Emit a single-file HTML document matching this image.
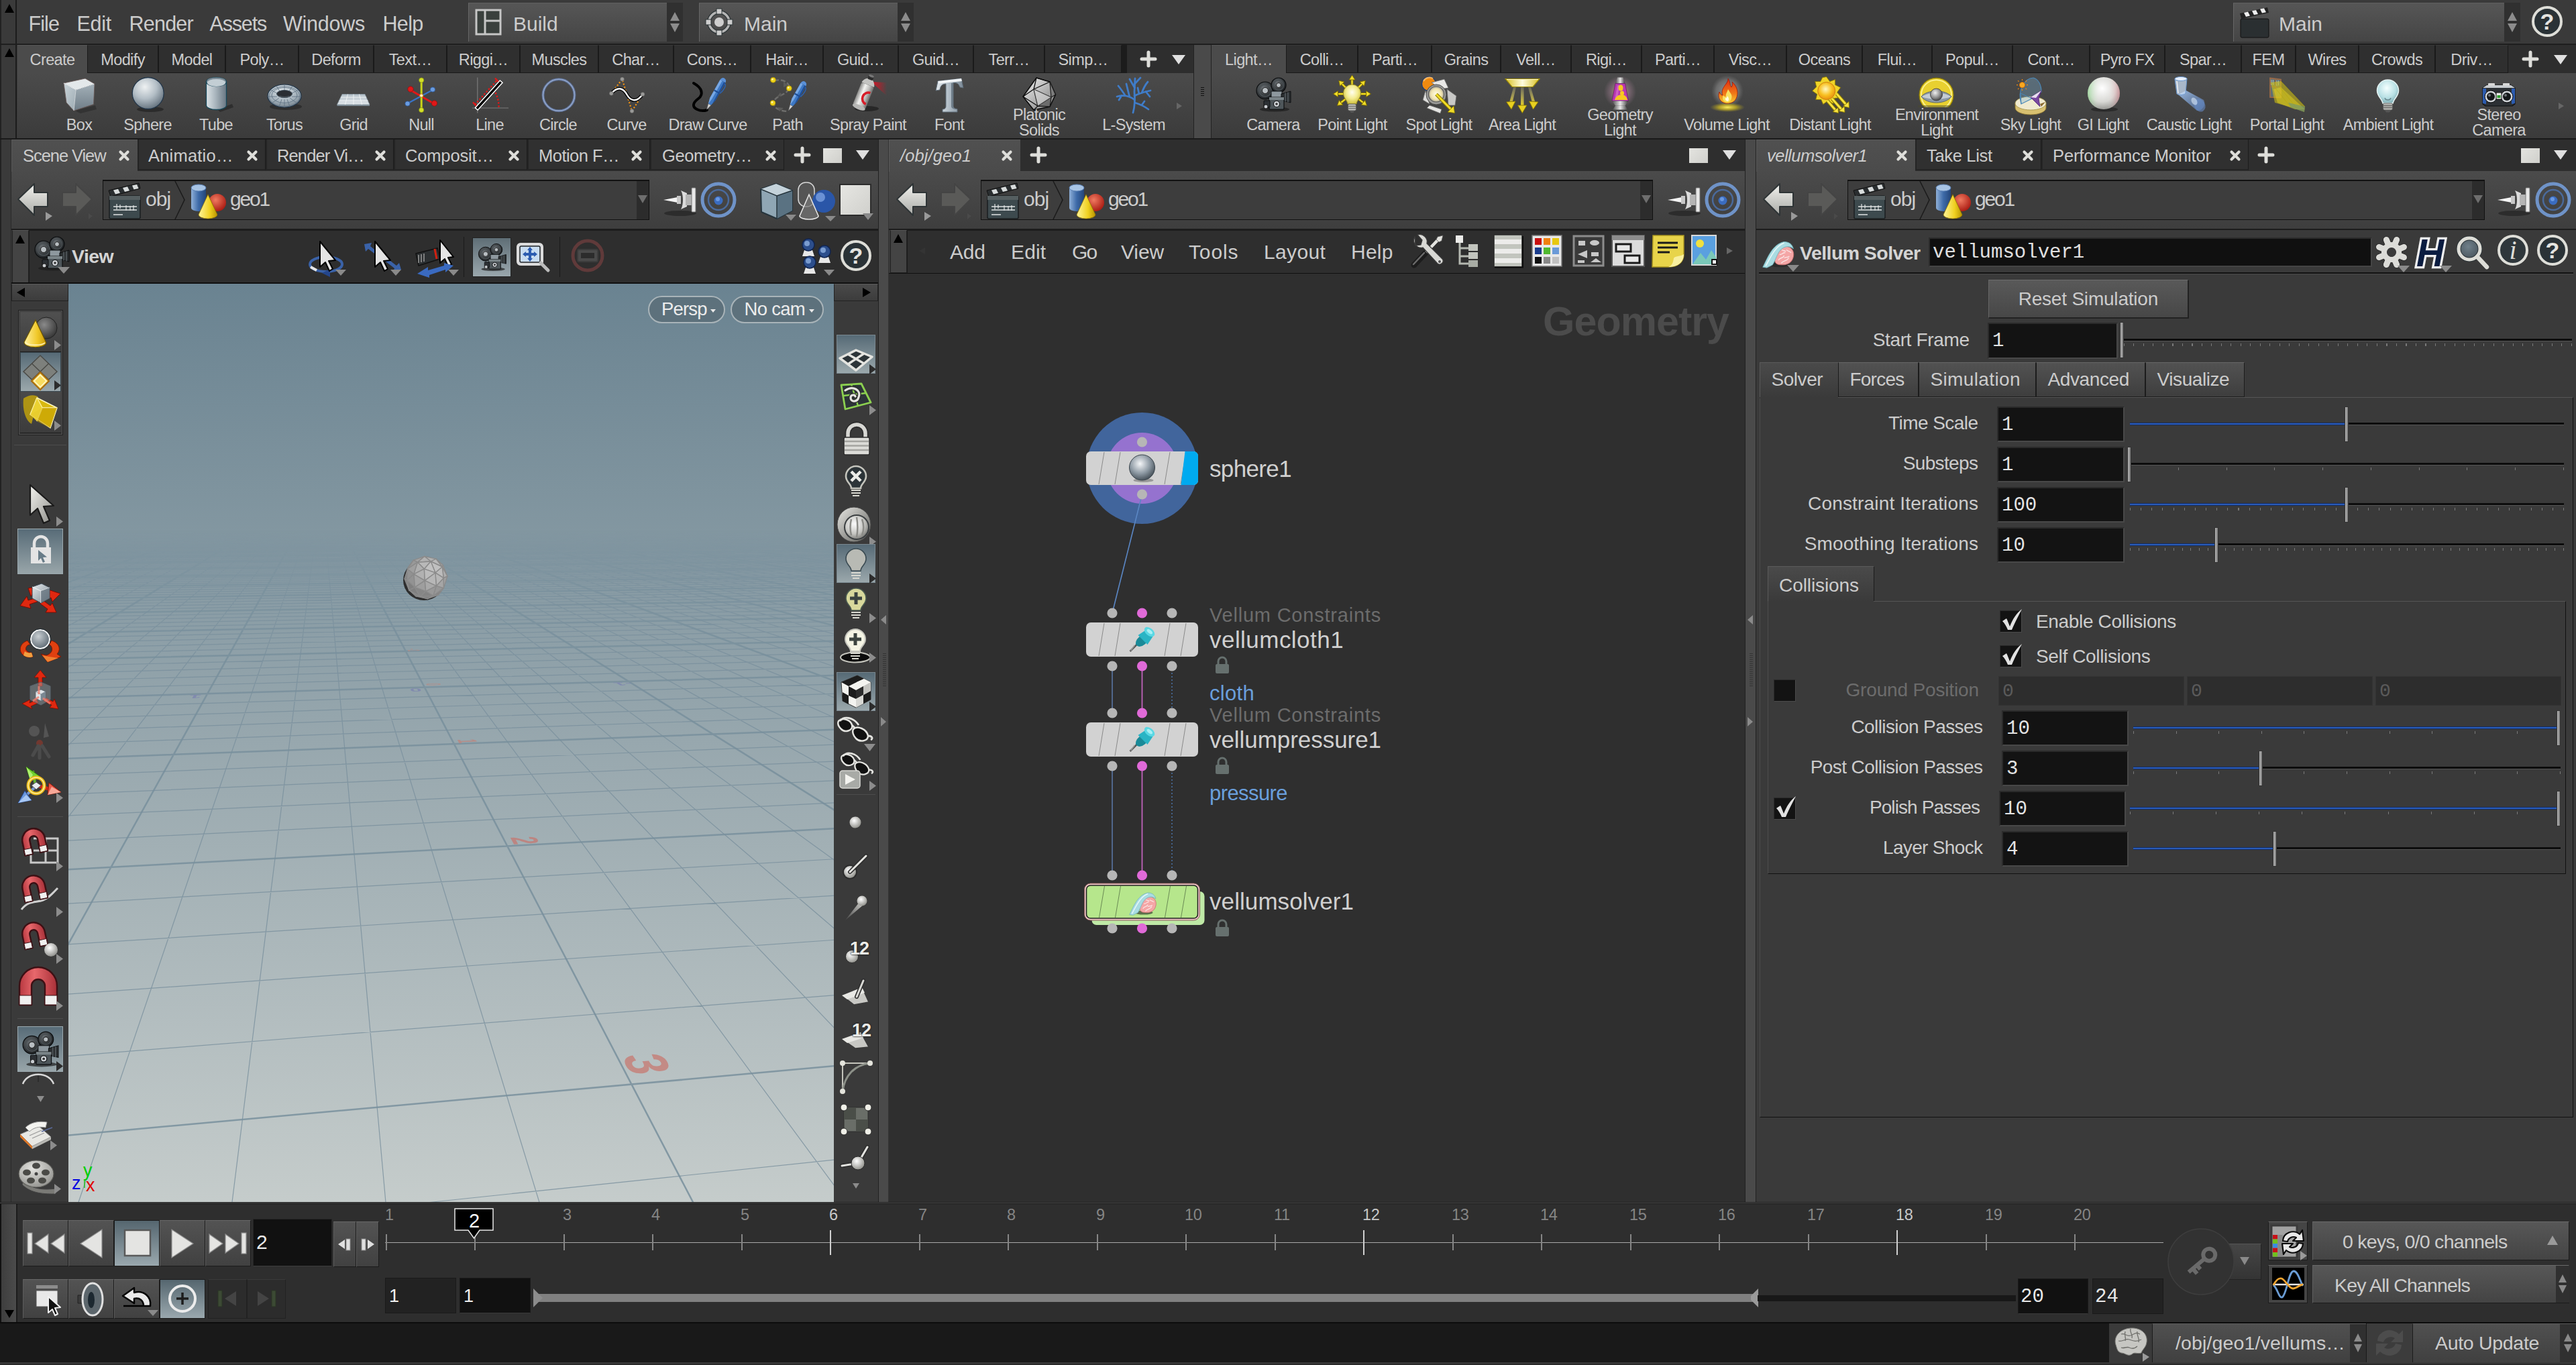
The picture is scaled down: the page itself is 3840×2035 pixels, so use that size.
<!DOCTYPE html>
<html><head><meta charset="utf-8"><title>Houdini</title>
<style>
svg{overflow:visible}
html,body{margin:0;padding:0;background:#3a3a3a}
body{width:3840px;height:2035px;position:relative;overflow:hidden;font-family:"Liberation Sans",sans-serif;color:#cccccc}
.a{position:absolute;box-sizing:border-box}
.t{position:absolute;white-space:nowrap;color:#cccccc}
.m{font-family:"Liberation Mono",monospace}
.btn{background:linear-gradient(#565656,#454545);border:1px solid #1e1e1e;box-shadow:inset 1px 1px 0 #6a6a6a}
.fld{background:#131313;border:2px solid #2a2a2a}
</style></head>
<body>
<div class="a" style="left:0px;top:0px;width:3840px;height:66px;background:#3a3a3a;"></div>
<div class="a" style="left:0px;top:0px;width:25px;height:206px;background:#3a3a3a;border-right:2px solid #1c1c1c;border-left:2px solid #222"></div>
<div class="a" style="left:0px;top:65px;width:3840px;height:2px;background:#1e1e1e;"></div>
<svg class="a" style="left:6px;top:6px;" width="16" height="14" viewBox="0 0 16 14"><path d="M8 0L15 13H1z" fill="#000"/></svg>
<svg class="a" style="left:6px;top:72px;" width="16" height="14" viewBox="0 0 16 14"><path d="M8 0L15 13H1z" fill="#000"/></svg>
<div class="t" style="top:19.8px;font-size:30.5px;line-height:30.5px;color:#cccccc;left:42.5px;letter-spacing:-0.91px;">File</div>
<div class="t" style="top:19.8px;font-size:30.5px;line-height:30.5px;color:#cccccc;left:114.5px;letter-spacing:-0.26px;">Edit</div>
<div class="t" style="top:19.8px;font-size:30.5px;line-height:30.5px;color:#cccccc;left:192.5px;letter-spacing:-0.76px;">Render</div>
<div class="t" style="top:19.8px;font-size:30.5px;line-height:30.5px;color:#cccccc;left:312.5px;letter-spacing:-1.17px;">Assets</div>
<div class="t" style="top:19.8px;font-size:30.5px;line-height:30.5px;color:#cccccc;left:422px;letter-spacing:-0.25px;">Windows</div>
<div class="t" style="top:19.8px;font-size:30.5px;line-height:30.5px;color:#cccccc;left:570.5px;letter-spacing:-0.68px;">Help</div>
<div class="a" style="left:698px;top:4px;width:320px;height:58px;background:linear-gradient(#565656,#454545);border-left:1px solid #666;border-top:1px solid #5e5e5e;"></div>
<div class="a" style="left:994px;top:4px;width:24px;height:58px;background:#303030;"></div>
<svg class="a" style="left:998px;top:18px;" width="16" height="30" viewBox="0 0 16 30"><path d="M8 0L15 13H1z M8 30L15 17H1z" fill="#8c8c8c"/></svg>
<svg class="a" style="left:707px;top:12px;" width="42" height="42" viewBox="0 0 42 42"><rect x="3" y="3" width="36" height="36" fill="#3a403d" stroke="#c6c6c6" stroke-width="3"/><path d="M16 3V39M16 19H39" stroke="#c6c6c6" stroke-width="3"/></svg>
<div class="t" style="top:20.7px;font-size:30px;line-height:30px;color:#cccccc;left:765px;">Build</div>
<div class="a" style="left:1042px;top:4px;width:320px;height:58px;background:linear-gradient(#565656,#454545);border-left:1px solid #666;border-top:1px solid #5e5e5e;"></div>
<div class="a" style="left:1338px;top:4px;width:24px;height:58px;background:#303030;"></div>
<svg class="a" style="left:1342px;top:18px;" width="16" height="30" viewBox="0 0 16 30"><path d="M8 0L15 13H1z M8 30L15 17H1z" fill="#8c8c8c"/></svg>
<svg class="a" style="left:1050px;top:11px;" width="44" height="44" viewBox="0 0 44 44"><circle cx="22" cy="22" r="15" fill="none" stroke="#2c3436" stroke-width="6"/><circle cx="22" cy="22" r="15" fill="none" stroke="#b4b4b4" stroke-width="3.500"/><circle cx="22" cy="22" r="7" fill="#cecece"/><g fill="#cecece" stroke="#2c3436" stroke-width="1"><rect x="18" y="2" width="8" height="8"/><rect x="18" y="34" width="8" height="8"/><rect x="2" y="18" width="8" height="8"/><rect x="34" y="18" width="8" height="8"/></g></svg>
<div class="t" style="top:20.7px;font-size:30px;line-height:30px;color:#cccccc;left:1109px;">Main</div>
<div class="a" style="left:3329px;top:4px;width:428px;height:58px;background:linear-gradient(#565656,#454545);border-left:1px solid #666;border-top:1px solid #5e5e5e;"></div>
<div class="a" style="left:3733px;top:4px;width:24px;height:58px;background:#303030;"></div>
<svg class="a" style="left:3737px;top:18px;" width="16" height="30" viewBox="0 0 16 30"><path d="M8 0L15 13H1z M8 30L15 17H1z" fill="#8c8c8c"/></svg>
<svg class="a" style="left:3336px;top:8px;" width="50" height="50" viewBox="0 0 50 50"><rect x="4" y="20" width="42" height="28" rx="2" fill="#2a2f31" stroke="#111" stroke-width="1"/><path d="M3 12L44 3L46 11L5 20z" fill="#222"/><path d="M9 11l6-1.4 3 6-6 1.4zM21 8.3l6-1.4 3 6-6 1.4zM33 5.6l6-1.4 3 6-6 1.4z" fill="#eee"/></svg>
<div class="t" style="top:20.7px;font-size:30px;line-height:30px;color:#cccccc;left:3397px;">Main</div>
<svg class="a" style="left:3773px;top:8px;" width="48" height="48" viewBox="0 0 48 48"><circle cx="24" cy="24" r="21" fill="#2a3236" stroke="#deded8" stroke-width="4"/><text x="24" y="36" font-family="Liberation Sans, sans-serif" font-weight="bold" font-size="34" fill="#e4e4e0" text-anchor="middle">?</text></svg>
<div class="a" style="left:26px;top:67px;width:3814px;height:42px;background:#2e2e2e;"></div>
<div class="a" style="left:26px;top:67px;width:104px;height:43px;background:#4b4b4b;border-top:1px solid #565656"></div>
<div class="t" style="top:78.2px;font-size:23.5px;line-height:23.5px;color:#cccccc;left:26.0px;width:104px;text-align:center;letter-spacing:-0.6px">Create</div>
<div class="a" style="left:130px;top:67px;width:106px;height:42px;background:#2f2f2f;border-left:1px solid #1a1a1a;border-right:1px solid #1a1a1a;border-bottom:1px solid #1a1a1a;border-top:1px solid #383838"></div>
<div class="t" style="top:78.2px;font-size:23.5px;line-height:23.5px;color:#cccccc;left:130.0px;width:106px;text-align:center;letter-spacing:-0.6px">Modify</div>
<div class="a" style="left:236px;top:67px;width:100px;height:42px;background:#2f2f2f;border-left:1px solid #1a1a1a;border-right:1px solid #1a1a1a;border-bottom:1px solid #1a1a1a;border-top:1px solid #383838"></div>
<div class="t" style="top:78.2px;font-size:23.5px;line-height:23.5px;color:#cccccc;left:236.0px;width:100px;text-align:center;letter-spacing:-0.6px">Model</div>
<div class="a" style="left:336px;top:67px;width:109px;height:42px;background:#2f2f2f;border-left:1px solid #1a1a1a;border-right:1px solid #1a1a1a;border-bottom:1px solid #1a1a1a;border-top:1px solid #383838"></div>
<div class="t" style="top:78.2px;font-size:23.5px;line-height:23.5px;color:#cccccc;left:336.0px;width:109px;text-align:center;letter-spacing:-0.6px">Poly…</div>
<div class="a" style="left:445px;top:67px;width:112px;height:42px;background:#2f2f2f;border-left:1px solid #1a1a1a;border-right:1px solid #1a1a1a;border-bottom:1px solid #1a1a1a;border-top:1px solid #383838"></div>
<div class="t" style="top:78.2px;font-size:23.5px;line-height:23.5px;color:#cccccc;left:445.0px;width:112px;text-align:center;letter-spacing:-0.6px">Deform</div>
<div class="a" style="left:557px;top:67px;width:109px;height:42px;background:#2f2f2f;border-left:1px solid #1a1a1a;border-right:1px solid #1a1a1a;border-bottom:1px solid #1a1a1a;border-top:1px solid #383838"></div>
<div class="t" style="top:78.2px;font-size:23.5px;line-height:23.5px;color:#cccccc;left:557.0px;width:109px;text-align:center;letter-spacing:-0.6px">Text…</div>
<div class="a" style="left:666px;top:67px;width:109px;height:42px;background:#2f2f2f;border-left:1px solid #1a1a1a;border-right:1px solid #1a1a1a;border-bottom:1px solid #1a1a1a;border-top:1px solid #383838"></div>
<div class="t" style="top:78.2px;font-size:23.5px;line-height:23.5px;color:#cccccc;left:666.0px;width:109px;text-align:center;letter-spacing:-0.6px">Riggi…</div>
<div class="a" style="left:775px;top:67px;width:117px;height:42px;background:#2f2f2f;border-left:1px solid #1a1a1a;border-right:1px solid #1a1a1a;border-bottom:1px solid #1a1a1a;border-top:1px solid #383838"></div>
<div class="t" style="top:78.2px;font-size:23.5px;line-height:23.5px;color:#cccccc;left:775.0px;width:117px;text-align:center;letter-spacing:-0.6px">Muscles</div>
<div class="a" style="left:892px;top:67px;width:112px;height:42px;background:#2f2f2f;border-left:1px solid #1a1a1a;border-right:1px solid #1a1a1a;border-bottom:1px solid #1a1a1a;border-top:1px solid #383838"></div>
<div class="t" style="top:78.2px;font-size:23.5px;line-height:23.5px;color:#cccccc;left:892.0px;width:112px;text-align:center;letter-spacing:-0.6px">Char…</div>
<div class="a" style="left:1004px;top:67px;width:115px;height:42px;background:#2f2f2f;border-left:1px solid #1a1a1a;border-right:1px solid #1a1a1a;border-bottom:1px solid #1a1a1a;border-top:1px solid #383838"></div>
<div class="t" style="top:78.2px;font-size:23.5px;line-height:23.5px;color:#cccccc;left:1004.0px;width:115px;text-align:center;letter-spacing:-0.6px">Cons…</div>
<div class="a" style="left:1119px;top:67px;width:108px;height:42px;background:#2f2f2f;border-left:1px solid #1a1a1a;border-right:1px solid #1a1a1a;border-bottom:1px solid #1a1a1a;border-top:1px solid #383838"></div>
<div class="t" style="top:78.2px;font-size:23.5px;line-height:23.5px;color:#cccccc;left:1119.0px;width:108px;text-align:center;letter-spacing:-0.6px">Hair…</div>
<div class="a" style="left:1227px;top:67px;width:112px;height:42px;background:#2f2f2f;border-left:1px solid #1a1a1a;border-right:1px solid #1a1a1a;border-bottom:1px solid #1a1a1a;border-top:1px solid #383838"></div>
<div class="t" style="top:78.2px;font-size:23.5px;line-height:23.5px;color:#cccccc;left:1227.0px;width:112px;text-align:center;letter-spacing:-0.6px">Guid…</div>
<div class="a" style="left:1339px;top:67px;width:112px;height:42px;background:#2f2f2f;border-left:1px solid #1a1a1a;border-right:1px solid #1a1a1a;border-bottom:1px solid #1a1a1a;border-top:1px solid #383838"></div>
<div class="t" style="top:78.2px;font-size:23.5px;line-height:23.5px;color:#cccccc;left:1339.0px;width:112px;text-align:center;letter-spacing:-0.6px">Guid…</div>
<div class="a" style="left:1451px;top:67px;width:106px;height:42px;background:#2f2f2f;border-left:1px solid #1a1a1a;border-right:1px solid #1a1a1a;border-bottom:1px solid #1a1a1a;border-top:1px solid #383838"></div>
<div class="t" style="top:78.2px;font-size:23.5px;line-height:23.5px;color:#cccccc;left:1451.0px;width:106px;text-align:center;letter-spacing:-0.6px">Terr…</div>
<div class="a" style="left:1557px;top:67px;width:115px;height:42px;background:#2f2f2f;border-left:1px solid #1a1a1a;border-right:1px solid #1a1a1a;border-bottom:1px solid #1a1a1a;border-top:1px solid #383838"></div>
<div class="t" style="top:78.2px;font-size:23.5px;line-height:23.5px;color:#cccccc;left:1557.0px;width:115px;text-align:center;letter-spacing:-0.6px">Simp…</div>
<div class="a" style="left:1672px;top:67px;width:8px;height:42px;background:#1c1c1c;"></div>
<svg class="a" style="left:1699px;top:75px;" width="26" height="26" viewBox="0 0 26 26"><path d="M13 3v20M3 13h20" stroke="#dededa" stroke-width="5" stroke-linecap="round"/></svg>
<svg class="a" style="left:1746px;top:81px;" width="22" height="16" viewBox="0 0 22 16"><path d="M1 1H21L11 15z" fill="#e0e0e0"/></svg>
<div class="a" style="left:1779px;top:67px;width:27px;height:139px;background:#4a4a4a;border-left:1px solid #222;border-right:1px solid #222"></div>
<div class="a" style="left:1790px;top:130px;width:5px;height:14px;background:repeating-linear-gradient(#111 0 1px,transparent 1px 3px)"></div>
<div class="a" style="left:1806px;top:67px;width:111px;height:43px;background:#4b4b4b;border-top:1px solid #565656"></div>
<div class="t" style="top:78.2px;font-size:23.5px;line-height:23.5px;color:#cccccc;left:1806.0px;width:111px;text-align:center;letter-spacing:-0.6px">Light…</div>
<div class="a" style="left:1917px;top:67px;width:107px;height:42px;background:#2f2f2f;border-left:1px solid #1a1a1a;border-right:1px solid #1a1a1a;border-bottom:1px solid #1a1a1a;border-top:1px solid #383838"></div>
<div class="t" style="top:78.2px;font-size:23.5px;line-height:23.5px;color:#cccccc;left:1917.0px;width:107px;text-align:center;letter-spacing:-0.6px">Colli…</div>
<div class="a" style="left:2024px;top:67px;width:110px;height:42px;background:#2f2f2f;border-left:1px solid #1a1a1a;border-right:1px solid #1a1a1a;border-bottom:1px solid #1a1a1a;border-top:1px solid #383838"></div>
<div class="t" style="top:78.2px;font-size:23.5px;line-height:23.5px;color:#cccccc;left:2024.0px;width:110px;text-align:center;letter-spacing:-0.6px">Parti…</div>
<div class="a" style="left:2134px;top:67px;width:103px;height:42px;background:#2f2f2f;border-left:1px solid #1a1a1a;border-right:1px solid #1a1a1a;border-bottom:1px solid #1a1a1a;border-top:1px solid #383838"></div>
<div class="t" style="top:78.2px;font-size:23.5px;line-height:23.5px;color:#cccccc;left:2134.0px;width:103px;text-align:center;letter-spacing:-0.6px">Grains</div>
<div class="a" style="left:2237px;top:67px;width:105px;height:42px;background:#2f2f2f;border-left:1px solid #1a1a1a;border-right:1px solid #1a1a1a;border-bottom:1px solid #1a1a1a;border-top:1px solid #383838"></div>
<div class="t" style="top:78.2px;font-size:23.5px;line-height:23.5px;color:#cccccc;left:2237.0px;width:105px;text-align:center;letter-spacing:-0.6px">Vell…</div>
<div class="a" style="left:2342px;top:67px;width:105px;height:42px;background:#2f2f2f;border-left:1px solid #1a1a1a;border-right:1px solid #1a1a1a;border-bottom:1px solid #1a1a1a;border-top:1px solid #383838"></div>
<div class="t" style="top:78.2px;font-size:23.5px;line-height:23.5px;color:#cccccc;left:2342.0px;width:105px;text-align:center;letter-spacing:-0.6px">Rigi…</div>
<div class="a" style="left:2447px;top:67px;width:108px;height:42px;background:#2f2f2f;border-left:1px solid #1a1a1a;border-right:1px solid #1a1a1a;border-bottom:1px solid #1a1a1a;border-top:1px solid #383838"></div>
<div class="t" style="top:78.2px;font-size:23.5px;line-height:23.5px;color:#cccccc;left:2447.0px;width:108px;text-align:center;letter-spacing:-0.6px">Parti…</div>
<div class="a" style="left:2555px;top:67px;width:108px;height:42px;background:#2f2f2f;border-left:1px solid #1a1a1a;border-right:1px solid #1a1a1a;border-bottom:1px solid #1a1a1a;border-top:1px solid #383838"></div>
<div class="t" style="top:78.2px;font-size:23.5px;line-height:23.5px;color:#cccccc;left:2555.0px;width:108px;text-align:center;letter-spacing:-0.6px">Visc…</div>
<div class="a" style="left:2663px;top:67px;width:113px;height:42px;background:#2f2f2f;border-left:1px solid #1a1a1a;border-right:1px solid #1a1a1a;border-bottom:1px solid #1a1a1a;border-top:1px solid #383838"></div>
<div class="t" style="top:78.2px;font-size:23.5px;line-height:23.5px;color:#cccccc;left:2663.0px;width:113px;text-align:center;letter-spacing:-0.6px">Oceans</div>
<div class="a" style="left:2776px;top:67px;width:104px;height:42px;background:#2f2f2f;border-left:1px solid #1a1a1a;border-right:1px solid #1a1a1a;border-bottom:1px solid #1a1a1a;border-top:1px solid #383838"></div>
<div class="t" style="top:78.2px;font-size:23.5px;line-height:23.5px;color:#cccccc;left:2776.0px;width:104px;text-align:center;letter-spacing:-0.6px">Flui…</div>
<div class="a" style="left:2880px;top:67px;width:120px;height:42px;background:#2f2f2f;border-left:1px solid #1a1a1a;border-right:1px solid #1a1a1a;border-bottom:1px solid #1a1a1a;border-top:1px solid #383838"></div>
<div class="t" style="top:78.2px;font-size:23.5px;line-height:23.5px;color:#cccccc;left:2880.0px;width:120px;text-align:center;letter-spacing:-0.6px">Popul…</div>
<div class="a" style="left:3000px;top:67px;width:115px;height:42px;background:#2f2f2f;border-left:1px solid #1a1a1a;border-right:1px solid #1a1a1a;border-bottom:1px solid #1a1a1a;border-top:1px solid #383838"></div>
<div class="t" style="top:78.2px;font-size:23.5px;line-height:23.5px;color:#cccccc;left:3000.0px;width:115px;text-align:center;letter-spacing:-0.6px">Cont…</div>
<div class="a" style="left:3115px;top:67px;width:112px;height:42px;background:#2f2f2f;border-left:1px solid #1a1a1a;border-right:1px solid #1a1a1a;border-bottom:1px solid #1a1a1a;border-top:1px solid #383838"></div>
<div class="t" style="top:78.2px;font-size:23.5px;line-height:23.5px;color:#cccccc;left:3115.0px;width:112px;text-align:center;letter-spacing:-0.6px">Pyro FX</div>
<div class="a" style="left:3227px;top:67px;width:114px;height:42px;background:#2f2f2f;border-left:1px solid #1a1a1a;border-right:1px solid #1a1a1a;border-bottom:1px solid #1a1a1a;border-top:1px solid #383838"></div>
<div class="t" style="top:78.2px;font-size:23.5px;line-height:23.5px;color:#cccccc;left:3227.0px;width:114px;text-align:center;letter-spacing:-0.6px">Spar…</div>
<div class="a" style="left:3341px;top:67px;width:81px;height:42px;background:#2f2f2f;border-left:1px solid #1a1a1a;border-right:1px solid #1a1a1a;border-bottom:1px solid #1a1a1a;border-top:1px solid #383838"></div>
<div class="t" style="top:78.2px;font-size:23.5px;line-height:23.5px;color:#cccccc;left:3341.0px;width:81px;text-align:center;letter-spacing:-0.6px">FEM</div>
<div class="a" style="left:3422px;top:67px;width:94px;height:42px;background:#2f2f2f;border-left:1px solid #1a1a1a;border-right:1px solid #1a1a1a;border-bottom:1px solid #1a1a1a;border-top:1px solid #383838"></div>
<div class="t" style="top:78.2px;font-size:23.5px;line-height:23.5px;color:#cccccc;left:3422.0px;width:94px;text-align:center;letter-spacing:-0.6px">Wires</div>
<div class="a" style="left:3516px;top:67px;width:114px;height:42px;background:#2f2f2f;border-left:1px solid #1a1a1a;border-right:1px solid #1a1a1a;border-bottom:1px solid #1a1a1a;border-top:1px solid #383838"></div>
<div class="t" style="top:78.2px;font-size:23.5px;line-height:23.5px;color:#cccccc;left:3516.0px;width:114px;text-align:center;letter-spacing:-0.6px">Crowds</div>
<div class="a" style="left:3630px;top:67px;width:109px;height:42px;background:#2f2f2f;border-left:1px solid #1a1a1a;border-right:1px solid #1a1a1a;border-bottom:1px solid #1a1a1a;border-top:1px solid #383838"></div>
<div class="t" style="top:78.2px;font-size:23.5px;line-height:23.5px;color:#cccccc;left:3630.0px;width:109px;text-align:center;letter-spacing:-0.6px">Driv…</div>
<svg class="a" style="left:3759px;top:75px;" width="26" height="26" viewBox="0 0 26 26"><path d="M13 3v20M3 13h20" stroke="#dededa" stroke-width="5" stroke-linecap="round"/></svg>
<svg class="a" style="left:3806px;top:81px;" width="22" height="16" viewBox="0 0 22 16"><path d="M1 1H21L11 15z" fill="#e0e0e0"/></svg>
<div class="a" style="left:26px;top:109px;width:1753px;height:97px;background:linear-gradient(#4b4b4b,#3b3b3b);"></div>
<div class="a" style="left:1806px;top:109px;width:2034px;height:97px;background:linear-gradient(#4b4b4b,#3b3b3b);"></div>
<div class="a" style="left:0px;top:206px;width:3840px;height:2px;background:#1a1a1a;"></div>
<svg class="a" style="left:90px;top:113px;" width="56" height="56" viewBox="0 0 56 56"><defs><linearGradient id="bxl" x1="0" y1="0" x2="1" y2="1"><stop offset="0" stop-color="#c9d3d8"/><stop offset="1" stop-color="#9dabb3"/></linearGradient><linearGradient id="bxr" x1="0" y1="0" x2="0" y2="1"><stop offset="0" stop-color="#a3b0b8"/><stop offset="1" stop-color="#6f7d87"/></linearGradient></defs>
<path d="M22 52L52 44L54 50L30 56z" fill="#2a2a2a" opacity=".6"/>
<path d="M5 11L37 4L51 12L23 21z" fill="#e3e8ea"/><path d="M5 11L23 21L20 52L9 40z" fill="url(#bxl)"/><path d="M23 21L51 12L49.5 42.5L20 52z" fill="url(#bxr)"/>
<path d="M5 11L37 4L51 12L49.5 42.5L20 52L9 40z" fill="none" stroke="#6c5a58" stroke-width="0.8"/><path d="M5 11L23 21L51 12" fill="none" stroke="#f4f6f7" stroke-width="1" stroke-dasharray="1.5 1"/><path d="M23 21L20 52" stroke="#dfe5e8" stroke-width="0.8"/></svg>
<div class="t" style="top:174.7px;font-size:23.5px;line-height:23.5px;color:#cccccc;left:-32.0px;width:300px;text-align:center;letter-spacing:-0.7px">Box</div>
<svg class="a" style="left:192px;top:113px;" width="56" height="56" viewBox="0 0 56 56"><defs><radialGradient id="shs" cx="0.4" cy="0.3" r="0.75"><stop offset="0" stop-color="#eef1f2"/><stop offset="0.5" stop-color="#b3bec6"/><stop offset="1" stop-color="#5e6c78"/></radialGradient></defs>
<ellipse cx="32" cy="50" rx="20" ry="4" fill="#222" opacity=".7"/><circle cx="28.7" cy="26" r="23.5" fill="url(#shs)" stroke="#22364a" stroke-width="1.3"/></svg>
<div class="t" style="top:174.7px;font-size:23.5px;line-height:23.5px;color:#cccccc;left:70.0px;width:300px;text-align:center;letter-spacing:-0.7px">Sphere</div>
<svg class="a" style="left:294px;top:113px;" width="56" height="56" viewBox="0 0 56 56"><defs><linearGradient id="tbg" x1="0" y1="0" x2="1" y2="0"><stop offset="0" stop-color="#dbe3e7"/><stop offset="0.45" stop-color="#aab6be"/><stop offset="1" stop-color="#687682"/></linearGradient></defs>
<path d="M30 50L52 42L54 47L34 54z" fill="#222" opacity=".6"/>
<path d="M13.5 9V44A15 6.5 0 0 0 43.5 44V9z" fill="url(#tbg)" stroke="#17485a" stroke-width="1.3"/><ellipse cx="28.5" cy="9" rx="15" ry="6.5" fill="#8b99a3" stroke="#17485a" stroke-width="1.3"/><path d="M15 10A13.5 5 0 0 1 42 10A13.5 6 0 0 1 15 10z" fill="#c3ced4"/><path d="M15.5 8A13 4.5 0 0 1 41.500 8" fill="none" stroke="#7c8a94" stroke-width="2"/></svg>
<div class="t" style="top:174.7px;font-size:23.5px;line-height:23.5px;color:#cccccc;left:172.0px;width:300px;text-align:center;letter-spacing:-0.7px">Tube</div>
<svg class="a" style="left:396px;top:113px;" width="56" height="56" viewBox="0 0 56 56"><defs><radialGradient id="trg" cx="0.45" cy="0.3" r="0.8"><stop offset="0" stop-color="#dfe6ea"/><stop offset="0.6" stop-color="#9fadb7"/><stop offset="1" stop-color="#5f6d79"/></radialGradient></defs>
<ellipse cx="30" cy="46" rx="24" ry="5" fill="#222" opacity=".6"/>
<ellipse cx="28" cy="30" rx="25" ry="17" fill="url(#trg)" stroke="#22364a" stroke-width="1.2"/>
<g fill="none" stroke="#5d7080" stroke-width="0.8"><ellipse cx="28" cy="29" rx="19" ry="11.5"/><ellipse cx="28" cy="31" rx="23" ry="15"/><path d="M28 13V22M16 15L21 23M40 15L35 23M7 21L17 26M49 21L39 26M3 31H17M53 31H39M9 41L20 33M47 41L36 33M20 46L24 35M36 46L32 35M28 47V35"/></g>
<ellipse cx="28" cy="27" rx="11.500" ry="5.5" fill="#2a2e33" stroke="#44525e" stroke-width="1"/><path d="M17 28A11.5 5 0 0 0 39 28A11 3 0 0 1 17 28z" fill="#76848e"/></svg>
<div class="t" style="top:174.7px;font-size:23.5px;line-height:23.5px;color:#cccccc;left:274.0px;width:300px;text-align:center;letter-spacing:-0.7px">Torus</div>
<svg class="a" style="left:499px;top:113px;" width="56" height="56" viewBox="0 0 56 56"><defs><linearGradient id="grg" x1="0" y1="0" x2="0" y2="1"><stop offset="0" stop-color="#b5c1c9"/><stop offset="1" stop-color="#dfe5e9"/></linearGradient></defs>
<path d="M11 27.500H45L52 43H3.5z" fill="url(#grg)" stroke="#8998a3" stroke-width="0.8"/><path d="M3.5 43H52V45H3.500z" fill="#7d8b95"/>
<g stroke="#f2f5f6" stroke-width="0.9" fill="none"><path d="M19.5 27.5L15.5 43M28 27.5V43M36.500 27.5L40.500 43M9 32H47M6.5 37H49.500"/></g></svg>
<div class="t" style="top:174.7px;font-size:23.5px;line-height:23.5px;color:#cccccc;left:377.0px;width:300px;text-align:center;letter-spacing:-0.7px">Grid</div>
<svg class="a" style="left:600px;top:113px;" width="56" height="56" viewBox="0 0 56 56"><path d="M10.5 20.5L46 41" stroke="#e01818" stroke-width="3"/><circle cx="12" cy="20" r="4.2" fill="#e01818" stroke="#901010" stroke-width="0.8"/><circle cx="47.500" cy="41" r="4.2" fill="#e01818" stroke="#901010" stroke-width="0.8"/>
<path d="M45 21L8 41" stroke="#3a74c8" stroke-width="2"/><circle cx="45" cy="20.500" r="3.6" fill="#6a9ce0" stroke="#2c5aa0" stroke-width="0.8"/><circle cx="7.5" cy="41.500" r="3.6" fill="#6a9ce0" stroke="#2c5aa0" stroke-width="0.8"/>
<path d="M28.2 7V50" stroke="#c8d418" stroke-width="3"/><circle cx="28.2" cy="6.500" r="3.6" fill="#d4e028" stroke="#8a9410" stroke-width="0.8"/><circle cx="28.2" cy="51" r="3.6" fill="#d4e028" stroke="#8a9410" stroke-width="0.8"/><circle cx="28.2" cy="29.5" r="2.6" fill="#f8f0c0" stroke="#d08010" stroke-width="1"/></svg>
<div class="t" style="top:174.7px;font-size:23.5px;line-height:23.5px;color:#cccccc;left:478.0px;width:300px;text-align:center;letter-spacing:-0.7px">Null</div>
<svg class="a" style="left:702px;top:113px;" width="56" height="56" viewBox="0 0 56 56"><path d="M9.800 2.500V55.500M1.800 48H56" stroke="#7a7a7a" stroke-width="1.2"/>
<path d="M6 43L39 6.500" stroke="#e01818" stroke-width="2.4" stroke-dasharray="2.5 2.5"/><path d="M3 39.500L9 46M36 3.500L42 10" stroke="#e01818" stroke-width="2.4"/>
<path d="M36.500 25Q42 36 41.500 48" fill="none" stroke="#e01818" stroke-width="2.400" stroke-dasharray="2.5 2.5"/>
<path d="M10 47.500L43.500 10.500" stroke="#ffffff" stroke-width="6.5" stroke-linecap="square"/><path d="M10 47.500L43.500 10.500" stroke="#000" stroke-width="3.600" stroke-linecap="square"/></svg>
<div class="t" style="top:174.7px;font-size:23.5px;line-height:23.5px;color:#cccccc;left:580.0px;width:300px;text-align:center;letter-spacing:-0.7px">Line</div>
<svg class="a" style="left:804px;top:113px;" width="56" height="56" viewBox="0 0 56 56"><circle cx="29" cy="28.700" r="23.500" fill="none" stroke="#5a6c90" stroke-width="4"/><circle cx="29" cy="28.700" r="23.500" fill="none" stroke="#8fa3c8" stroke-width="1.8"/></svg>
<div class="t" style="top:174.7px;font-size:23.5px;line-height:23.5px;color:#cccccc;left:682.0px;width:300px;text-align:center;letter-spacing:-0.7px">Circle</div>
<svg class="a" style="left:906px;top:113px;" width="56" height="56" viewBox="0 0 56 56"><path d="M5.300 26.300L21.500 5L36 52.500L52 27.500" fill="none" stroke="#f09010" stroke-width="2.2" stroke-dasharray="2.2 2.6"/>
<path d="M5.300 26.300C16 14 24 20 28.500 28S42 42 52 27.500" fill="none" stroke="#000" stroke-width="5"/><path d="M5.300 26.300C16 14 24 20 28.500 28S42 42 52 27.500" fill="none" stroke="#fff" stroke-width="2.4"/>
<g fill="#9a9a98" stroke="#555" stroke-width="0.6"><circle cx="5.300" cy="26.300" r="3"/><circle cx="21.500" cy="5" r="3"/><circle cx="36" cy="52.500" r="3"/><circle cx="52" cy="27.500" r="3"/></g></svg>
<div class="t" style="top:174.7px;font-size:23.5px;line-height:23.5px;color:#cccccc;left:784.0px;width:300px;text-align:center;letter-spacing:-0.7px">Curve</div>
<svg class="a" style="left:1027px;top:113px;" width="56" height="56" viewBox="0 0 56 56"><path d="M7 11C20 18 22 28 14 34C6 40 4 46 12 50C18 53 24 52 27 51" fill="none" stroke="#000" stroke-width="4" stroke-linecap="round"/><path d="M7 11C14 15 18 20 18 25" fill="none" stroke="#000" stroke-width="2"/><g transform="translate(50.5,8) rotate(29.5)"><path d="M-4.500 0h9v31l-2.300 9h-4.400l-2.300-9z" fill="#3d78c4"/><path d="M-4.500 0h3.500v31l-1.200 9h0l-2.300-9z" fill="#78a8e4"/><path d="M2 0h2.500v31l-1.500 6z" fill="#1f4e96"/><path d="M-4.500 0a4.500 5 0 0 1 9 0z" fill="#5a90d8"/><path d="M-4.600 17h9.200v2.200h-9.200z" fill="#1f4e96"/><path d="M4.500 2c3.500 1 3.500 10 0.800 16" fill="none" stroke="#2c62b0" stroke-width="1.500"/><path d="M-2.200 40h4.400l-2.200 8.500z" fill="#d8d8d8" stroke="#777" stroke-width="0.500"/></g></svg>
<div class="t" style="top:174.7px;font-size:23.5px;line-height:23.5px;color:#cccccc;left:905.0px;width:300px;text-align:center;letter-spacing:-0.7px">Draw Curve</div>
<svg class="a" style="left:1146px;top:113px;" width="56" height="56" viewBox="0 0 56 56"><path d="M8 7C24 4 32 12 30 19C26 30 10 28 7 40C8 50 18 52 27 53" fill="none" stroke="#6e6e6c" stroke-width="2.4" stroke-dasharray="7 3"/>
<path d="M22 9l7 5-7 3zM20 29l-8 3 5-7zM13 47l9 1-6 5z" fill="#5c5c5a"/>
<g fill="#f0d418" stroke="#9a8408" stroke-width="0.8"><circle cx="6.500" cy="6.300" r="4"/><circle cx="30.300" cy="18.700" r="4"/><circle cx="6" cy="40.500" r="4"/></g><g fill="#fff8b0"><circle cx="5.500" cy="5.300" r="1.400"/><circle cx="29.300" cy="17.700" r="1.400"/><circle cx="5" cy="39.500" r="1.400"/></g><g transform="translate(51.5,13) rotate(29.5)"><path d="M-4.500 0h9v27l-2.300 9h-4.360l-2.300-9z" fill="#3d78c4"/><path d="M-4.500 0h3.500v27l-1.200 9h0l-2.300-9z" fill="#78a8e4"/><path d="M2 0h2.500v27l-1.500 6z" fill="#1f4e96"/><path d="M-4.500 0a4.500 5 0 0 1 9 0z" fill="#5a90d8"/><path d="M-4.600 17h9.200v2.200h-9.200z" fill="#1f4e96"/><path d="M4.500 2c3.500 1 3.500 10 0.800 16" fill="none" stroke="#2c62b0" stroke-width="1.500"/><path d="M-2.200 36h4.360l-2.200 8.500z" fill="#d8d8d8" stroke="#777" stroke-width="0.500"/></g></svg>
<div class="t" style="top:174.7px;font-size:23.5px;line-height:23.5px;color:#cccccc;left:1024.0px;width:300px;text-align:center;letter-spacing:-0.7px">Path</div>
<svg class="a" style="left:1266px;top:113px;" width="56" height="56" viewBox="0 0 56 56"><defs><linearGradient id="spg" x1="0" y1="0" x2="1" y2="0"><stop offset="0" stop-color="#8a8a88"/><stop offset="0.35" stop-color="#f4f4f2"/><stop offset="0.7" stop-color="#bcbcba"/><stop offset="1" stop-color="#6c6c6a"/></linearGradient><linearGradient id="spr" x1="0" y1="0" x2="1" y2="0"><stop offset="0" stop-color="#e01020"/><stop offset="1" stop-color="#e01020" stop-opacity="0"/></linearGradient></defs>
<ellipse cx="26" cy="49" rx="18" ry="4" fill="#1c1c1c" opacity=".7"/>
<path d="M33 9L56 10V30z" fill="url(#spr)"/>
<g transform="translate(21,30) rotate(22)"><rect x="-10" y="-18" width="20" height="36" rx="3" fill="url(#spg)"/><ellipse cx="0" cy="18" rx="10" ry="3.500" fill="#b8b8b6"/><path d="M-10 -18C-9 -24 -5 -26 -4 -27h8c1 1 5 3 6 9z" fill="#c4c4c2"/><rect x="-4" y="-32" width="8" height="6" rx="1.500" fill="#2c2c2c"/><ellipse cx="0" cy="-32" rx="4" ry="1.800" fill="#777"/><path d="M8 -8A8.500 9 0 1 0 8 10" fill="none" stroke="#d81c28" stroke-width="3.600"/></g></svg>
<div class="t" style="top:174.7px;font-size:23.5px;line-height:23.5px;color:#cccccc;left:1144.0px;width:300px;text-align:center;letter-spacing:-0.7px">Spray Paint</div>
<svg class="a" style="left:1387px;top:113px;" width="56" height="56" viewBox="0 0 56 56"><defs><linearGradient id="fng" x1="0" y1="0" x2="1" y2="0"><stop offset="0" stop-color="#e4eaee"/><stop offset="0.5" stop-color="#aebac4"/><stop offset="1" stop-color="#7c8a96"/></linearGradient></defs>
<path d="M11 8L46 4L49 18L44 17C42 12 40 10 34 10.500V45C34 48 36 49 40 49.500V54H18V50C22 49.500 23 48 23 45V12C17 12.500 15 15 14 21L8 22z" fill="url(#fng)" stroke="#5e6c78" stroke-width="1"/><path d="M11 8L46 4L47 8L13 11.500z" fill="#f2f5f7"/><path d="M34 10.500V45C34 48 36 49 40 49.500L37 50C33 49 31 48 31 45V11z" fill="#6e7c88"/></svg>
<div class="t" style="top:174.7px;font-size:23.5px;line-height:23.5px;color:#cccccc;left:1265.0px;width:300px;text-align:center;letter-spacing:-0.7px">Font</div>
<svg class="a" style="left:1521px;top:113px;" width="56" height="56" viewBox="0 0 56 56"><defs><linearGradient id="plg" x1="0" y1="0" x2="1" y2="1"><stop offset="0" stop-color="#f4f4f4"/><stop offset="1" stop-color="#787878"/></linearGradient></defs>
<path d="M24 3L44 9L52.500 28L44 46L20 51L4 31z" fill="url(#plg)" stroke="#0c0c0c" stroke-width="1.600" stroke-linejoin="round"/>
<path d="M24 3L20 20L4 31M24 3L44 9L20 20L46 32L44 9M46 32L52.500 28M46 32L44 46M46 32L26 45L20 20M26 45L4 31M26 45L20 51M26 45L44 46" fill="none" stroke="#0c0c0c" stroke-width="1.300" stroke-linejoin="round"/>
<path d="M20 20L46 32L26 45z" fill="#d8d8d8" opacity=".55"/><path d="M46 32L44 46L26 45z" fill="#4a4a4a" opacity=".55"/><path d="M44 9L52.500 28L46 32z" fill="#5a5a5a" opacity=".5"/></svg>
<div class="t" style="top:159.7px;font-size:23.5px;line-height:23.5px;color:#cccccc;left:1399.0px;width:300px;text-align:center;letter-spacing:-0.7px">Platonic</div>
<div class="t" style="top:182.7px;font-size:23.5px;line-height:23.5px;color:#cccccc;left:1399.0px;width:300px;text-align:center;letter-spacing:-0.7px">Solids</div>
<svg class="a" style="left:1662px;top:113px;" width="56" height="56" viewBox="0 0 56 56"><g fill="none" stroke="#3f7cc8" stroke-width="2.800" stroke-linecap="round" stroke-linejoin="round"><path d="M27 55C30 44 30 34 29 24L30 4"/><path d="M29.500 36C22 30 14 28 3 31M15 29C12 24 9 20 5 15M22 31.500C20 25 19 20 17 12M10 29.500L6 36"/><path d="M29 30C36 26 44 24 53 22M40 25.500C42 20 44 15 49 9M46 23.500L52 31M36 27L34 18"/><path d="M29.500 18L22 5M29.500 12L38 3M29.500 40C36 42 42 44 50 50M40 43.500L44 38"/></g></svg>
<div class="t" style="top:174.7px;font-size:23.5px;line-height:23.5px;color:#cccccc;left:1540.0px;width:300px;text-align:center;letter-spacing:-0.7px">L-System</div>
<svg class="a" style="left:1870px;top:113px;" width="56" height="56" viewBox="0 0 56 56"><defs><radialGradient id="cmr" cx="0.4" cy="0.35" r="0.7"><stop offset="0" stop-color="#6a7074"/><stop offset="1" stop-color="#15181a"/></radialGradient></defs>
<ellipse cx="30" cy="50" rx="22" ry="3.5" fill="#1c1c1c" opacity=".7"/>
<circle cx="16" cy="22" r="13" fill="url(#cmr)" stroke="#0c0e10" stroke-width="1.2"/><circle cx="16" cy="22" r="4.500" fill="#b8bec2" stroke="#222" stroke-width="1"/><circle cx="16" cy="22" r="9" fill="none" stroke="#4a5054" stroke-width="1.500"/>
<circle cx="36" cy="14" r="11" fill="url(#cmr)" stroke="#0c0e10" stroke-width="1.2"/><circle cx="36" cy="14" r="3.500" fill="#b8bec2" stroke="#222" stroke-width="1"/><circle cx="36" cy="14" r="7.500" fill="none" stroke="#4a5054" stroke-width="1.300"/>
<rect x="25" y="23" width="16" height="11" fill="#8e989e" stroke="#15181a" stroke-width="1"/>
<path d="M40 27L54 23V40L40 37z" fill="#2a2e30" stroke="#0c0e10" stroke-width="1"/><path d="M46 25.500V38.500M50 24.500V39.500" stroke="#555c60" stroke-width="1.500"/>
<rect x="22" y="32" width="22" height="18" rx="1.500" fill="#4e565a" stroke="#0c0e10" stroke-width="1.200"/><rect x="22" y="32" width="22" height="4" fill="#7a8488"/><circle cx="33" cy="42" r="4.500" fill="#d0d4d8" stroke="#15181a" stroke-width="1.200"/><circle cx="33" cy="42" r="1.800" fill="#333"/>
<rect x="14" y="37" width="9" height="10" rx="1" fill="#2c3034" stroke="#0c0e10"/><circle cx="17" cy="46" r="3" fill="#c8ccd0" stroke="#222"/></svg>
<div class="t" style="top:174.7px;font-size:23.5px;line-height:23.5px;color:#cccccc;left:1748.0px;width:300px;text-align:center;letter-spacing:-0.7px">Camera</div>
<svg class="a" style="left:1988px;top:113px;" width="56" height="56" viewBox="0 0 56 56"><defs><radialGradient id="plb" cx="0.5" cy="0.4" r="0.65"><stop offset="0" stop-color="#fffef0"/><stop offset="0.5" stop-color="#f4ec90"/><stop offset="1" stop-color="#c8b830"/></radialGradient></defs>
<g transform="translate(27.500,27)"><g transform="rotate(0)"><path d="M0 -13V-22" stroke="#7a6a00" stroke-width="4"/><path d="M0 -13V-22" stroke="#f0dc28" stroke-width="2.200"/><path d="M-4.500 -21L0 -28L4.500 -21z" fill="#f0dc28" stroke="#7a6a00" stroke-width="0.900"/></g><g transform="rotate(-45)"><path d="M0 -13V-22" stroke="#7a6a00" stroke-width="4"/><path d="M0 -13V-22" stroke="#f0dc28" stroke-width="2.200"/><path d="M-4.500 -21L0 -28L4.500 -21z" fill="#f0dc28" stroke="#7a6a00" stroke-width="0.900"/></g><g transform="rotate(45)"><path d="M0 -13V-22" stroke="#7a6a00" stroke-width="4"/><path d="M0 -13V-22" stroke="#f0dc28" stroke-width="2.200"/><path d="M-4.500 -21L0 -28L4.500 -21z" fill="#f0dc28" stroke="#7a6a00" stroke-width="0.900"/></g><g transform="rotate(-90)"><path d="M0 -13V-22" stroke="#7a6a00" stroke-width="4"/><path d="M0 -13V-22" stroke="#f0dc28" stroke-width="2.200"/><path d="M-4.500 -21L0 -28L4.500 -21z" fill="#f0dc28" stroke="#7a6a00" stroke-width="0.900"/></g><g transform="rotate(90)"><path d="M0 -13V-22" stroke="#7a6a00" stroke-width="4"/><path d="M0 -13V-22" stroke="#f0dc28" stroke-width="2.200"/><path d="M-4.500 -21L0 -28L4.500 -21z" fill="#f0dc28" stroke="#7a6a00" stroke-width="0.900"/></g><g transform="rotate(-128)"><path d="M0 -13V-22" stroke="#7a6a00" stroke-width="4"/><path d="M0 -13V-22" stroke="#f0dc28" stroke-width="2.200"/><path d="M-4.500 -21L0 -28L4.500 -21z" fill="#f0dc28" stroke="#7a6a00" stroke-width="0.900"/></g><g transform="rotate(128)"><path d="M0 -13V-22" stroke="#7a6a00" stroke-width="4"/><path d="M0 -13V-22" stroke="#f0dc28" stroke-width="2.200"/><path d="M-4.500 -21L0 -28L4.500 -21z" fill="#f0dc28" stroke="#7a6a00" stroke-width="0.900"/></g></g>
<path d="M14.500 26A13 13 0 1 1 40.500 26C40.500 33 35 36 34 42H21C20 36 14.500 33 14.500 26z" fill="url(#plb)" stroke="#9a8c20" stroke-width="0.900"/>
<rect x="21.500" y="42" width="12" height="10" rx="2" fill="#b4b4b0" stroke="#555" stroke-width="0.800"/><path d="M21.500 45.500h12M21.500 48.500h12" stroke="#6a6a68" stroke-width="1.200"/><path d="M24 52h7l-1.500 3h-4z" fill="#555"/></svg>
<div class="t" style="top:174.7px;font-size:23.5px;line-height:23.5px;color:#cccccc;left:1866.0px;width:300px;text-align:center;letter-spacing:-0.7px">Point Light</div>
<svg class="a" style="left:2117px;top:113px;" width="56" height="56" viewBox="0 0 56 56"><defs><radialGradient id="slg" cx="0.5" cy="0.5" r="0.5"><stop offset="0" stop-color="#fffde8"/><stop offset="0.7" stop-color="#f0e4b0"/><stop offset="1" stop-color="#a8a498"/></radialGradient></defs>
<circle cx="13" cy="12" r="10.500" fill="#f08a10" stroke="#1c3c78" stroke-width="1.200"/><path d="M5 8A10 10 0 0 1 19 4" fill="none" stroke="#f8b860" stroke-width="2"/>
<path d="M17 10L36 5L42 18L30 20z" fill="#e8e8e6" stroke="#6a6a68" stroke-width="0.800"/><path d="M40 20L54 30L52 44L42 44z" fill="#c8c8c6" stroke="#6a6a68" stroke-width="0.800"/><path d="M8 22L14 42L4 36z" fill="#dcdcda" stroke="#6a6a68" stroke-width="0.800"/><path d="M14 44L32 50L30 56L10 48z" fill="#e4e4e2" stroke="#6a6a68" stroke-width="0.800"/>
<circle cx="24" cy="28" r="15" fill="#9a9a98" stroke="#4a4a48" stroke-width="1"/><circle cx="24" cy="27.500" r="11.500" fill="url(#slg)" stroke="#5a5a58" stroke-width="1.200"/>
<path d="M24 27.500L46 50" stroke="#8a7800" stroke-width="5"/><path d="M24 27.500L46 50" stroke="#f0dc28" stroke-width="3"/><path d="M50 45L51.500 55.500L41 54z" fill="#f0dc28" stroke="#8a7800" stroke-width="0.900"/></svg>
<div class="t" style="top:174.7px;font-size:23.5px;line-height:23.5px;color:#cccccc;left:1995.0px;width:300px;text-align:center;letter-spacing:-0.7px">Spot Light</div>
<svg class="a" style="left:2241px;top:113px;" width="56" height="56" viewBox="0 0 56 56"><defs><linearGradient id="alg" x1="0" y1="0" x2="1" y2="0"><stop offset="0" stop-color="#d8c020"/><stop offset="0.5" stop-color="#fffce0"/><stop offset="1" stop-color="#d8c020"/></linearGradient><linearGradient id="alb" x1="0" y1="0" x2="0" y2="1"><stop offset="0" stop-color="#f0e490" stop-opacity=".2"/><stop offset="1" stop-color="#e8d020"/></linearGradient></defs>
<path d="M3 4.500H54L44 16.500H13z" fill="url(#alg)" stroke="#9a8808" stroke-width="1.200"/><path d="M5 5.500H52" stroke="#fffbd0" stroke-width="1.200"/>
<path d="M15 17L9 40h4.500L19 17z M26 17V46h4.500V17z M37 17L43 40h4.500L41 17z" fill="url(#alb)"/>
<path d="M4.500 39L18 38L12 50z M21.500 44H35L28.300 55.500z M38.500 38L52 39L44.500 50z" fill="#e8d020" stroke="#8a7800" stroke-width="0.900"/></svg>
<div class="t" style="top:174.7px;font-size:23.5px;line-height:23.5px;color:#cccccc;left:2119.0px;width:300px;text-align:center;letter-spacing:-0.7px">Area Light</div>
<svg class="a" style="left:2387px;top:113px;" width="56" height="56" viewBox="0 0 56 56"><defs><radialGradient id="glg" cx="0.5" cy="0.5" r="0.5"><stop offset="0" stop-color="#f8e040" stop-opacity=".75"/><stop offset="0.6" stop-color="#d8a0c0" stop-opacity=".3"/><stop offset="1" stop-color="#d8a0c0" stop-opacity="0"/></radialGradient><linearGradient id="glm" x1="0" y1="0" x2="1" y2="0"><stop offset="0" stop-color="#4a4a4a"/><stop offset="0.5" stop-color="#e8e8e8"/><stop offset="1" stop-color="#3a3a3a"/></linearGradient></defs>
<circle cx="28" cy="24" r="24" fill="url(#glg)"/>
<path d="M24 2.500h8.500l3 9h-14.500z" fill="url(#glm)"/><path d="M21 11.500h14.500l5 26h-24.500z" fill="#b838b0" stroke="#6a1868" stroke-width="0.800"/><path d="M24 14l-4 22h4l3-22z" fill="#d870d0" opacity=".7"/>
<g fill="#f8c820"><ellipse cx="29" cy="18" rx="3.500" ry="4.500"/><ellipse cx="31" cy="26" rx="3" ry="3.500"/><path d="M20 36C22 30 27 27 30 29C34 27 38 31 39 36z"/></g>
<path d="M16 37.500h24.500l-5 7h-14.500z" fill="url(#glm)"/><path d="M21 44.500h14.500l4 6h-22.500z" fill="url(#glm)"/></svg>
<div class="t" style="top:159.7px;font-size:23.5px;line-height:23.5px;color:#cccccc;left:2265.0px;width:300px;text-align:center;letter-spacing:-0.7px">Geometry</div>
<div class="t" style="top:182.7px;font-size:23.5px;line-height:23.5px;color:#cccccc;left:2265.0px;width:300px;text-align:center;letter-spacing:-0.7px">Light</div>
<svg class="a" style="left:2546px;top:113px;" width="56" height="56" viewBox="0 0 56 56"><defs><radialGradient id="vlg" cx="0.5" cy="0.5" r="0.5"><stop offset="0" stop-color="#d8d8d8" stop-opacity=".6"/><stop offset="0.7" stop-color="#a0a0a0" stop-opacity=".4"/><stop offset="1" stop-color="#888" stop-opacity="0"/></radialGradient><radialGradient id="vly" cx="0.5" cy="0.5" r="0.5"><stop offset="0" stop-color="#fff060"/><stop offset="0.5" stop-color="#d8c020" stop-opacity=".7"/><stop offset="1" stop-color="#b0a020" stop-opacity="0"/></radialGradient><linearGradient id="vlf" x1="0" y1="0" x2="0" y2="1"><stop offset="0" stop-color="#e02810"/><stop offset="0.6" stop-color="#f07818"/><stop offset="1" stop-color="#f8d030"/></linearGradient></defs>
<circle cx="29" cy="23" r="24" fill="url(#vlg)"/><ellipse cx="29" cy="47" rx="26" ry="7" fill="url(#vly)"/>
<path d="M30 4C34 10 32 14 35 17C37 14 37 11 36 9C44 16 46 26 42 34C39 40 32 42 26 41C18 39 14 32 17 24C18 27 20 29 22 29C19 22 24 16 27 12C29 9 30 7 30 4z" fill="url(#vlf)" stroke="#a01808" stroke-width="0.800"/>
<path d="M30 20C33 26 37 28 35 34C34 38 30 40 27 39C22 38 21 33 23 29C24 31 26 32 27 31C26 27 29 24 30 20z" fill="#f8e060"/><path d="M29 30c2 3 3 5 1 8c-3 0-5-3-4-5c1 1 2 0 3-3z" fill="#fffbe0"/></svg>
<div class="t" style="top:174.7px;font-size:23.5px;line-height:23.5px;color:#cccccc;left:2424.0px;width:300px;text-align:center;letter-spacing:-0.7px">Volume Light</div>
<svg class="a" style="left:2700px;top:113px;" width="56" height="56" viewBox="0 0 56 56"><defs><radialGradient id="dlg" cx="0.45" cy="0.4" r="0.6"><stop offset="0" stop-color="#fff8c0"/><stop offset="0.6" stop-color="#f8c020"/><stop offset="1" stop-color="#e89010"/></radialGradient></defs>
<g transform="translate(22.700,22.500)"><path d="M0 -21L5 -14L13 -17L13 -9L21 -5L16 2L20 10L12 11L10 19L2 15L-5 20L-8 13L-16 13L-14 5L-21 0L-15 -6L-17 -14L-9 -14L-6 -20z" fill="#f0d428" stroke="#8a7800" stroke-width="0.900"/><circle r="13" fill="url(#dlg)" stroke="#d08010" stroke-width="1"/></g>
<g stroke-linecap="butt"><path d="M31 34L45 50M38 27L52 43M24 37L36 51" stroke="#8a7800" stroke-width="5"/><path d="M31 34L45 50M38 27L52 43M24 37L36 51" stroke="#f8e440" stroke-width="3"/></g>
<path d="M49.500 45.500L50 54.500L41 52.500z M56 38.500L56.500 47.500L47.500 45.500z M40 47.500L40.500 55.500L32 53.500z" fill="#f8e440" stroke="#8a7800" stroke-width="0.900"/></svg>
<div class="t" style="top:174.7px;font-size:23.5px;line-height:23.5px;color:#cccccc;left:2578.0px;width:300px;text-align:center;letter-spacing:-0.7px">Distant Light</div>
<svg class="a" style="left:2859px;top:113px;" width="56" height="56" viewBox="0 0 56 56"><defs><radialGradient id="evs" cx="0.4" cy="0.35" r="0.7"><stop offset="0" stop-color="#f0f0f0"/><stop offset="0.6" stop-color="#8c8c8c"/><stop offset="1" stop-color="#3c3c3c"/></radialGradient><clipPath id="evc"><rect x="0" y="0" width="56" height="47"/></clipPath></defs>
<g clip-path="url(#evc)"><circle cx="27.500" cy="28.700" r="25.500" fill="#e8d030" stroke="#8a7a08" stroke-width="1.200"/><circle cx="27.500" cy="28.700" r="22.500" fill="none" stroke="#fff8a0" stroke-width="1.500"/>
<path d="M5 31C14 20 41 20 50 31C41 43 14 43 5 31z" fill="#8e9aa6" stroke="#5a6670" stroke-width="1"/><path d="M6 31C16 24 39 24 49 31C39 36 16 36 6 31z" fill="#c4ccd4"/><circle cx="27.500" cy="28" r="9" fill="url(#evs)" stroke="#333" stroke-width="0.800"/>
<rect x="0" y="44" width="56" height="4" fill="#4a4a30" opacity=".5"/></g></svg>
<div class="t" style="top:159.7px;font-size:23.5px;line-height:23.5px;color:#cccccc;left:2737.0px;width:300px;text-align:center;letter-spacing:-0.7px">Environment</div>
<div class="t" style="top:182.7px;font-size:23.5px;line-height:23.5px;color:#cccccc;left:2737.0px;width:300px;text-align:center;letter-spacing:-0.7px">Light</div>
<svg class="a" style="left:2999px;top:113px;" width="56" height="56" viewBox="0 0 56 56"><path d="M5 41V48A23 10 0 0 0 51 48V41z" fill="#d8c070" stroke="#8a7430" stroke-width="0.900"/><ellipse cx="28" cy="41" rx="23" ry="10" fill="#f0ead0" stroke="#a89850" stroke-width="0.900"/>
<path d="M14 42C8 22 18 4 32 3C40 5 44 14 44 24L30 34z" fill="#7ab0d0" fill-opacity=".35" stroke="#4a88b8" stroke-width="1.200"/><path d="M14 42L13 26L30 34" fill="none" stroke="#4a88b8" stroke-width="1"/>
<path d="M44 22L28 32L42 46L40 34z" fill="#7a48a0" stroke="#4a2070" stroke-width="0.800"/><path d="M44 22L28 32L36 33z" fill="#e8e0f0"/><path d="M42 42l8-3-6 7z" fill="#8a6a30"/>
<circle cx="15.500" cy="13.700" r="4.200" fill="#f8a820" stroke="#c86808" stroke-width="1"/><g stroke="#f08a10" stroke-width="1.200"><path d="M15.500 7v-2M15.500 20v2M9 13.700h-2M22 13.700h2M10.500 8.700l-1.500-1.500M20.500 8.700l1.500-1.500M10.500 18.700l-1.500 1.500M20.500 18.700l1.500 1.500"/></g></svg>
<div class="t" style="top:174.7px;font-size:23.5px;line-height:23.5px;color:#cccccc;left:2877.0px;width:300px;text-align:center;letter-spacing:-0.7px">Sky Light</div>
<svg class="a" style="left:3107px;top:113px;" width="56" height="56" viewBox="0 0 56 56"><defs><radialGradient id="gig" cx="0.45" cy="0.35" r="0.7"><stop offset="0" stop-color="#ffffff"/><stop offset="0.6" stop-color="#d8d8d4"/><stop offset="1" stop-color="#8c8c88"/></radialGradient><linearGradient id="gic" x1="0" y1="0" x2="1" y2="0"><stop offset="0" stop-color="#70e070" stop-opacity=".45"/><stop offset="0.4" stop-color="#fff" stop-opacity="0"/><stop offset="0.6" stop-color="#fff" stop-opacity="0"/><stop offset="1" stop-color="#e07080" stop-opacity=".45"/></linearGradient></defs>
<ellipse cx="30" cy="50" rx="20" ry="3.500" fill="#1c1c1c" opacity=".6"/><circle cx="29" cy="26" r="24" fill="url(#gig)"/><circle cx="29" cy="26" r="24" fill="url(#gic)"/></svg>
<div class="t" style="top:174.7px;font-size:23.5px;line-height:23.5px;color:#cccccc;left:2985.0px;width:300px;text-align:center;letter-spacing:-0.7px">GI Light</div>
<svg class="a" style="left:3235px;top:113px;" width="56" height="56" viewBox="0 0 56 56"><defs><linearGradient id="cag" x1="0" y1="0" x2="1" y2="1"><stop offset="0" stop-color="#a8c8f0" stop-opacity=".9"/><stop offset="1" stop-color="#5880c0" stop-opacity=".5"/></linearGradient></defs>
<path d="M12 28L24 22L50 36C54 44 48 52 40 52z" fill="url(#cag)"/><ellipse cx="44" cy="44" rx="8" ry="10" transform="rotate(-30 44 44)" fill="#6890d0" fill-opacity=".55"/><ellipse cx="36" cy="38" rx="4" ry="6" transform="rotate(-30 36 38)" fill="#d8e8f8" fill-opacity=".6"/>
<path d="M7 5L10 27A7 3 0 0 0 23 26L25 4z" fill="#c8dcf4" fill-opacity=".75" stroke="#6a98d0" stroke-width="1"/><ellipse cx="16" cy="4.500" rx="9" ry="3" fill="#e8f0fc" stroke="#6a98d0" stroke-width="1"/><path d="M10 8L12 26" stroke="#fff" stroke-width="1.500" opacity=".8"/></svg>
<div class="t" style="top:174.7px;font-size:23.5px;line-height:23.5px;color:#cccccc;left:3113.0px;width:300px;text-align:center;letter-spacing:-0.7px">Caustic Light</div>
<svg class="a" style="left:3381px;top:113px;" width="56" height="56" viewBox="0 0 56 56"><path d="M3 3.500L19 5.500V32.500L3 32z" fill="#7a98a0" fill-opacity=".5" stroke="#9a6a48" stroke-width="1.800"/><path d="M11 4.500V32M3 16L19 17.500" stroke="#9a6a48" stroke-width="1.200"/><path d="M5 6v8M7.500 6v8M13 7v8M15.500 7v8" stroke="#b8d0d8" stroke-width="0.800"/>
<path d="M4 10L19 8L55 46L54 54L34 47L10 40z" fill="#d8c810" fill-opacity=".55"/><path d="M8 20L19 17L55 50L40 50L14 40z" fill="#e8d820" fill-opacity=".45"/><path d="M4 10L34 47M11 9L44 50M19 8L55 46" stroke="#b8a808" stroke-width="0.800" opacity=".7"/><path d="M30 40L55 46L54 54L34 47z" fill="#5a9088" fill-opacity=".5"/></svg>
<div class="t" style="top:174.7px;font-size:23.5px;line-height:23.5px;color:#cccccc;left:3259.0px;width:300px;text-align:center;letter-spacing:-0.7px">Portal Light</div>
<svg class="a" style="left:3532px;top:113px;" width="56" height="56" viewBox="0 0 56 56"><defs><radialGradient id="abg" cx="0.45" cy="0.35" r="0.7"><stop offset="0" stop-color="#f4ffff"/><stop offset="0.6" stop-color="#b8e0e4"/><stop offset="1" stop-color="#78a8b0"/></radialGradient></defs>
<path d="M11.500 22A16 16 0 1 1 43.500 22C43.500 31 36 34 35 41H20C19 34 11.500 31 11.500 22z" fill="url(#abg)" stroke="#e8f4f4" stroke-width="1.500"/><path d="M23 33c1 4 8 4 9 0" fill="none" stroke="#6a8a90" stroke-width="1.500"/>
<rect x="20.500" y="41" width="14" height="10" rx="2" fill="#b8b8b4" stroke="#555" stroke-width="0.800"/><path d="M20.500 44.500h14M20.500 47.500h14" stroke="#6a6a68" stroke-width="1.300"/><path d="M23 51h9l-2 3.500h-5z" fill="#555"/></svg>
<div class="t" style="top:174.7px;font-size:23.5px;line-height:23.5px;color:#cccccc;left:3410.0px;width:300px;text-align:center;letter-spacing:-0.7px">Ambient Light</div>
<svg class="a" style="left:3697px;top:113px;" width="56" height="56" viewBox="0 0 56 56"><path d="M4 18L10 14H46L52 18V42L48 45H8L4 42z" fill="#2c3034" stroke="#0c0e10" stroke-width="1.200"/><path d="M4 18L10 14H46L52 18z" fill="#c8ccd0"/><rect x="12" y="11" width="10" height="4" rx="1" fill="#d8d8d8"/><rect x="34" y="11" width="10" height="4" rx="1" fill="#d8d8d8"/>
<path d="M4 19H9V42H8L4 41z M52 19H47V42H48L52 41z" fill="#2c5cb0"/>
<circle cx="16" cy="31" r="9" fill="#d0d4d8" stroke="#0c0e10" stroke-width="1"/><circle cx="16" cy="31" r="6" fill="#15181a"/><circle cx="14" cy="29" r="2" fill="#6a7074"/>
<circle cx="40" cy="31" r="9" fill="#d0d4d8" stroke="#0c0e10" stroke-width="1"/><circle cx="40" cy="31" r="6" fill="#15181a"/><circle cx="38" cy="29" r="2" fill="#6a7074"/>
<rect x="24" y="25" width="8" height="10" fill="#e8e8e8" stroke="#111"/><rect x="25.500" y="29" width="5" height="4" fill="#30a030"/></svg>
<div class="t" style="top:159.7px;font-size:23.5px;line-height:23.5px;color:#cccccc;left:3575.0px;width:300px;text-align:center;letter-spacing:-0.7px">Stereo</div>
<div class="t" style="top:182.7px;font-size:23.5px;line-height:23.5px;color:#cccccc;left:3575.0px;width:300px;text-align:center;letter-spacing:-0.7px">Camera</div>
<svg class="a" style="left:1753px;top:152px;" width="10" height="12" viewBox="0 0 10 12"><path d="M1 1L9 6L1 11z" fill="#666"/></svg>
<svg class="a" style="left:3813px;top:152px;" width="10" height="12" viewBox="0 0 10 12"><path d="M1 1L9 6L1 11z" fill="#666"/></svg>
<div class="a" style="left:0px;top:208px;width:17px;height:1587px;background:#3a3a3a;border-left:2px solid #222;border-right:1px solid #2a2a2a"></div>
<div class="a" style="left:17px;top:208px;width:1293px;height:47px;background:#2e2e2e;"></div>
<div class="a" style="left:17px;top:255px;width:1293px;height:86px;background:linear-gradient(#4b4b4b,#3e3e3e);"></div>
<div class="a" style="left:17px;top:208px;width:188px;height:48px;background:linear-gradient(#505050,#4b4b4b);border-left:1px solid #5a5a5a;border-top:1px solid #5a5a5a"></div>
<div class="t" style="top:220.0px;font-size:25.5px;line-height:25.5px;color:#cccccc;left:34px;letter-spacing:-1.06px;">Scene View</div>
<svg class="a" style="left:176px;top:223px;" width="18" height="18" viewBox="0 0 18 18"><path d="M3.500 3.500L14.500 14.500M14.500 3.500L3.500 14.500" stroke="#dededa" stroke-width="4.2" stroke-linecap="round"/></svg>
<div class="a" style="left:205px;top:208px;width:191px;height:46px;background:#303030;border-left:2px solid #242424;border-right:1px solid #1c1c1c;border-bottom:2px solid #242424"></div>
<div class="t" style="top:220.0px;font-size:25.5px;line-height:25.5px;color:#cccccc;left:221px;letter-spacing:0.21px;">Animatio…</div>
<svg class="a" style="left:367px;top:223px;" width="18" height="18" viewBox="0 0 18 18"><path d="M3.500 3.500L14.500 14.500M14.500 3.500L3.500 14.500" stroke="#dededa" stroke-width="4.2" stroke-linecap="round"/></svg>
<div class="a" style="left:396px;top:208px;width:191px;height:46px;background:#303030;border-left:2px solid #242424;border-right:1px solid #1c1c1c;border-bottom:2px solid #242424"></div>
<div class="t" style="top:220.0px;font-size:25.5px;line-height:25.5px;color:#cccccc;left:413px;letter-spacing:-0.87px;">Render Vi…</div>
<svg class="a" style="left:558px;top:223px;" width="18" height="18" viewBox="0 0 18 18"><path d="M3.500 3.500L14.500 14.500M14.500 3.500L3.500 14.500" stroke="#dededa" stroke-width="4.2" stroke-linecap="round"/></svg>
<div class="a" style="left:587px;top:208px;width:199px;height:46px;background:#303030;border-left:2px solid #242424;border-right:1px solid #1c1c1c;border-bottom:2px solid #242424"></div>
<div class="t" style="top:220.0px;font-size:25.5px;line-height:25.5px;color:#cccccc;left:604px;letter-spacing:-0.16px;">Composit…</div>
<svg class="a" style="left:757px;top:223px;" width="18" height="18" viewBox="0 0 18 18"><path d="M3.500 3.500L14.500 14.500M14.500 3.500L3.500 14.500" stroke="#dededa" stroke-width="4.2" stroke-linecap="round"/></svg>
<div class="a" style="left:786px;top:208px;width:183px;height:46px;background:#303030;border-left:2px solid #242424;border-right:1px solid #1c1c1c;border-bottom:2px solid #242424"></div>
<div class="t" style="top:220.0px;font-size:25.5px;line-height:25.5px;color:#cccccc;left:803px;letter-spacing:-0.52px;">Motion F…</div>
<svg class="a" style="left:940px;top:223px;" width="18" height="18" viewBox="0 0 18 18"><path d="M3.500 3.500L14.500 14.500M14.500 3.500L3.500 14.500" stroke="#dededa" stroke-width="4.2" stroke-linecap="round"/></svg>
<div class="a" style="left:969px;top:208px;width:200px;height:46px;background:#303030;border-left:2px solid #242424;border-right:1px solid #1c1c1c;border-bottom:2px solid #242424"></div>
<div class="t" style="top:220.0px;font-size:25.5px;line-height:25.5px;color:#cccccc;left:987px;letter-spacing:-0.41px;">Geometry…</div>
<svg class="a" style="left:1140px;top:223px;" width="18" height="18" viewBox="0 0 18 18"><path d="M3.500 3.500L14.500 14.500M14.500 3.500L3.500 14.500" stroke="#dededa" stroke-width="4.2" stroke-linecap="round"/></svg>
<svg class="a" style="left:1183px;top:218px;" width="26" height="26" viewBox="0 0 26 26"><path d="M13 3v20M3 13h20" stroke="#dededa" stroke-width="5" stroke-linecap="round"/></svg>
<div class="a" style="left:1227px;top:221px;width:28px;height:22px;background:linear-gradient(135deg,#e4e4e0,#cfcfcb);"></div>
<svg class="a" style="left:1275px;top:223px;" width="22" height="16" viewBox="0 0 22 16"><path d="M1 1H21L11 15z" fill="#e0e0e0"/></svg>
<svg class="a" style="left:24px;top:270px;" width="54" height="60" viewBox="0 0 54 60"><defs><linearGradient id="gbk" x1="0" y1="0" x2="0" y2="1"><stop offset="0" stop-color="#f2f2ee"/><stop offset="1" stop-color="#a9aaa6"/></linearGradient></defs><path d="M3 27L27 4V17H47V38H27V51z" fill="url(#gbk)" stroke="#2e3436" stroke-width="2" stroke-linejoin="round"/><path d="M44 46L54 52L44 59z" fill="#9a9a9a"/></svg>
<svg class="a" style="left:86px;top:270px;" width="54" height="60" viewBox="0 0 54 60"><path d="M51 27L27 4V17H7V38H27V51z" fill="#5a5a58" stroke="#444" stroke-width="2" stroke-linejoin="round"/><path d="M46 48L52 52L46 57z" fill="#4a4a4a"/></svg>
<div class="a" style="left:153px;top:268px;width:815px;height:60px;background:#3d3d3d;border:1px solid #111;border-top:2px solid #111"></div>
<div class="a" style="left:949px;top:270px;width:18px;height:57px;background:#2c2c2c;"></div>
<svg class="a" style="left:950px;top:290px;" width="16" height="14" viewBox="0 0 16 14"><path d="M1 1H15L8 13z" fill="#6e6e6e"/></svg>
<svg class="a" style="left:160px;top:270px;" width="52" height="58" viewBox="0 0 52 58"><rect x="3" y="22" width="46" height="34" rx="2" fill="#3d4a4e" stroke="#1a1e20" stroke-width="1.5"/><path d="M2 14L47 3L49 11L5 23z" fill="#2a2e30" stroke="#111" stroke-width="1"/><path d="M9 13.5l7-1.7 3 6-7 1.7zM23 10l7-1.7 3 6-7 1.7zM37 6.6l7-1.7 2.5 6-7 1.7z" fill="#d8dcdc"/><rect x="3" y="22" width="46" height="6" fill="#555e60"/><path d="M9 38H44M9 43H44M9 50H23" stroke="#dfe3e3" stroke-width="1.5"/><path d="M14 34v8M19 35v6M28 36v8M34 37v7M39 36v8" stroke="#dfe3e3" stroke-width="1.2"/></svg>
<div class="t" style="top:282.2px;font-size:30px;line-height:30px;color:#cccccc;left:217px;letter-spacing:-0.88px;">obj</div>
<svg class="a" style="left:259px;top:269px;" width="18" height="59" viewBox="0 0 18 59"><path d="M2 1L16 29L2 58" fill="none" stroke="#1c1c1c" stroke-width="1.6"/></svg>
<svg class="a" style="left:283px;top:272px;" width="56" height="56" viewBox="0 0 56 56"><defs><linearGradient id="gcy" x1="0" y1="0" x2="1" y2="0"><stop offset="0" stop-color="#8fb0d8"/><stop offset="0.5" stop-color="#3d6aa8"/><stop offset="1" stop-color="#24467a"/></linearGradient><radialGradient id="grd" cx="0.4" cy="0.35" r="0.7"><stop offset="0" stop-color="#f07a60"/><stop offset="1" stop-color="#a81810"/></radialGradient><linearGradient id="gco" x1="0" y1="0" x2="1" y2="0"><stop offset="0" stop-color="#fff59a"/><stop offset="0.6" stop-color="#f0d020"/><stop offset="1" stop-color="#b89400"/></linearGradient></defs><path d="M2 8V38A11 5 0 0 0 24 38V8z" fill="url(#gcy)"/><ellipse cx="13" cy="8" rx="11" ry="5" fill="#a8c4e4" stroke="#5a80b4" stroke-width="1"/><circle cx="41" cy="30" r="13" fill="url(#grd)"/><path d="M27 18L13 48A14 6 0 0 0 41 48z" fill="url(#gco)" stroke="#8a7000" stroke-width="0.8"/></svg>
<div class="t" style="top:282.2px;font-size:30px;line-height:30px;color:#cccccc;left:343px;letter-spacing:-2.18px;">geo1</div>
<svg class="a" style="left:988px;top:272px;" width="50" height="52" viewBox="0 0 50 52"><ellipse cx="26" cy="46" rx="24" ry="4" fill="#2c2c2c"/><path d="M1 26L22 22V30z" fill="#f4f4f4"/><path d="M21 20h6v12h-6z" fill="#c8c8c8"/><path d="M27 12C31 18 31 34 27 40L36 36V16z" fill="#dcdcdc"/><rect x="34" y="18" width="9" height="16" fill="#b4b4b4"/><rect x="43" y="8" width="6" height="36" rx="1" fill="#e8e8e8" stroke="#777" stroke-width="1"/></svg>
<svg class="a" style="left:1044px;top:271px;" width="54" height="54" viewBox="0 0 54 54"><circle cx="27" cy="27" r="24" fill="none" stroke="#6f93c8" stroke-width="5"/><circle cx="27" cy="27" r="15" fill="none" stroke="#4a6a9c" stroke-width="2.5"/><circle cx="27" cy="28" r="6.5" fill="#3a6cc0"/><circle cx="26" cy="26" r="3" fill="#6a98e0"/></svg>
<svg class="a" style="left:1131px;top:270px;" width="56" height="60" viewBox="0 0 56 60"><path d="M3 12L26 4L50 14V44L27 56L4 46z" fill="#8fa6b4" stroke="#26343c" stroke-width="2" stroke-linejoin="round"/><path d="M3 12L27 22L50 14L26 4z" fill="#c4d2da"/><path d="M27 22V56L50 44V14z" fill="#5a7282"/><path d="M3 12L27 22L50 14M27 22V56" fill="none" stroke="#26343c" stroke-width="1.5"/><path d="M40 54H56L48 63z" fill="#8a8a8a" transform="translate(0,-4)"/></svg>
<svg class="a" style="left:1188px;top:270px;" width="58" height="60" viewBox="0 0 58 60"><rect x="2" y="2" width="24" height="36" rx="11" fill="#555" stroke="#d8d8d8" stroke-width="1.5"/><circle cx="40" cy="30" r="17" fill="#2a56a8"/><circle cx="35" cy="24" r="7" fill="#7aa0e0" opacity=".8"/><path d="M18 20L4 52A14 5 0 0 0 32 52z" fill="#777" fill-opacity=".7" stroke="#e8e8e8" stroke-width="1.5"/><path d="M42 52H58L50 60z" fill="#8a8a8a"/></svg>
<div class="a" style="left:1251px;top:274px;width:48px;height:48px;background:linear-gradient(135deg,#e6e6e2,#d0d0cc);border:2px solid #2c2c2c"></div>
<svg class="a" style="left:1286px;top:318px;" width="16" height="10" viewBox="0 0 16 10"><path d="M0 0H16L8 10z" fill="#8a8a8a"/></svg>
<div class="a" style="left:17px;top:341px;width:1293px;height:2px;background:#1c1c1c;"></div>
<div class="a" style="left:18px;top:343px;width:25px;height:79px;background:#444;border:1px solid #222;border-top:1px solid #555"></div>
<svg class="a" style="left:22px;top:350px;" width="16" height="14" viewBox="0 0 16 14"><path d="M8 0L15 13H1z" fill="#000"/></svg>
<div class="a" style="left:43px;top:343px;width:1266px;height:79px;background:#2e2e2e;border-left:1px solid #1c1c1c;border-top:1px solid #1c1c1c"></div>
<div class="a" style="left:17px;top:421px;width:1293px;height:2px;background:#101010;"></div>
<svg class="a" style="left:49px;top:350px;" width="56" height="56" viewBox="0 0 56 56"><defs><radialGradient id="cmr" cx="0.4" cy="0.35" r="0.7"><stop offset="0" stop-color="#6a7074"/><stop offset="1" stop-color="#15181a"/></radialGradient></defs>
<ellipse cx="30" cy="50" rx="22" ry="3.5" fill="#1c1c1c" opacity=".7"/>
<circle cx="16" cy="22" r="13" fill="url(#cmr)" stroke="#0c0e10" stroke-width="1.2"/><circle cx="16" cy="22" r="4.500" fill="#b8bec2" stroke="#222" stroke-width="1"/><circle cx="16" cy="22" r="9" fill="none" stroke="#4a5054" stroke-width="1.500"/>
<circle cx="36" cy="14" r="11" fill="url(#cmr)" stroke="#0c0e10" stroke-width="1.2"/><circle cx="36" cy="14" r="3.500" fill="#b8bec2" stroke="#222" stroke-width="1"/><circle cx="36" cy="14" r="7.500" fill="none" stroke="#4a5054" stroke-width="1.300"/>
<rect x="25" y="23" width="16" height="11" fill="#8e989e" stroke="#15181a" stroke-width="1"/>
<path d="M40 27L54 23V40L40 37z" fill="#2a2e30" stroke="#0c0e10" stroke-width="1"/><path d="M46 25.500V38.500M50 24.500V39.500" stroke="#555c60" stroke-width="1.500"/>
<rect x="22" y="32" width="22" height="18" rx="1.500" fill="#4e565a" stroke="#0c0e10" stroke-width="1.200"/><rect x="22" y="32" width="22" height="4" fill="#7a8488"/><circle cx="33" cy="42" r="4.500" fill="#d0d4d8" stroke="#15181a" stroke-width="1.200"/><circle cx="33" cy="42" r="1.800" fill="#333"/>
<rect x="14" y="37" width="9" height="10" rx="1" fill="#2c3034" stroke="#0c0e10"/><circle cx="17" cy="46" r="3" fill="#c8ccd0" stroke="#222"/></svg>
<svg class="a" style="left:86px;top:398px;" width="18" height="10" viewBox="0 0 18 10"><path d="M0 0H18L9 10z" fill="#8a8a8a"/></svg>
<div class="t" style="top:367.5px;font-size:28.5px;line-height:28.5px;color:#d4d4d4;left:107px;letter-spacing:-0.61px;font-weight:bold;">View</div>
<svg class="a" style="left:458px;top:358px;" width="60" height="58" viewBox="0 0 60 58"><ellipse cx="28" cy="36" rx="24" ry="11" fill="none" stroke="#3a62a8" stroke-width="4"/><path d="M14 45L5 40" stroke="#e8e8e8" stroke-width="4"/><path d="M22 49L34 43V55z" fill="#24468c"/><path d="M19 2V40L27 33L33 46L38 43L32 31L42 30z" fill="#e4e4e4" stroke="#000" stroke-width="2" stroke-linejoin="round"/><path d="M42 44H58L50 53z" fill="#8a8a8a"/></svg>
<svg class="a" style="left:540px;top:358px;" width="60" height="58" viewBox="0 0 60 58"><path d="M3 6L14 4L12 9L28 22L26 26L9 13L5 17z" fill="#3a62a8"/><path d="M58 44L46 47L48 42L30 28L33 24L51 38L55 34z" fill="#3a62a8"/><path d="M19 2V40L27 33L33 46L38 43L32 31L42 30z" fill="#e4e4e4" stroke="#000" stroke-width="2" stroke-linejoin="round"/><path d="M42 44H58L50 53z" fill="#8a8a8a"/></svg>
<svg class="a" style="left:618px;top:356px;" width="66" height="60" viewBox="0 0 66 60"><path d="M2 22L34 14L38 30L6 40z" fill="#2c3032" stroke="#111" stroke-width="1.5"/><path d="M6 24v12M10 23v12M14 22v12" stroke="#999" stroke-width="1.5"/><path d="M30 15l3 15" stroke="#d02010" stroke-width="3"/><path d="M38 2V36L45 30L50 41L55 38L50 28L58 27z" fill="#e4e4e4" stroke="#000" stroke-width="2" stroke-linejoin="round"/><path d="M4 52L20 42V47L44 40V36L58 40L46 50V46L22 54V58z" fill="#3a6ac0"/><path d="M50 46H66L58 55z" fill="#8a8a8a"/></svg>
<div class="a" style="left:691px;top:353px;width:1px;height:60px;background:#1a1a1a;"></div>
<div class="a" style="left:704px;top:354px;width:58px;height:59px;background:linear-gradient(#5f6e76,#9aa7ad);border:1px solid #222"></div>
<svg class="a" style="left:711px;top:361px;" width="45" height="45" viewBox="0 0 56 56"><defs><radialGradient id="cmr2" cx="0.4" cy="0.35" r="0.7"><stop offset="0" stop-color="#6a7074"/><stop offset="1" stop-color="#15181a"/></radialGradient></defs>
<ellipse cx="30" cy="50" rx="22" ry="3.5" fill="#1c1c1c" opacity=".7"/>
<circle cx="16" cy="22" r="13" fill="url(#cmr2)" stroke="#0c0e10" stroke-width="1.2"/><circle cx="16" cy="22" r="4.500" fill="#b8bec2" stroke="#222" stroke-width="1"/><circle cx="16" cy="22" r="9" fill="none" stroke="#4a5054" stroke-width="1.500"/>
<circle cx="36" cy="14" r="11" fill="url(#cmr2)" stroke="#0c0e10" stroke-width="1.2"/><circle cx="36" cy="14" r="3.500" fill="#b8bec2" stroke="#222" stroke-width="1"/><circle cx="36" cy="14" r="7.500" fill="none" stroke="#4a5054" stroke-width="1.300"/>
<rect x="25" y="23" width="16" height="11" fill="#8e989e" stroke="#15181a" stroke-width="1"/>
<path d="M40 27L54 23V40L40 37z" fill="#2a2e30" stroke="#0c0e10" stroke-width="1"/><path d="M46 25.500V38.500M50 24.500V39.500" stroke="#555c60" stroke-width="1.500"/>
<rect x="22" y="32" width="22" height="18" rx="1.500" fill="#4e565a" stroke="#0c0e10" stroke-width="1.200"/><rect x="22" y="32" width="22" height="4" fill="#7a8488"/><circle cx="33" cy="42" r="4.500" fill="#d0d4d8" stroke="#15181a" stroke-width="1.200"/><circle cx="33" cy="42" r="1.800" fill="#333"/>
<rect x="14" y="37" width="9" height="10" rx="1" fill="#2c3034" stroke="#0c0e10"/><circle cx="17" cy="46" r="3" fill="#c8ccd0" stroke="#222"/></svg>
<svg class="a" style="left:770px;top:362px;" width="50" height="44" viewBox="0 0 50 44"><rect x="2" y="2" width="36" height="30" rx="4" fill="#c8dcf0" stroke="#dcdcdc" stroke-width="4"/><rect x="5" y="5" width="30" height="24" rx="2" fill="none" stroke="#222" stroke-width="1.5"/><path d="M20 8V26M11 17H29" stroke="#2c5cb0" stroke-width="4"/><path d="M20 6l-4 5h8zM20 28l-4-5h8zM9 17l5-4v8zM31 17l-5-4v8z" fill="#2c5cb0"/><path d="M36 30L47 41" stroke="#bbb" stroke-width="5" stroke-linecap="round"/></svg>
<div class="a" style="left:834px;top:353px;width:1px;height:60px;background:#1a1a1a;"></div>
<svg class="a" style="left:850px;top:355px;" width="52" height="52" viewBox="0 0 52 52"><circle cx="26" cy="26" r="22" fill="none" stroke="#603a3a" stroke-width="5"/><rect x="11" y="17" width="30" height="18" rx="2" fill="#4a4a4a" stroke="#3c3c3c" stroke-width="2"/><rect x="16" y="22" width="20" height="8" fill="#2c2c2c"/></svg>
<svg class="a" style="left:1192px;top:354px;" width="52" height="58" viewBox="0 0 52 58"><g><path d="M4 28L7 19H19L22 28z" fill="#e8e8e8"/><circle cx="13" cy="11" r="9" fill="#2c4e8c" stroke="#102450" stroke-width="1.5"/><circle cx="11" cy="9" r="4" fill="#7a9cd0"/></g><g transform="translate(24,10)"><path d="M4 28L7 19H19L22 28z" fill="#e8e8e8"/><circle cx="13" cy="11" r="9" fill="#2c4e8c" stroke="#102450" stroke-width="1.5"/><circle cx="11" cy="9" r="4" fill="#7a9cd0"/></g><g transform="translate(2,26)"><path d="M4 28L7 19H19L22 28z" fill="#e8e8e8"/><circle cx="13" cy="11" r="9" fill="#2c4e8c" stroke="#102450" stroke-width="1.5"/><circle cx="11" cy="9" r="4" fill="#7a9cd0"/></g><path d="M36 48H52L44 57z" fill="#8a8a8a"/></svg>
<svg class="a" style="left:1252px;top:357px;" width="48" height="48" viewBox="0 0 48 48"><circle cx="24" cy="24" r="21" fill="#2a3236" stroke="#deded8" stroke-width="4"/><text x="24" y="36" font-family="Liberation Sans, sans-serif" font-weight="bold" font-size="34" fill="#e4e4e0" text-anchor="middle">?</text></svg>
<div class="a" style="left:17px;top:423px;width:85px;height:1371px;background:#3a3a3a;"></div>
<div class="a" style="left:17px;top:423px;width:85px;height:26px;background:linear-gradient(#4a4a4a,#3c3c3c);border:1px solid #222;border-top:1px solid #5a5a5a"></div>
<svg class="a" style="left:24px;top:428px;" width="14" height="16" viewBox="0 0 14 16"><path d="M13 1V15L1 8z" fill="#000"/></svg>
<div class="a" style="left:1243px;top:423px;width:66px;height:1371px;background:#3a3a3a;"></div>
<div class="a" style="left:1243px;top:423px;width:66px;height:26px;background:linear-gradient(#4a4a4a,#3c3c3c);border:1px solid #222;border-top:1px solid #5a5a5a"></div>
<svg class="a" style="left:1285px;top:428px;" width="14" height="16" viewBox="0 0 14 16"><path d="M1 1V15L13 8z" fill="#000"/></svg>
<svg class="a" style="left:102px;top:423px;" width="1141" height="1369" viewBox="0 0 1141 1369"><defs><linearGradient id="vbg" x1="0" y1="0" x2="0" y2="1"><stop offset="0" stop-color="#6a8391"/><stop offset="1" stop-color="#c5cccb"/></linearGradient>
<linearGradient id="vfade" gradientUnits="userSpaceOnUse" x1="0" y1="368" x2="0" y2="566"><stop offset="0" stop-color="#000"/><stop offset="0.19" stop-color="#8a8a8a"/><stop offset="0.45" stop-color="#d8d8d8"/><stop offset="1" stop-color="#fff"/></linearGradient>
<mask id="vm"><rect x="0" y="0" width="1141" height="1369" fill="url(#vfade)"/></mask>
<radialGradient id="sph" cx="0.55" cy="0.4" r="0.65"><stop offset="0" stop-color="#c4c4c4"/><stop offset="0.7" stop-color="#9c9c9c"/><stop offset="1" stop-color="#5a5a5a"/></radialGradient></defs>
<rect width="1141" height="1369" fill="url(#vbg)"/>
<g mask="url(#vm)" fill="none" stroke="#788f9c"><path d="M-1.3 337.1L-5.0 337.4M5.6 337.1L-5.0 337.9M12.5 337.0L-5.0 338.5M19.4 337.0L-5.0 339.1M33.2 337.0L-5.0 340.4M40.1 337.0L-5.0 341.1M46.9 336.9L-5.0 341.8M53.8 336.9L-5.0 342.5M67.5 336.9L-5.0 344.1M74.3 336.9L-5.0 344.9M81.2 336.8L-5.0 345.8M88.0 336.8L-5.0 346.7M101.6 336.8L-5.0 348.7M108.4 336.8L-5.0 349.7M115.2 336.7L-5.0 350.8M121.9 336.7L-5.0 352.0M135.5 336.7L-5.0 354.5M142.2 336.7L-5.0 355.9M148.9 336.6L-5.0 357.3M155.7 336.6L-5.0 358.8M169.1 336.6L-5.0 362.2M175.8 336.6L-5.0 364.0M182.5 336.5L-5.0 366.0M189.2 336.5L-5.0 368.1M202.5 336.5L-5.0 372.7M209.2 336.5L-5.0 375.3M215.9 336.4L-5.0 378.2M222.5 336.4L-5.0 381.2M235.8 336.4L-5.0 388.2M242.4 336.4L-5.0 392.2M249.0 336.3L-5.0 396.6M255.6 336.3L-5.0 401.4M268.8 336.3L-5.0 413.0M275.3 336.3L-5.0 419.8M281.9 336.2L-5.0 427.6M288.5 336.2L-5.0 436.6M301.6 336.2L-5.0 459.1M308.1 336.2L-5.0 473.6M314.6 336.2L-5.0 491.1M321.2 336.1L-5.0 512.6M334.2 336.1L-5.0 575.4M340.7 336.1L-5.0 623.7M347.2 336.1L-5.0 693.1M353.6 336.0L-5.0 801.2M366.6 336.0L13.4 1374.0M373.0 336.0L243.4 1374.0M379.5 336.0L473.4 1374.0M385.9 335.9L703.4 1374.0M398.8 335.9L1146.0 1350.3M405.2 335.9L1146.0 1114.1M411.6 335.9L1146.0 965.0M418.0 335.9L1146.0 862.4M430.7 335.8L1146.0 730.2M437.1 335.8L1146.0 685.2M443.5 335.8L1146.0 648.8M449.8 335.8L1146.0 618.8M462.5 335.7L1146.0 572.2M468.9 335.7L1146.0 553.7M475.2 335.7L1146.0 537.7M481.5 335.7L1146.0 523.6M494.1 335.6L1146.0 499.9M500.4 335.6L1146.0 490.0M506.7 335.6L1146.0 481.0M513.0 335.6L1146.0 472.8M525.5 335.5L1146.0 458.5M531.8 335.5L1146.0 452.3M538.0 335.5L1146.0 446.6M544.3 335.5L1146.0 441.2M556.7 335.4L1146.0 431.7M562.9 335.4L1146.0 427.4M569.1 335.4L1146.0 423.5M575.3 335.4L1146.0 419.7M587.7 335.4L1146.0 412.9M593.9 335.3L1146.0 409.8M600.1 335.3L1146.0 406.9M606.2 335.3L1146.0 404.1M618.5 335.3L1146.0 399.0M624.7 335.2L1146.0 396.7M630.8 335.2L1146.0 394.4M636.9 335.2L1146.0 392.3M649.2 335.2L1146.0 388.3M655.3 335.2L1146.0 386.5M661.4 335.1L1146.0 384.7M667.5 335.1L1146.0 383.0M679.6 335.1L1146.0 379.8M685.7 335.1L1146.0 378.3M691.7 335.1L1146.0 376.9M697.8 335.0L1146.0 375.5M709.9 335.0L1146.0 372.9M715.9 335.0L1146.0 371.7M721.9 335.0L1146.0 370.5M728.0 334.9L1146.0 369.4M740.0 334.9L1146.0 367.2M746.0 334.9L1146.0 366.2M751.9 334.9L1146.0 365.2M757.9 334.9L1146.0 364.2M769.9 334.8L1146.0 362.4M775.8 334.8L1146.0 361.5M781.8 334.8L1146.0 360.6M787.7 334.8L1146.0 359.8M799.6 334.7L1146.0 358.2M805.5 334.7L1146.0 357.5M811.4 334.7L1146.0 356.8M817.3 334.7L1146.0 356.1M829.1 334.7L1146.0 354.7M835.0 334.6L1146.0 354.0M840.9 334.6L1146.0 353.4M846.7 334.6L1146.0 352.8M858.5 334.6L1146.0 351.6M864.3 334.6L1146.0 351.0M870.2 334.5L1146.0 350.5M876.0 334.5L1146.0 349.9M887.7 334.5L1146.0 348.9M893.5 334.5L1146.0 348.4M899.3 334.4L1146.0 347.9M905.1 334.4L1146.0 347.4M916.7 334.4L1146.0 346.4M922.5 334.4L1146.0 346.0M928.2 334.4L1146.0 345.5M934.0 334.3L1146.0 345.1M945.5 334.3L1146.0 344.3M951.3 334.3L1146.0 343.9M957.0 334.3L1146.0 343.5M962.7 334.3L1146.0 343.1M974.2 334.2L1146.0 342.3M979.9 334.2L1146.0 342.0M985.6 334.2L1146.0 341.6M991.3 334.2L1146.0 341.3M1002.7 334.1L1146.0 340.6M1008.4 334.1L1146.0 340.3M1014.0 334.1L1146.0 339.9M1019.7 334.1L1146.0 339.6M1031.0 334.1L1146.0 339.0M1036.7 334.0L1146.0 338.7M1042.3 334.0L1146.0 338.4M1047.9 334.0L1146.0 338.1M1059.2 334.0L1146.0 337.5M1064.8 334.0L1146.0 337.3M1070.4 334.0L1146.0 337.0M1076.0 333.9L1146.0 336.7M1087.2 333.9L1146.0 336.2M1092.8 333.9L1146.0 336.0M1098.3 333.9L1146.0 335.7M1103.9 333.9L1146.0 335.5M1115.0 333.8L1146.0 335.0M1120.6 333.8L1146.0 334.8M1126.1 333.8L1146.0 334.5M1131.6 333.8L1146.0 334.3M1142.7 333.7L1146.0 333.9M-5.0 337.2L1146.0 333.9M-5.0 337.4L1146.0 334.0M-5.0 337.5L1146.0 334.1M-5.0 337.7L1146.0 334.2M-5.0 337.9L1146.0 334.5M-5.0 338.1L1146.0 334.6M-5.0 338.2L1146.0 334.8M-5.0 338.4L1146.0 334.9M-5.0 338.7L1146.0 335.2M-5.0 338.9L1146.0 335.3M-5.0 339.0L1146.0 335.5M-5.0 339.2L1146.0 335.6M-5.0 339.5L1146.0 335.9M-5.0 339.7L1146.0 336.0M-5.0 339.8L1146.0 336.2M-5.0 340.0L1146.0 336.3M-5.0 340.3L1146.0 336.6M-5.0 340.5L1146.0 336.8M-5.0 340.7L1146.0 336.9M-5.0 340.8L1146.0 337.1M-5.0 341.2L1146.0 337.4M-5.0 341.4L1146.0 337.6M-5.0 341.6L1146.0 337.7M-5.0 341.7L1146.0 337.9M-5.0 342.1L1146.0 338.2M-5.0 342.3L1146.0 338.4M-5.0 342.5L1146.0 338.6M-5.0 342.7L1146.0 338.7M-5.0 343.1L1146.0 339.1M-5.0 343.3L1146.0 339.3M-5.0 343.5L1146.0 339.4M-5.0 343.7L1146.0 339.6M-5.0 344.1L1146.0 340.0M-5.0 344.3L1146.0 340.2M-5.0 344.5L1146.0 340.4M-5.0 344.8L1146.0 340.6M-5.0 345.2L1146.0 341.0M-5.0 345.4L1146.0 341.2M-5.0 345.6L1146.0 341.4M-5.0 345.9L1146.0 341.6M-5.0 346.3L1146.0 342.0M-5.0 346.6L1146.0 342.2M-5.0 346.8L1146.0 342.4M-5.0 347.1L1146.0 342.6M-5.0 347.5L1146.0 343.1M-5.0 347.8L1146.0 343.3M-5.0 348.1L1146.0 343.5M-5.0 348.3L1146.0 343.7M-5.0 348.8L1146.0 344.2M-5.0 349.1L1146.0 344.4M-5.0 349.4L1146.0 344.7M-5.0 349.6L1146.0 344.9M-5.0 350.2L1146.0 345.4M-5.0 350.5L1146.0 345.7M-5.0 350.8L1146.0 345.9M-5.0 351.1L1146.0 346.2M-5.0 351.7L1146.0 346.7M-5.0 352.0L1146.0 347.0M-5.0 352.3L1146.0 347.3M-5.0 352.6L1146.0 347.6M-5.0 353.2L1146.0 348.1M-5.0 353.5L1146.0 348.4M-5.0 353.9L1146.0 348.7M-5.0 354.2L1146.0 349.0M-5.0 354.9L1146.0 349.6M-5.0 355.2L1146.0 349.9M-5.0 355.6L1146.0 350.2M-5.0 356.0L1146.0 350.6M-5.0 356.7L1146.0 351.2M-5.0 357.1L1146.0 351.6M-5.0 357.4L1146.0 351.9M-5.0 357.8L1146.0 352.2M-5.0 358.6L1146.0 352.9M-5.0 359.0L1146.0 353.3M-5.0 359.4L1146.0 353.7M-5.0 359.9L1146.0 354.0M-5.0 360.7L1146.0 354.8M-5.0 361.1L1146.0 355.2M-5.0 361.6L1146.0 355.6M-5.0 362.0L1146.0 356.0M-5.0 363.0L1146.0 356.8M-5.0 363.4L1146.0 357.2M-5.0 363.9L1146.0 357.7M-5.0 364.4L1146.0 358.1M-5.0 365.4L1146.0 359.0M-5.0 365.9L1146.0 359.5M-5.0 366.4L1146.0 359.9M-5.0 367.0L1146.0 360.4M-5.0 368.1L1146.0 361.4M-5.0 368.6L1146.0 361.9M-5.0 369.2L1146.0 362.4M-5.0 369.8L1146.0 362.9M-5.0 371.0L1146.0 364.0M-5.0 371.6L1146.0 364.5M-5.0 372.2L1146.0 365.1M-5.0 372.9L1146.0 365.7M-5.0 374.2L1146.0 366.8M-5.0 374.9L1146.0 367.5M-5.0 375.6L1146.0 368.1M-5.0 376.3L1146.0 368.7M-5.0 377.8L1146.0 370.0M-5.0 378.5L1146.0 370.7M-5.0 379.3L1146.0 371.4M-5.0 380.1L1146.0 372.1M-5.0 381.7L1146.0 373.5M-5.0 382.5L1146.0 374.3M-5.0 383.4L1146.0 375.0M-5.0 384.3L1146.0 375.8M-5.0 386.1L1146.0 377.4M-5.0 387.0L1146.0 378.3M-5.0 388.0L1146.0 379.1M-5.0 389.0L1146.0 380.0M-5.0 391.0L1146.0 381.8M-5.0 392.1L1146.0 382.8M-5.0 393.2L1146.0 383.7M-5.0 394.3L1146.0 384.7M-5.0 396.6L1146.0 386.8M-5.0 397.8L1146.0 387.9M-5.0 399.0L1146.0 389.0M-5.0 400.3L1146.0 390.1M-5.0 403.0L1146.0 392.5M-5.0 404.3L1146.0 393.7M-5.0 405.8L1146.0 395.0M-5.0 407.2L1146.0 396.3M-5.0 410.3L1146.0 399.0M-5.0 411.9L1146.0 400.4M-5.0 413.5L1146.0 401.9M-5.0 415.2L1146.0 403.4M-5.0 418.8L1146.0 406.6M-5.0 420.7L1146.0 408.3M-5.0 422.6L1146.0 410.0M-5.0 424.6L1146.0 411.8M-5.0 428.8L1146.0 415.6M-5.0 431.1L1146.0 417.6M-5.0 433.4L1146.0 419.6M-5.0 435.8L1146.0 421.8M-5.0 440.8L1146.0 426.3M-5.0 443.5L1146.0 428.7M-5.0 446.3L1146.0 431.2M-5.0 449.2L1146.0 433.8M-5.0 455.4L1146.0 439.3M-5.0 458.8L1146.0 442.2M-5.0 462.2L1146.0 445.3M-5.0 465.8L1146.0 448.6M-5.0 473.6L1146.0 455.5M-5.0 477.8L1146.0 459.2M-5.0 482.2L1146.0 463.1M-5.0 486.8L1146.0 467.2M-5.0 496.8L1146.0 476.2M-5.0 502.2L1146.0 481.0M-5.0 507.9L1146.0 486.1M-5.0 514.0L1146.0 491.6M-5.0 527.4L1146.0 503.5M-5.0 534.7L1146.0 510.0M-5.0 542.6L1146.0 517.0M-5.0 551.0L1146.0 524.5M-5.0 569.7L1146.0 541.2M-5.0 580.2L1146.0 550.6M-5.0 591.5L1146.0 560.7M-5.0 603.9L1146.0 571.7M-5.0 632.0L1146.0 596.8M-5.0 648.2L1146.0 611.2M-5.0 666.1L1146.0 627.1M-5.0 685.9L1146.0 644.8M-5.0 732.9L1146.0 686.8M-5.0 761.1L1146.0 711.9M-5.0 793.2L1146.0 740.6M-5.0 830.3L1146.0 773.6M-5.0 924.3L1146.0 857.5M-5.0 985.2L1146.0 911.8M-5.0 1059.4L1146.0 978.0M-5.0 1151.8L1146.0 1060.4M495.8 1374.0L1146.0 1305.6" stroke-width="1.2" stroke-opacity="0.8"/><path d="M26.3 337.0L-5.0 339.8M60.7 336.9L-5.0 343.3M94.8 336.8L-5.0 347.7M128.7 336.7L-5.0 353.2M162.4 336.6L-5.0 360.5M195.9 336.5L-5.0 370.3M229.1 336.4L-5.0 384.5M262.2 336.3L-5.0 406.9M295.0 336.2L-5.0 446.9M327.7 336.1L-5.0 539.9M360.1 336.0L-5.0 993.2M392.3 335.9L933.5 1374.0M424.4 335.8L1146.0 787.4M456.2 335.7L1146.0 593.6M487.8 335.6L1146.0 511.1M519.2 335.6L1146.0 465.4M550.5 335.5L1146.0 436.3M581.5 335.4L1146.0 416.2M612.4 335.3L1146.0 401.5M643.1 335.2L1146.0 390.2M673.5 335.1L1146.0 381.4M703.8 335.0L1146.0 374.2M734.0 334.9L1146.0 368.2M763.9 334.8L1146.0 363.3M793.6 334.8L1146.0 359.0M823.2 334.7L1146.0 355.4M852.6 334.6L1146.0 352.2M881.8 334.5L1146.0 349.4M910.9 334.4L1146.0 346.9M939.8 334.3L1146.0 344.7M968.5 334.2L1146.0 342.7M997.0 334.2L1146.0 340.9M1025.4 334.1L1146.0 339.3M1053.6 334.0L1146.0 337.8M1081.6 333.9L1146.0 336.5M1109.5 333.8L1146.0 335.2M1137.2 333.8L1146.0 334.1M-5.0 337.1L1146.0 333.7M-5.0 337.8L1146.0 334.4M-5.0 338.5L1146.0 335.0M-5.0 339.3L1146.0 335.7M-5.0 340.2L1146.0 336.5M-5.0 341.0L1146.0 337.2M-5.0 341.9L1146.0 338.1M-5.0 342.9L1146.0 338.9M-5.0 343.9L1146.0 339.8M-5.0 345.0L1146.0 340.8M-5.0 346.1L1146.0 341.8M-5.0 347.3L1146.0 342.8M-5.0 348.6L1146.0 344.0M-5.0 349.9L1146.0 345.2M-5.0 351.4L1146.0 346.5M-5.0 352.9L1146.0 347.8M-5.0 354.6L1146.0 349.3M-5.0 356.3L1146.0 350.9M-5.0 358.2L1146.0 352.6M-5.0 360.3L1146.0 354.4M-5.0 362.5L1146.0 356.4M-5.0 364.9L1146.0 358.5M-5.0 367.5L1146.0 360.9M-5.0 370.4L1146.0 363.4M-5.0 373.5L1146.0 366.3M-5.0 377.0L1146.0 369.3M-5.0 380.9L1146.0 372.8M-5.0 385.2L1146.0 376.6M-5.0 390.0L1146.0 380.9M-5.0 395.4L1146.0 385.8M-5.0 401.6L1146.0 391.3M-5.0 408.7L1146.0 397.6M-5.0 417.0L1146.0 405.0M-5.0 426.7L1146.0 413.7M-5.0 438.3L1146.0 424.0M-5.0 452.3L1146.0 436.5M-5.0 469.6L1146.0 451.9M-5.0 491.6L1146.0 471.6M-5.0 520.5L1146.0 497.3M-5.0 560.0L1146.0 532.5M-5.0 617.3L1146.0 583.7M-5.0 708.0L1146.0 664.6M-5.0 873.4L1146.0 812.1M-5.0 1270.0L1146.0 1165.8" stroke-width="2.5" stroke-opacity="0.85"/>
<g stroke="none" font-family="Liberation Sans, sans-serif" font-weight="bold" opacity="0.7"><text transform="matrix(110.10 202.83 -543.74 28.27 658.6 825.2)" font-size="0.1" fill="#c8746c">2</text><text transform="matrix(284.50 536.90 -869.84 74.81 824.3 1150.7)" font-size="0.1" fill="#c8746c">3</text><text transform="matrix(56.94 104.89 -394.14 14.62 579.4 679.4)" font-size="0.1" fill="#c08078">1</text><text transform="matrix(33.92 63.12 -307.19 8.80 532.4 595.7)" font-size="0.1" fill="#b88a84">0</text><text transform="matrix(-315.30 9.26 -33.18 -66.40 525.2 603.1)" font-size="0.1" fill="#7a7fb0">0</text><text transform="matrix(-335.91 9.86 40.83 -70.74 199.8 612.7)" font-size="0.1" fill="#7a7fb0">1</text><text transform="matrix(-296.18 8.69 -99.68 -62.37 836.9 594.0)" font-size="0.1" fill="#7a7fb0">-1</text><text transform="matrix(22.95 42.71 -253.38 5.95 504.8 544.3)" font-size="0.1" fill="#b88a84">-1</text></g></g>
<g transform="translate(533,438)"><ellipse cx="-3" cy="4" rx="31" ry="30" fill="#2e2e2e"/><g stroke="#8b8b8b" stroke-width="1.4" stroke-linejoin="round"><polygon points="-14.9,27.9 2.2,31.6 -8.9,28.4" fill="rgb(128,128,128)"/><polygon points="-18.7,-25.9 -26.4,-15.6 -27.4,-12.8" fill="rgb(128,128,128)"/><polygon points="18.7,25.9 10.8,27.2 2.2,31.6" fill="rgb(128,128,128)"/><polygon points="24.2,-16.0 31.9,-2.0 25.2,-18.8" fill="rgb(166,166,166)"/><polygon points="14.9,-27.9 24.2,-16.0 25.2,-18.8" fill="rgb(172,172,172)"/><polygon points="-14.9,27.9 -8.9,28.4 -25.2,18.8" fill="rgb(128,128,128)"/><polygon points="-28.0,4.0 -31.9,2.0 -25.2,18.8" fill="rgb(128,128,128)"/><polygon points="18.7,25.9 26.4,15.6 10.8,27.2" fill="rgb(133,133,133)"/><polygon points="2.2,31.6 10.8,27.2 -8.9,28.4" fill="rgb(128,128,128)"/><polygon points="-28.0,4.0 -27.4,-12.8 -31.9,2.0" fill="rgb(128,128,128)"/><polygon points="-18.7,-25.9 -12.5,-22.8 -2.2,-31.6" fill="rgb(162,162,162)"/><polygon points="14.9,-27.9 -2.2,-31.6 7.2,-24.0" fill="rgb(178,178,178)"/><polygon points="26.2,0.7 26.4,15.6 31.9,-2.0" fill="rgb(160,160,160)"/><polygon points="-18.7,-25.9 -27.4,-12.8 -12.5,-22.8" fill="rgb(153,153,153)"/><polygon points="26.2,0.7 31.9,-2.0 24.2,-16.0" fill="rgb(174,174,174)"/><polygon points="14.9,-27.9 7.2,-24.0 24.2,-16.0" fill="rgb(185,185,185)"/><polygon points="-16.6,14.4 -25.2,18.8 -8.9,28.4" fill="rgb(128,128,128)"/><polygon points="7.2,-24.0 -2.2,-31.6 -12.5,-22.8" fill="rgb(178,178,178)"/><polygon points="-28.0,4.0 -25.2,18.8 -16.6,14.4" fill="rgb(128,128,128)"/><polygon points="15.3,12.4 10.8,27.2 26.4,15.6" fill="rgb(151,151,151)"/><polygon points="-0.3,20.4 -8.9,28.4 10.8,27.2" fill="rgb(131,131,131)"/><polygon points="-28.0,4.0 -18.0,-5.2 -27.4,-12.8" fill="rgb(146,146,146)"/><polygon points="26.2,0.7 15.3,12.4 26.4,15.6" fill="rgb(166,166,166)"/><polygon points="-12.5,-22.8 -27.4,-12.8 -18.0,-5.2" fill="rgb(159,159,159)"/><polygon points="-0.3,20.4 -16.6,14.4 -8.9,28.4" fill="rgb(134,134,134)"/><polygon points="26.2,0.7 24.2,-16.0 13.9,-7.2" fill="rgb(188,188,188)"/><polygon points="13.9,-7.2 24.2,-16.0 7.2,-24.0" fill="rgb(192,192,192)"/><polygon points="-0.3,20.4 10.8,27.2 15.3,12.4" fill="rgb(152,152,152)"/><polygon points="-28.0,4.0 -16.6,14.4 -18.0,-5.2" fill="rgb(147,147,147)"/><polygon points="-2.6,-12.8 7.2,-24.0 -12.5,-22.8" fill="rgb(185,185,185)"/><polygon points="26.2,0.7 13.9,-7.2 15.3,12.4" fill="rgb(183,183,183)"/><polygon points="-2.6,-12.8 -12.5,-22.8 -18.0,-5.2" fill="rgb(175,175,175)"/><polygon points="-2.6,-12.8 13.9,-7.2 7.2,-24.0" fill="rgb(193,193,193)"/><polygon points="-0.3,20.4 -1.7,4.4 -16.6,14.4" fill="rgb(158,158,158)"/><polygon points="-18.0,-5.2 -16.6,14.4 -1.7,4.4" fill="rgb(163,163,163)"/><polygon points="-0.3,20.4 15.3,12.4 -1.7,4.4" fill="rgb(169,169,169)"/><polygon points="-1.7,4.4 15.3,12.4 13.9,-7.2" fill="rgb(183,183,183)"/><polygon points="-2.6,-12.8 -18.0,-5.2 -1.7,4.4" fill="rgb(177,177,177)"/><polygon points="-2.6,-12.8 -1.7,4.4 13.9,-7.2" fill="rgb(188,188,188)"/></g></g>
<g font-family="Liberation Sans, sans-serif" font-size="27"><text x="5" y="1350" fill="#0000e0">z</text><text x="22" y="1331" fill="#00d000">y</text><text x="26" y="1353" fill="#e00000">x</text><path d="M24 1336V1348" stroke="#20c020" stroke-width="1.5"/></g>
</svg>
<div class="a" style="left:966px;top:441px;width:115px;height:41px;background:rgba(88,108,118,0.78);border:2px solid #a9b4b9;border-radius:21px"></div>
<div class="t" style="top:447.3px;font-size:27.5px;line-height:27.5px;color:#ececec;left:986px;letter-spacing:-0.83px;">Persp</div>
<svg class="a" style="left:1059px;top:461px;" width="7" height="4" viewBox="0 0 7 4"><path d="M0 0H8L4 5z" fill="#e8e8e8"/></svg>
<div class="a" style="left:1089px;top:441px;width:139px;height:41px;background:rgba(88,108,118,0.78);border:2px solid #a9b4b9;border-radius:21px"></div>
<div class="t" style="top:447.3px;font-size:27.5px;line-height:27.5px;color:#ececec;left:1109.5px;letter-spacing:-0.71px;">No cam</div>
<svg class="a" style="left:1206px;top:461px;" width="7" height="4" viewBox="0 0 7 4"><path d="M0 0H8L4 5z" fill="#e8e8e8"/></svg>
<div class="a" style="left:27px;top:462px;width:67px;height:187px;background:#3a3a3a;border:1px solid #222;box-shadow:inset 0 0 0 1px #4e4e4e"></div>
<div class="a" style="left:30px;top:465px;width:61px;height:59px;background:linear-gradient(#505050,#3e3e3e);"></div>
<div class="a" style="left:30px;top:524px;width:61px;height:1px;background:#1c1c1c;"></div>
<div class="a" style="left:30px;top:525px;width:61px;height:59px;background:linear-gradient(#566a76,#9ba8ac);border:1px solid #3a4850"></div>
<div class="a" style="left:30px;top:584px;width:61px;height:61px;background:linear-gradient(#4a4a4a,#3c3c3c);"></div>
<div class="a" style="left:30px;top:645px;width:61px;height:1px;background:#1c1c1c;"></div>
<svg class="a" style="left:33px;top:470px;" width="54" height="52" viewBox="0 0 54 52"><defs><radialGradient id="vg1" cx="0.4" cy="0.35" r="0.7"><stop offset="0" stop-color="#8a8a8a"/><stop offset="1" stop-color="#333"/></radialGradient><linearGradient id="vg2" x1="0" y1="0" x2="1" y2="0"><stop offset="0" stop-color="#fff0a0"/><stop offset="0.6" stop-color="#f0c828"/><stop offset="1" stop-color="#c89808"/></linearGradient></defs><circle cx="36" cy="19" r="16" fill="url(#vg1)" stroke="#222"/><path d="M20 7L3 40A16 7 0 0 0 36 41z" fill="url(#vg2)" stroke="#6a5400" stroke-width="1.200"/><path d="M5 40A15 5 0 0 0 34 41" fill="none" stroke="#fff4c0" stroke-width="1.500"/></svg>
<svg class="a" style="left:33px;top:528px;" width="54" height="54" viewBox="0 0 54 54"><g stroke="#4a4a46" stroke-width="1.500"><path d="M27 2L52 26L27 50L2 26z" fill="#7d807c"/><path d="M14.500 14L39.500 38M39.500 14L14.500 38" /></g><path d="M27 27L40 40L27 53L14 40z" fill="#f8dc60" stroke="#a86c10" stroke-width="2.200"/><path d="M27 31L36 40L27 49L18 40z" fill="none" stroke="#fff8d0" stroke-width="1.500"/></svg>
<svg class="a" style="left:33px;top:588px;" width="54" height="56" viewBox="0 0 54 56"><path d="M2 6C10 0 20 0 24 4L14 44C6 40 0 24 2 6z" fill="#c8a808" opacity=".8"/><path d="M22 5L52 20L42 50L12 30z" fill="#d8b810" stroke="#fff8c0" stroke-width="1.500" stroke-linejoin="round"/><path d="M22 5L12 30L42 50" fill="none"/><path d="M22 5L30 20L52 20M30 20L22 40" stroke="#fff8c0" stroke-width="1.500" fill="none"/><path d="M12 30L22 40L42 50L52 20L30 20z" fill="#c8a000" opacity=".6"/><path d="M22 5L30 20L22 40L12 30z" fill="#f4dc40" opacity=".7"/></svg>
<svg class="a" style="left:81px;top:507px;" width="10" height="15" viewBox="0 0 10 15"><path d="M0 0V15L10 7.500z" fill="#8c8c8c"/></svg>
<svg class="a" style="left:81px;top:567px;" width="10" height="15" viewBox="0 0 10 15"><path d="M0 0V15L10 7.500z" fill="#2c2c2c"/></svg>
<svg class="a" style="left:81px;top:627px;" width="10" height="15" viewBox="0 0 10 15"><path d="M0 0V15L10 7.500z" fill="#8c8c8c"/></svg>
<div class="a" style="left:21px;top:663px;width:78px;height:1px;background:#4c4c4c;"></div>
<svg class="a" style="left:40px;top:718px;" width="46" height="66" viewBox="0 0 46 66"><defs><linearGradient id="sag" x1="0" y1="0" x2="1" y2="1"><stop offset="0" stop-color="#f4f4f0"/><stop offset="1" stop-color="#8c8c88"/></linearGradient></defs><path d="M5 5V50L16 40L25 62L34 58L25 37L40 36z" fill="url(#sag)" stroke="#1a1a1a" stroke-width="2.200" stroke-linejoin="round"/></svg>
<svg class="a" style="left:84px;top:770px;" width="10" height="15" viewBox="0 0 10 15"><path d="M0 0V15L10 7.500z" fill="#8c8c8c"/></svg>
<div class="a" style="left:26px;top:788px;width:68px;height:68px;background:linear-gradient(#586c78,#98a5a9);border:1px solid #9aa8ae"></div>
<svg class="a" style="left:44px;top:796px;" width="34" height="50" viewBox="0 0 34 50"><path d="M7 20V14a10 10 0 0 1 20 0V20" fill="none" stroke="#e4e4e4" stroke-width="4.500"/><rect x="2" y="20" width="30" height="24" fill="#e4e4e4"/><path d="M13 24V40L17 36L20 43L23 41.500L20 35L26 34.500z" fill="#687c88"/></svg>
<svg class="a" style="left:28px;top:867px;" width="64" height="48" viewBox="0 0 64 48"><defs><linearGradient id="mvc" x1="0" y1="0" x2="1" y2="1"><stop offset="0" stop-color="#e8ecee"/><stop offset="1" stop-color="#7a8892"/></linearGradient></defs><g fill="#e02810" stroke="#7a0c04" stroke-width="1"><path d="M2 36L12 22L14 28L26 24L28 30L16 34L18 40z"/><path d="M62 14L50 26L48 20L38 24L36 18L46 14L44 8z" transform="translate(0,4)"/><path d="M14 10L26 8L24 13L32 18L29 23L21 18L18 22z"/><path d="M56 46L40 46L43 41L32 33L36 28L47 36L50 32z"/></g><path d="M20 8L34 3L46 9V25L33 32L20 25z" fill="url(#mvc)" stroke="#3a4650" stroke-width="1"/><path d="M20 8L33 14L46 9M33 14V32" fill="none" stroke="#f4f6f7" stroke-width="1"/><path d="M33 14L46 9V25L33 32z" fill="#5e6c78" opacity=".7"/></svg>
<svg class="a" style="left:27px;top:937px;" width="66" height="52" viewBox="0 0 66 52"><defs><radialGradient id="rts" cx="0.4" cy="0.35" r="0.7"><stop offset="0" stop-color="#c8ced2"/><stop offset="1" stop-color="#5a6670"/></radialGradient></defs><path d="M14 18C2 22 0 34 8 40C12 43 18 44 22 42L20 36C14 36 10 32 12 28C13 25 16 24 18 24z" fill="#e04010" stroke="#7a1804" stroke-width="1"/><path d="M8 40C12 43 18 44 22 42L20 36C16 37 12 36 10 34z" fill="#f0a040"/><path d="M50 18C62 22 64 32 58 38L64 42L44 50L34 38L42 40C48 38 52 34 50 28C49 25 47 24 46 24z" fill="#e04010" stroke="#7a1804" stroke-width="1"/><path d="M36 40L46 42L60 44L44 50z" fill="#f08030"/><circle cx="33" cy="16" r="14" fill="url(#rts)" stroke="#f4f4f4" stroke-width="2.200"/><circle cx="33" cy="16" r="15.500" fill="none" stroke="#1c2830" stroke-width="1"/></svg>
<svg class="a" style="left:31px;top:999px;" width="58" height="64" viewBox="0 0 58 64"><g fill="#e02810" stroke="#7a0c04" stroke-width="0.800"><path d="M29 0L38 11H32V24H26V11H20z"/><path d="M2 50L14 44L13 49L24 44L26 49L15 54L17 58z"/><path d="M56 58L43 56L46 52L34 46L37 41L48 47L50 43z"/></g><path d="M14 24L30 18L44 24V44L30 52L14 44z" fill="#9aa6ae" fill-opacity=".45" stroke="#5a6670" stroke-width="1"/><path d="M22 32L30 29L37 32V42L30 46L22 42z" fill="#dfe5e8" stroke="#5a6670" stroke-width="0.800"/><path d="M30 36V46M22 32L30 36L37 32" stroke="#7a8892" stroke-width="0.800" fill="none"/><path d="M30 36L37 32V42L30 46z" fill="#7a8892"/><path d="M27 24V36M18 46L27 40M44 50L33 42" stroke="#f08070" stroke-width="3" opacity=".8"/></svg>
<svg class="a" style="left:37px;top:1076px;" width="44" height="54" viewBox="0 0 44 54"><g opacity=".55"><circle cx="14" cy="14" r="8" fill="#6a6a6a"/><path d="M30 2L36 22L28 24z" fill="#6a6a6a"/><circle cx="22" cy="32" r="5" fill="#a03828"/><path d="M12 50L20 36M36 52L26 36M22 38V54" stroke="#5a5a5a" stroke-width="5" stroke-linecap="round"/></g></svg>
<svg class="a" style="left:27px;top:1141px;" width="64" height="62" viewBox="0 0 64 62"><path d="M28 30L6 50" stroke="#7a9ad0" stroke-width="4"/><path d="M28 30L56 38" stroke="#d02818" stroke-width="5"/><path d="M26 30L22 8" stroke="#60b030" stroke-width="4"/><path d="M12 2L32 16L18 22z" fill="#70d030" stroke="#2c7008" stroke-width="1"/><path d="M12 2L22 14L18 22z" fill="#b0f070"/><path d="M64 40L46 26L44 44z" fill="#e85848" stroke="#8a1808" stroke-width="1"/><path d="M64 40L50 32L44 44z" fill="#f8a898"/><path d="M0 56L10 38L20 52z" fill="#6a98e0" stroke="#24488c" stroke-width="1"/><path d="M0 56L12 44L20 52z" fill="#a8c8f4"/><circle cx="27" cy="30" r="12" fill="none" stroke="#e8b818" stroke-width="5"/><circle cx="27" cy="30" r="12" fill="none" stroke="#fff0a0" stroke-width="1.500"/><path d="M20 30L27 25L34 30L27 36z" fill="#e8ecf0" stroke="#555" stroke-width="1"/></svg>
<svg class="a" style="left:84px;top:1182px;" width="10" height="15" viewBox="0 0 10 15"><path d="M0 0V15L10 7.500z" fill="#8c8c8c"/></svg>
<div class="a" style="left:26px;top:1217px;width:68px;height:1px;background:#4c4c4c;"></div>
<svg class="a" style="left:30px;top:1232px;" width="60" height="60" viewBox="0 0 60 60"><g transform="rotate(-12 22 24)"><defs><linearGradient id="mgr1" x1="0" y1="0" x2="1" y2="0"><stop offset="0" stop-color="#b83840"/><stop offset="0.4" stop-color="#e8686c"/><stop offset="1" stop-color="#a83038"/></linearGradient></defs><path d="M4 40V20A17.0 17.0 0 0 1 38 20V40H27V20A6.0 6.0 0 0 0 15 20V40z" fill="url(#mgr1)" stroke="#3c1014" stroke-width="2.400" stroke-linejoin="round"/><rect x="4" y="31" width="11" height="9" fill="#f0f0f0" stroke="#3c1014" stroke-width="1"/><rect x="27" y="31" width="11" height="9" fill="#f0f0f0" stroke="#3c1014" stroke-width="1"/></g><path d="M20 18H56V54H16V40M38 18V54M20 36H56" fill="none" stroke="#c8c8c8" stroke-width="3"/><g transform="rotate(-12 22 24)"><path d="M4 40V20A17.0 17.0 0 0 1 38 20V40H27V20A6.0 6.0 0 0 0 15 20V40z" fill="url(#mgr1)" stroke="#3c1014" stroke-width="2.400" stroke-linejoin="round"/><rect x="4" y="31" width="11" height="9" fill="#f0f0f0" stroke="#3c1014" stroke-width="1"/><rect x="27" y="31" width="11" height="9" fill="#f0f0f0" stroke="#3c1014" stroke-width="1"/></g></svg>
<svg class="a" style="left:84px;top:1284px;" width="10" height="15" viewBox="0 0 10 15"><path d="M0 0V15L10 7.500z" fill="#8c8c8c"/></svg>
<svg class="a" style="left:30px;top:1302px;" width="60" height="60" viewBox="0 0 60 60"><path d="M2 54C12 40 24 44 34 40S48 30 56 22" fill="none" stroke="#d0d0d0" stroke-width="3"/><g transform="rotate(-12 22 24)"><defs><linearGradient id="mgr2" x1="0" y1="0" x2="1" y2="0"><stop offset="0" stop-color="#b83840"/><stop offset="0.4" stop-color="#e8686c"/><stop offset="1" stop-color="#a83038"/></linearGradient></defs><path d="M4 40V20A17.0 17.0 0 0 1 38 20V40H27V20A6.0 6.0 0 0 0 15 20V40z" fill="url(#mgr2)" stroke="#3c1014" stroke-width="2.400" stroke-linejoin="round"/><rect x="4" y="31" width="11" height="9" fill="#f0f0f0" stroke="#3c1014" stroke-width="1"/><rect x="27" y="31" width="11" height="9" fill="#f0f0f0" stroke="#3c1014" stroke-width="1"/></g></svg>
<svg class="a" style="left:84px;top:1352px;" width="10" height="15" viewBox="0 0 10 15"><path d="M0 0V15L10 7.500z" fill="#8c8c8c"/></svg>
<svg class="a" style="left:30px;top:1372px;" width="60" height="60" viewBox="0 0 60 60"><g transform="rotate(-12 22 24)"><defs><linearGradient id="mgr3" x1="0" y1="0" x2="1" y2="0"><stop offset="0" stop-color="#b83840"/><stop offset="0.4" stop-color="#e8686c"/><stop offset="1" stop-color="#a83038"/></linearGradient></defs><path d="M4 40V20A17.0 17.0 0 0 1 38 20V40H27V20A6.0 6.0 0 0 0 15 20V40z" fill="url(#mgr3)" stroke="#3c1014" stroke-width="2.400" stroke-linejoin="round"/><rect x="4" y="31" width="11" height="9" fill="#f0f0f0" stroke="#3c1014" stroke-width="1"/><rect x="27" y="31" width="11" height="9" fill="#f0f0f0" stroke="#3c1014" stroke-width="1"/></g><defs><radialGradient id="mgp" cx="0.4" cy="0.35" r="0.7"><stop offset="0" stop-color="#fff"/><stop offset="1" stop-color="#8a8a86"/></radialGradient></defs><circle cx="46" cy="44" r="10" fill="url(#mgp)"/></svg>
<svg class="a" style="left:84px;top:1422px;" width="10" height="15" viewBox="0 0 10 15"><path d="M0 0V15L10 7.500z" fill="#8c8c8c"/></svg>
<svg class="a" style="left:26px;top:1440px;" width="64" height="64" viewBox="0 0 64 64"><defs><linearGradient id="mgr4" x1="0" y1="0" x2="1" y2="0"><stop offset="0" stop-color="#b83840"/><stop offset="0.4" stop-color="#e8686c"/><stop offset="1" stop-color="#a83038"/></linearGradient></defs><path d="M3 58V30A28.0 28.0 0 0 1 59 30V58H41V30A10.0 10.0 0 0 0 21 30V58z" fill="url(#mgr4)" stroke="#3c1014" stroke-width="2.400" stroke-linejoin="round"/><rect x="3" y="44" width="18" height="14" fill="#f0f0f0" stroke="#3c1014" stroke-width="1"/><rect x="41" y="44" width="18" height="14" fill="#f0f0f0" stroke="#3c1014" stroke-width="1"/></svg>
<svg class="a" style="left:84px;top:1492px;" width="10" height="15" viewBox="0 0 10 15"><path d="M0 0V15L10 7.500z" fill="#8c8c8c"/></svg>
<div class="a" style="left:26px;top:1518px;width:68px;height:1px;background:#4c4c4c;"></div>
<div class="a" style="left:26px;top:1530px;width:68px;height:68px;background:linear-gradient(#586c78,#98a5a9);border:1px solid #9aa8ae"></div>
<svg class="a" style="left:31px;top:1535px;" width="58" height="58" viewBox="0 0 56 56"><defs><radialGradient id="cmr3" cx="0.4" cy="0.35" r="0.7"><stop offset="0" stop-color="#6a7074"/><stop offset="1" stop-color="#15181a"/></radialGradient></defs>
<ellipse cx="30" cy="50" rx="22" ry="3.5" fill="#1c1c1c" opacity=".7"/>
<circle cx="16" cy="22" r="13" fill="url(#cmr3)" stroke="#0c0e10" stroke-width="1.2"/><circle cx="16" cy="22" r="4.500" fill="#b8bec2" stroke="#222" stroke-width="1"/><circle cx="16" cy="22" r="9" fill="none" stroke="#4a5054" stroke-width="1.500"/>
<circle cx="36" cy="14" r="11" fill="url(#cmr3)" stroke="#0c0e10" stroke-width="1.2"/><circle cx="36" cy="14" r="3.500" fill="#b8bec2" stroke="#222" stroke-width="1"/><circle cx="36" cy="14" r="7.500" fill="none" stroke="#4a5054" stroke-width="1.300"/>
<rect x="25" y="23" width="16" height="11" fill="#8e989e" stroke="#15181a" stroke-width="1"/>
<path d="M40 27L54 23V40L40 37z" fill="#2a2e30" stroke="#0c0e10" stroke-width="1"/><path d="M46 25.500V38.500M50 24.500V39.500" stroke="#555c60" stroke-width="1.500"/>
<rect x="22" y="32" width="22" height="18" rx="1.500" fill="#4e565a" stroke="#0c0e10" stroke-width="1.200"/><rect x="22" y="32" width="22" height="4" fill="#7a8488"/><circle cx="33" cy="42" r="4.500" fill="#d0d4d8" stroke="#15181a" stroke-width="1.200"/><circle cx="33" cy="42" r="1.800" fill="#333"/>
<rect x="14" y="37" width="9" height="10" rx="1" fill="#2c3034" stroke="#0c0e10"/><circle cx="17" cy="46" r="3" fill="#c8ccd0" stroke="#222"/></svg>
<svg class="a" style="left:84px;top:1582px;" width="10" height="15" viewBox="0 0 10 15"><path d="M0 0V15L10 7.500z" fill="#2c2c2c"/></svg>
<svg class="a" style="left:32px;top:1603px;" width="50" height="14" viewBox="0 0 50 14"><path d="M2 13A24 20 0 0 1 48 13" fill="none" stroke="#d8d8d8" stroke-width="2.500"/><path d="M25 1V10" stroke="#2c2c2c" stroke-width="2"/></svg>
<svg class="a" style="left:55px;top:1634px;" width="11" height="9" viewBox="0 0 11 9"><path d="M0 0H11L5.500 9z" fill="#8c8c8c"/></svg>
<svg class="a" style="left:28px;top:1667px;" width="50" height="46" viewBox="0 0 50 46"><path d="M2 24L30 12L48 28L20 42z" fill="#e8e8e4" stroke="#888" stroke-width="1"/><path d="M2 24L20 42V46L2 28z" fill="#e07828"/><path d="M20 42L48 28V32L20 46z" fill="#b8b8b4"/><path d="M10 14C18 6 30 4 42 6L40 14C30 12 22 14 16 20z" fill="#f4f4f0" stroke="#999" stroke-width="1"/><path d="M16 26L34 18M20 30L38 22" stroke="#999" stroke-width="1.200"/><path d="M34 20L50 14" stroke="#5a6a9a" stroke-width="1.500"/></svg>
<svg class="a" style="left:75px;top:1700px;" width="10" height="15" viewBox="0 0 10 15"><path d="M0 0V15L10 7.500z" fill="#8c8c8c"/></svg>
<svg class="a" style="left:27px;top:1728px;" width="58" height="52" viewBox="0 0 58 52"><defs><radialGradient id="flm" cx="0.4" cy="0.3" r="0.8"><stop offset="0" stop-color="#e4e4e0"/><stop offset="1" stop-color="#8c8c88"/></radialGradient></defs><path d="M8 32C20 46 40 46 56 44V52C40 52 20 52 6 38z" fill="#7a7a76" stroke="#444" stroke-width="1"/><ellipse cx="27" cy="22" rx="26" ry="20" fill="url(#flm)" stroke="#5a5a56" stroke-width="1.200"/><g fill="#4a4a46"><ellipse cx="27" cy="10" rx="6" ry="4.500"/><ellipse cx="13" cy="20" rx="6" ry="4.500"/><ellipse cx="41" cy="20" rx="6" ry="4.500"/><ellipse cx="19" cy="32" rx="6" ry="4.500"/><ellipse cx="36" cy="32" rx="6" ry="4.500"/></g><circle cx="27" cy="22" r="2.500" fill="#444"/></svg>
<svg class="a" style="left:81px;top:1765px;" width="10" height="15" viewBox="0 0 10 15"><path d="M0 0V15L10 7.500z" fill="#8c8c8c"/></svg>
<div class="a" style="left:1247px;top:499px;width:58px;height:58px;background:linear-gradient(#566a76,#9ba8ac);border:1px solid #7a8890"></div>
<svg class="a" style="left:1250px;top:520px;" width="52" height="34" viewBox="0 0 52 34"><path d="M26 2L50 12L26 32L2 14z" fill="#2c3438" stroke="#e4e4e0" stroke-width="3.500" stroke-linejoin="round"/><path d="M14 8L38 22M38 7L14 23" stroke="#e4e4e0" stroke-width="3.500"/></svg>
<svg class="a" style="left:1296px;top:543px;" width="10" height="15" viewBox="0 0 10 15"><path d="M0 0V15L10 7.500z" fill="#2c2c2c"/></svg>
<svg class="a" style="left:1250px;top:570px;" width="50" height="44" viewBox="0 0 50 44"><path d="M4 4L34 2L48 30L10 40z" fill="#2c3438" stroke="#8cd050" stroke-width="2.800" stroke-linejoin="round"/><path d="M19 3L29 35M7 20L41 16" stroke="#8cd050" stroke-width="2.400"/><path d="M10 12C22 4 34 12 30 22C28 30 18 30 18 23C18 18 24 18 25 21" fill="none" stroke="#2c2c2c" stroke-width="6" stroke-linecap="round"/><path d="M10 12C22 4 34 12 30 22C28 30 18 30 18 23C18 18 24 18 25 21" fill="none" stroke="#e4e4e0" stroke-width="3.200" stroke-linecap="round"/></svg>
<svg class="a" style="left:1296px;top:604px;" width="10" height="15" viewBox="0 0 10 15"><path d="M0 0V15L10 7.500z" fill="#8c8c8c"/></svg>
<svg class="a" style="left:1256px;top:630px;" width="42" height="50" viewBox="0 0 42 50"><path d="M8 22V16a13 13 0 0 1 26 0V22" fill="none" stroke="#2c2c2c" stroke-width="9"/><path d="M8 22V16a13 13 0 0 1 26 0V22" fill="none" stroke="#d8d8d4" stroke-width="5.500"/><rect x="2" y="22" width="38" height="26" rx="2" fill="#dcdcd8" stroke="#2c2c2c" stroke-width="1.500"/><path d="M3 28h36M3 34.500h36M3 41h36" stroke="#a4a4a0" stroke-width="2.500"/></svg>
<svg class="a" style="left:1258px;top:693px;" width="36" height="52" viewBox="0 0 36 52"><path d="M3 17A15 15 0 1 1 33 17C33 26 25 28 25 35H11C11 28 3 26 3 17z" fill="#2c3438" stroke="#c4c4bc" stroke-width="2.6"/><path d="M11 38h14M11 42h14M13 46h10" stroke="#d8d8d0" stroke-width="2.200"/><path d="M11 10L25 24M25 10L11 24" stroke="#ecece8" stroke-width="4.500"/></svg>
<svg class="a" style="left:1247px;top:754px;" width="56" height="56" viewBox="0 0 56 56"><defs><radialGradient id="hdl" cx="0.4" cy="0.35" r="0.75"><stop offset="0" stop-color="#fafafa"/><stop offset="0.6" stop-color="#c4c4c0"/><stop offset="1" stop-color="#6a6a66"/></radialGradient><linearGradient id="hdr" x1="0" y1="0" x2="1" y2="1"><stop offset="0" stop-color="#e8e8e4"/><stop offset="1" stop-color="#5a5a56"/></linearGradient></defs><ellipse cx="26" cy="28" rx="25" ry="26" fill="url(#hdr)" stroke="#444" stroke-width="1"/><circle cx="30" cy="32" r="19" fill="#3a3e40"/><circle cx="30" cy="32" r="17" fill="url(#hdl)"/><path d="M22 20C20 28 20 36 22 44M30 17C32 28 32 36 30 47M38 20C41 28 41 36 38 44" stroke="#8c8c88" stroke-width="2.500" fill="none"/></svg>
<svg class="a" style="left:1296px;top:800px;" width="10" height="15" viewBox="0 0 10 15"><path d="M0 0V15L10 7.500z" fill="#8c8c8c"/></svg>
<div class="a" style="left:1247px;top:811px;width:58px;height:58px;background:linear-gradient(#566a76,#9ba8ac);border:1px solid #7a8890"></div>
<svg class="a" style="left:1258px;top:816px;" width="36" height="52" viewBox="0 0 36 52"><path d="M3 17A15 15 0 1 1 33 17C33 26 25 28 25 35H11C11 28 3 26 3 17z" fill="#b8bab4" stroke="#3a4a52" stroke-width="1.6"/><path d="M11 38h14M11 42h14M13 46h10" stroke="#d8d8d0" stroke-width="2.200"/></svg>
<svg class="a" style="left:1296px;top:855px;" width="10" height="15" viewBox="0 0 10 15"><path d="M0 0V15L10 7.500z" fill="#2c2c2c"/></svg>
<svg class="a" style="left:1258px;top:875px;" width="36" height="52" viewBox="0 0 36 52"><path d="M3 17A15 15 0 1 1 33 17C33 26 25 28 25 35H11C11 28 3 26 3 17z" fill="#d8d89c" stroke="#4a5a50" stroke-width="1.6"/><path d="M11 38h14M11 42h14M13 46h10" stroke="#d8d8d0" stroke-width="2.200"/><path d="M18 8V26M9 17H27" stroke="#3c4440" stroke-width="5"/></svg>
<svg class="a" style="left:1296px;top:914px;" width="10" height="15" viewBox="0 0 10 15"><path d="M0 0V15L10 7.500z" fill="#8c8c8c"/></svg>
<svg class="a" style="left:1252px;top:936px;" width="46" height="56" viewBox="0 0 46 56"><ellipse cx="23" cy="44" rx="22" ry="7.500" fill="#0c0c0c" stroke="#c4c4bc" stroke-width="2"/><g transform="translate(5,0)"><path d="M3 17A15 15 0 1 1 33 17C33 26 25 28 25 35H11C11 28 3 26 3 17z" fill="#f4f4e4" stroke="#c4c4bc" stroke-width="2"/><path d="M11 38h14M11 42h14M13 46h10" stroke="#d8d8d0" stroke-width="2.200"/><path d="M18 8V26M9 17H27" stroke="#3c4440" stroke-width="5"/></g></svg>
<svg class="a" style="left:1296px;top:973px;" width="10" height="15" viewBox="0 0 10 15"><path d="M0 0V15L10 7.500z" fill="#8c8c8c"/></svg>
<div class="a" style="left:1247px;top:1002px;width:58px;height:58px;background:linear-gradient(#566a76,#9ba8ac);border:1px solid #7a8890"></div>
<svg class="a" style="left:1252px;top:1005px;" width="48" height="52" viewBox="0 0 48 52"><path d="M2 12L26 2L46 12V38L24 50L4 40z" fill="#f4f4f0" stroke="#333" stroke-width="1"/><path d="M14 7L26 2L36 7L25 12z M2 12L14 7L25 12L13 18z" fill="#1c1c1c"/><path d="M25 12L36 7L46 12L35 18z" fill="#f4f4f0"/><path d="M13 18L24 24V37L13 32z M4 27L13 32V45L4 40z" fill="#1c1c1c"/><path d="M24 24L35 18V31L24 37z" fill="#2c2c2c"/><path d="M35 31L46 25V38L35 44z" fill="#1c1c1c"/><path d="M24 37L35 31V44L24 50z" fill="#d8d8d4"/><path d="M35 18L46 12V25L35 31z" fill="#c4c4c0"/></svg>
<svg class="a" style="left:1296px;top:1046px;" width="10" height="15" viewBox="0 0 10 15"><path d="M0 0V15L10 7.500z" fill="#2c2c2c"/></svg>
<svg class="a" style="left:1248px;top:1067px;" width="56" height="40" viewBox="0 0 56 40"><path d="M2 8C8 2 20 6 22 14C24 22 12 26 6 20C2 16 0 12 2 8z M24 20C30 14 44 20 46 30C46 38 34 40 28 34C24 30 22 24 24 20z" fill="#111" stroke="#e4e4e0" stroke-width="2.500"/><path d="M22 14L26 18M46 30C52 30 54 34 50 36M4 8C10 0 24 2 32 14" fill="none" stroke="#e4e4e0" stroke-width="2.800"/></svg>
<svg class="a" style="left:1288px;top:1109px;" width="17" height="11" viewBox="0 0 17 11"><path d="M0 0H17L8.500 11z" fill="#8c8c8c"/></svg>
<svg class="a" style="left:1253px;top:1120px;" width="52" height="40" viewBox="0 0 52 40"><g transform="scale(.92)"><path d="M2 8C8 2 20 6 22 14C24 22 12 26 6 20C2 16 0 12 2 8z M24 20C30 14 44 20 46 30C46 38 34 40 28 34C24 30 22 24 24 20z" fill="#111" stroke="#e4e4e0" stroke-width="2.500"/><path d="M22 14L26 18M46 30C52 30 54 34 50 36M4 8C10 0 24 2 32 14" fill="none" stroke="#e4e4e0" stroke-width="2.800"/></g></svg>
<svg class="a" style="left:1251px;top:1148px;" width="32" height="28" viewBox="0 0 32 28"><rect x="1" y="1" width="30" height="26" rx="4" fill="#a8aaa6" stroke="#d8d8d4" stroke-width="1.500"/><path d="M9 6L24 14L9 22z" fill="#f4f4f0"/></svg>
<svg class="a" style="left:1296px;top:1164px;" width="10" height="15" viewBox="0 0 10 15"><path d="M0 0V15L10 7.500z" fill="#8c8c8c"/></svg>
<div class="a" style="left:1247px;top:1184px;width:58px;height:1px;background:#4c4c4c;"></div>
<svg class="a" style="left:1266px;top:1217px;" width="18" height="18" viewBox="0 0 18 18"><defs><radialGradient id="vp1" cx="0.4" cy="0.35" r="0.7"><stop offset="0" stop-color="#fff"/><stop offset="1" stop-color="#8c8c86"/></radialGradient></defs><circle cx="9" cy="9" r="8.500" fill="url(#vp1)"/></svg>
<svg class="a" style="left:1255px;top:1272px;" width="40" height="40" viewBox="0 0 40 40"><defs><radialGradient id="vp2" cx="0.4" cy="0.35" r="0.7"><stop offset="0" stop-color="#fff"/><stop offset="1" stop-color="#8c8c86"/></radialGradient></defs><circle cx="12" cy="28" r="11" fill="#2c2c2c"/><circle cx="12" cy="28" r="9" fill="url(#vp2)"/><path d="M12 28L36 4" stroke="#2c2c2c" stroke-width="6" stroke-linecap="round"/><path d="M12 28L36 4" stroke="#e4e4e0" stroke-width="3" stroke-linecap="round"/></svg>
<svg class="a" style="left:1257px;top:1335px;" width="36" height="38" viewBox="0 0 36 38"><defs><radialGradient id="vp3" cx="0.4" cy="0.35" r="0.7"><stop offset="0" stop-color="#fff"/><stop offset="1" stop-color="#8c8c86"/></radialGradient></defs><defs><linearGradient id="vnl" x1="1" y1="0" x2="0" y2="1"><stop offset="0" stop-color="#d0d0cc"/><stop offset="1" stop-color="#d0d0cc" stop-opacity="0"/></linearGradient></defs><path d="M24 10L30 14L2 38z" fill="url(#vnl)"/><circle cx="28" cy="8" r="7.500" fill="url(#vp3)"/></svg>
<svg class="a" style="left:1260px;top:1412px;" width="24" height="24" viewBox="0 0 24 24"><defs><radialGradient id="vp4" cx="0.4" cy="0.35" r="0.7"><stop offset="0" stop-color="#fff"/><stop offset="1" stop-color="#8c8c86"/></radialGradient></defs><circle cx="10" cy="14" r="9.500" fill="url(#vp4)" stroke="#2c2c2c" stroke-width="1"/></svg>
<div class="t" style="top:1400.7px;font-size:27px;line-height:27px;color:#ecece8;left:1267px;font-weight:bold;letter-spacing:-1px;text-shadow:0 0 3px #222,0 0 2px #222">12</div>
<svg class="a" style="left:1253px;top:1460px;" width="44" height="40" viewBox="0 0 44 40"><defs><radialGradient id="vp5" cx="0.4" cy="0.35" r="0.7"><stop offset="0" stop-color="#fff"/><stop offset="1" stop-color="#8c8c86"/></radialGradient></defs><path d="M2 24L32 12L42 34L20 38z" fill="#c8c8c4" stroke="#3a3a3a" stroke-width="1.500"/><path d="M2 24L32 12L36 20L10 30z" fill="#e8e8e4"/><path d="M24 26L34 2" stroke="#2c2c2c" stroke-width="6" stroke-linecap="round"/><path d="M24 26L34 2" stroke="#d8d8d4" stroke-width="3" stroke-linecap="round"/></svg>
<svg class="a" style="left:1253px;top:1535px;" width="44" height="30" viewBox="0 0 44 30"><path d="M2 14L30 4L42 26L22 28z" fill="#c8c8c4" stroke="#3a3a3a" stroke-width="1.500"/><path d="M2 14L30 4L34 12L10 20z" fill="#e8e8e4"/></svg>
<div class="t" style="top:1522.7px;font-size:27px;line-height:27px;color:#ecece8;left:1270px;font-weight:bold;letter-spacing:-1px;text-shadow:0 0 3px #222,0 0 2px #222">12</div>
<svg class="a" style="left:1251px;top:1580px;" width="50" height="52" viewBox="0 0 50 52"><path d="M5 47V5H46" fill="none" stroke="#c4c4bc" stroke-width="2"/><path d="M5 47C8 24 22 8 46 5" fill="none" stroke="#8c9088" stroke-width="3"/><circle cx="5" cy="5" r="4" fill="#e4e4dc"/><circle cx="46" cy="5" r="4" fill="#e4e4dc"/><circle cx="5" cy="47" r="4" fill="#e4e4dc"/></svg>
<svg class="a" style="left:1252px;top:1645px;" width="48" height="48" viewBox="0 0 48 48"><rect x="6" y="6" width="36" height="36" fill="#6a6e68" stroke="#2c2c2c" stroke-width="1"/><rect x="6" y="6" width="18" height="18" fill="#4a4e48"/><rect x="24" y="24" width="18" height="18" fill="#4a4e48"/><g fill="#f0f0e8" stroke="#2c2c2c" stroke-width="1"><circle cx="6" cy="6" r="5"/><circle cx="42" cy="6" r="5"/><circle cx="6" cy="42" r="5"/><circle cx="42" cy="42" r="5"/></g></svg>
<svg class="a" style="left:1253px;top:1708px;" width="44" height="40" viewBox="0 0 44 40"><defs><radialGradient id="vp6" cx="0.4" cy="0.35" r="0.7"><stop offset="0" stop-color="#fff"/><stop offset="1" stop-color="#8c8c86"/></radialGradient></defs><path d="M26 26L40 2M26 26L2 30" stroke="#2c2c2c" stroke-width="6" stroke-linecap="round"/><path d="M26 26L40 2M26 26L2 30" stroke="#e4e4e0" stroke-width="3" stroke-linecap="round"/><circle cx="26" cy="26" r="10" fill="url(#vp6)" stroke="#2c2c2c" stroke-width="1"/></svg>
<svg class="a" style="left:1271px;top:1764px;" width="10" height="8" viewBox="0 0 10 8"><path d="M0 0H10L5 8z" fill="#8c8c8c"/></svg>
<div class="a" style="left:1309px;top:208px;width:16px;height:1587px;background:#4a4a4a;border-left:1px solid #222;border-right:1px solid #333"></div>
<svg class="a" style="left:1313px;top:917px;" width="9" height="14" viewBox="0 0 9 14"><path d="M8 0V14L0 7z" fill="#8a8a8a"/></svg>
<svg class="a" style="left:1313px;top:1069px;" width="9" height="14" viewBox="0 0 9 14"><path d="M0 0V14L8 7z" fill="#8a8a8a"/></svg>
<div class="a" style="left:1325px;top:208px;width:1277px;height:47px;background:#2e2e2e;"></div>
<div class="a" style="left:1325px;top:255px;width:1277px;height:86px;background:linear-gradient(#4b4b4b,#3e3e3e);"></div>
<div class="a" style="left:1325px;top:208px;width:196px;height:48px;background:linear-gradient(#505050,#4b4b4b);border-left:1px solid #5a5a5a;border-top:1px solid #5a5a5a"></div>
<div class="t" style="top:220.0px;font-size:25.5px;line-height:25.5px;color:#cccccc;left:1342px;letter-spacing:0.12px;font-style:italic;">/obj/geo1</div>
<svg class="a" style="left:1492px;top:223px;" width="18" height="18" viewBox="0 0 18 18"><path d="M3.500 3.500L14.500 14.500M14.500 3.500L3.500 14.500" stroke="#dededa" stroke-width="4.2" stroke-linecap="round"/></svg>
<svg class="a" style="left:1535px;top:218px;" width="26" height="26" viewBox="0 0 26 26"><path d="M13 3v20M3 13h20" stroke="#dededa" stroke-width="5" stroke-linecap="round"/></svg>
<div class="a" style="left:2518px;top:221px;width:28px;height:22px;background:linear-gradient(135deg,#e4e4e0,#cfcfcb);"></div>
<svg class="a" style="left:2567px;top:223px;" width="22" height="16" viewBox="0 0 22 16"><path d="M1 1H21L11 15z" fill="#e0e0e0"/></svg>
<svg class="a" style="left:1334px;top:270px;" width="54" height="60" viewBox="0 0 54 60"><defs><linearGradient id="gbk" x1="0" y1="0" x2="0" y2="1"><stop offset="0" stop-color="#f2f2ee"/><stop offset="1" stop-color="#a9aaa6"/></linearGradient></defs><path d="M3 27L27 4V17H47V38H27V51z" fill="url(#gbk)" stroke="#2e3436" stroke-width="2" stroke-linejoin="round"/><path d="M44 46L54 52L44 59z" fill="#9a9a9a"/></svg>
<svg class="a" style="left:1396px;top:270px;" width="54" height="60" viewBox="0 0 54 60"><path d="M51 27L27 4V17H7V38H27V51z" fill="#5a5a58" stroke="#444" stroke-width="2" stroke-linejoin="round"/><path d="M46 48L52 52L46 57z" fill="#4a4a4a"/></svg>
<div class="a" style="left:1462px;top:268px;width:1002px;height:60px;background:#3d3d3d;border:1px solid #111;border-top:2px solid #111"></div>
<div class="a" style="left:2445px;top:270px;width:18px;height:57px;background:#2c2c2c;"></div>
<svg class="a" style="left:2446px;top:290px;" width="16" height="14" viewBox="0 0 16 14"><path d="M1 1H15L8 13z" fill="#6e6e6e"/></svg>
<svg class="a" style="left:1469px;top:270px;" width="52" height="58" viewBox="0 0 52 58"><rect x="3" y="22" width="46" height="34" rx="2" fill="#3d4a4e" stroke="#1a1e20" stroke-width="1.5"/><path d="M2 14L47 3L49 11L5 23z" fill="#2a2e30" stroke="#111" stroke-width="1"/><path d="M9 13.5l7-1.7 3 6-7 1.7zM23 10l7-1.7 3 6-7 1.7zM37 6.6l7-1.7 2.5 6-7 1.7z" fill="#d8dcdc"/><rect x="3" y="22" width="46" height="6" fill="#555e60"/><path d="M9 38H44M9 43H44M9 50H23" stroke="#dfe3e3" stroke-width="1.5"/><path d="M14 34v8M19 35v6M28 36v8M34 37v7M39 36v8" stroke="#dfe3e3" stroke-width="1.2"/></svg>
<div class="t" style="top:282.2px;font-size:30px;line-height:30px;color:#cccccc;left:1526px;letter-spacing:-0.88px;">obj</div>
<svg class="a" style="left:1568px;top:269px;" width="18" height="59" viewBox="0 0 18 59"><path d="M2 1L16 29L2 58" fill="none" stroke="#1c1c1c" stroke-width="1.6"/></svg>
<svg class="a" style="left:1592px;top:272px;" width="56" height="56" viewBox="0 0 56 56"><defs><linearGradient id="gcy" x1="0" y1="0" x2="1" y2="0"><stop offset="0" stop-color="#8fb0d8"/><stop offset="0.5" stop-color="#3d6aa8"/><stop offset="1" stop-color="#24467a"/></linearGradient><radialGradient id="grd" cx="0.4" cy="0.35" r="0.7"><stop offset="0" stop-color="#f07a60"/><stop offset="1" stop-color="#a81810"/></radialGradient><linearGradient id="gco" x1="0" y1="0" x2="1" y2="0"><stop offset="0" stop-color="#fff59a"/><stop offset="0.6" stop-color="#f0d020"/><stop offset="1" stop-color="#b89400"/></linearGradient></defs><path d="M2 8V38A11 5 0 0 0 24 38V8z" fill="url(#gcy)"/><ellipse cx="13" cy="8" rx="11" ry="5" fill="#a8c4e4" stroke="#5a80b4" stroke-width="1"/><circle cx="41" cy="30" r="13" fill="url(#grd)"/><path d="M27 18L13 48A14 6 0 0 0 41 48z" fill="url(#gco)" stroke="#8a7000" stroke-width="0.8"/></svg>
<div class="t" style="top:282.2px;font-size:30px;line-height:30px;color:#cccccc;left:1652px;letter-spacing:-2.18px;">geo1</div>
<svg class="a" style="left:2485px;top:272px;" width="50" height="52" viewBox="0 0 50 52"><ellipse cx="26" cy="46" rx="24" ry="4" fill="#2c2c2c"/><path d="M1 26L22 22V30z" fill="#f4f4f4"/><path d="M21 20h6v12h-6z" fill="#c8c8c8"/><path d="M27 12C31 18 31 34 27 40L36 36V16z" fill="#dcdcdc"/><rect x="34" y="18" width="9" height="16" fill="#b4b4b4"/><rect x="43" y="8" width="6" height="36" rx="1" fill="#e8e8e8" stroke="#777" stroke-width="1"/></svg>
<svg class="a" style="left:2541px;top:271px;" width="54" height="54" viewBox="0 0 54 54"><circle cx="27" cy="27" r="24" fill="none" stroke="#6f93c8" stroke-width="5"/><circle cx="27" cy="27" r="15" fill="none" stroke="#4a6a9c" stroke-width="2.5"/><circle cx="27" cy="28" r="6.5" fill="#3a6cc0"/><circle cx="26" cy="26" r="3" fill="#6a98e0"/></svg>
<div class="a" style="left:1325px;top:341px;width:1277px;height:2px;background:#1c1c1c;"></div>
<div class="a" style="left:1327px;top:343px;width:25px;height:64px;background:#444;border:1px solid #222;border-top:1px solid #555"></div>
<svg class="a" style="left:1331px;top:349px;" width="16" height="14" viewBox="0 0 16 14"><path d="M8 0L15 13H1z" fill="#000"/></svg>
<div class="a" style="left:1352px;top:343px;width:1250px;height:64px;background:#2e2e2e;border-left:1px solid #1c1c1c;border-top:1px solid #1c1c1c"></div>
<div class="a" style="left:1325px;top:407px;width:1277px;height:1px;background:#101010;"></div>
<div class="t" style="top:361.2px;font-size:30px;line-height:30px;color:#cccccc;left:1416px;letter-spacing:-0.19px;">Add</div>
<div class="t" style="top:361.2px;font-size:30px;line-height:30px;color:#cccccc;left:1507px;letter-spacing:0.15px;">Edit</div>
<div class="t" style="top:361.2px;font-size:30px;line-height:30px;color:#cccccc;left:1598px;letter-spacing:-1.81px;">Go</div>
<div class="t" style="top:361.2px;font-size:30px;line-height:30px;color:#cccccc;left:1671px;letter-spacing:-0.12px;">View</div>
<div class="t" style="top:361.2px;font-size:30px;line-height:30px;color:#cccccc;left:1772px;letter-spacing:0.87px;">Tools</div>
<div class="t" style="top:361.2px;font-size:30px;line-height:30px;color:#cccccc;left:1884px;letter-spacing:0.37px;">Layout</div>
<div class="t" style="top:361.2px;font-size:30px;line-height:30px;color:#cccccc;left:2014px;letter-spacing:0.23px;">Help</div>
<svg class="a" style="left:1370px;top:369px;" width="10" height="10" viewBox="0 0 10 10"><path d="M9 0V10L0 5z" fill="#343434"/></svg>
<svg class="a" style="left:2574px;top:369px;" width="10" height="10" viewBox="0 0 10 10"><path d="M0 0V10L9 5z" fill="#666"/></svg>
<svg class="a" style="left:2101px;top:349px;" width="54" height="52" viewBox="0 0 54 52"><path d="M7 46L24 28" stroke="#1c1c1c" stroke-width="9" stroke-linecap="round"/><path d="M6 45L22 28" stroke="#6a6a6a" stroke-width="2.500" stroke-linecap="round"/><path d="M25 27L44 7" stroke="#e4e4e0" stroke-width="4.500"/><path d="M42 4L50 2L48 10L44 12L40 8z" fill="#e4e4e0" stroke="#555" stroke-width="0.800"/><path d="M8 4a11 11 0 0 0 12 16L42 44a5 5 0 0 0 7-7L26 14A11 11 0 0 0 12 1l7 8-2 7-8 1z" fill="#d8d8d4" stroke="#3a3a3a" stroke-width="1.200"/><circle cx="45" cy="41" r="2.600" fill="#555" stroke="#eee" stroke-width="1"/></svg>
<svg class="a" style="left:2169px;top:349px;" width="38" height="52" viewBox="0 0 38 52"><rect x="1" y="2" width="11" height="11" fill="#ececea"/><path d="M7 13V44H20M7 21H20M7 33H20" stroke="#b4b8b0" stroke-width="3" fill="none"/><rect x="20" y="15" width="14" height="10" fill="#c2c5be"/><rect x="20" y="27" width="14" height="10" fill="#c2c5be"/><rect x="20" y="39" width="14" height="10" fill="#a8aca4"/></svg>
<svg class="a" style="left:2226px;top:349px;" width="44" height="52" viewBox="0 0 44 52"><rect x="1" y="1" width="42" height="48" fill="#c2c5be" stroke="#2a2a2a" stroke-width="1.500"/><rect x="2" y="8" width="40" height="7" fill="#ececea"/><rect x="2" y="22" width="40" height="7" fill="#ececea"/><rect x="2" y="36" width="40" height="7" fill="#ececea"/><path d="M2 49.500H44V3" stroke="#0c0c0c" stroke-width="2" fill="none"/></svg>
<svg class="a" style="left:2283px;top:349px;" width="46" height="52" viewBox="0 0 46 52"><rect x="1" y="2" width="44" height="46" fill="#e8e8e8" stroke="#777" stroke-width="1.5"/><rect x="5" y="6" width="10" height="10" fill="#c81010"/><rect x="18" y="6" width="10" height="10" fill="#f08010"/><rect x="31" y="6" width="10" height="10" fill="#e8c810"/><rect x="5" y="20" width="10" height="10" fill="#1a3c8c"/><rect x="18" y="20" width="10" height="10" fill="#50b830"/><rect x="31" y="20" width="10" height="10" fill="#6a9ad8"/><rect x="5" y="34" width="10" height="10" fill="#101010"/><rect x="18" y="34" width="10" height="10" fill="#888"/><rect x="31" y="34" width="10" height="10" fill="#c0c0c0"/></svg>
<svg class="a" style="left:2344px;top:349px;" width="48" height="52" viewBox="0 0 48 52"><rect x="2" y="3" width="44" height="44" fill="#3a3a3a" stroke="#8c8c8c" stroke-width="3"/><rect x="9" y="10" width="10" height="7" fill="#c8c8c8"/><ellipse cx="33" cy="13" rx="7" ry="4" fill="#c8c8c8"/><path d="M8 30L22 24V36z" fill="#c8c8c8"/><rect x="28" y="27" width="11" height="6" fill="#c8c8c8"/><path d="M27 42L35 36L43 42z" fill="#c8c8c8"/><rect x="8" y="39" width="10" height="4" fill="#c8c8c8"/></svg>
<svg class="a" style="left:2402px;top:349px;" width="50" height="52" viewBox="0 0 50 52"><rect x="1" y="2" width="48" height="46" fill="#dcdcdc" stroke="#555" stroke-width="2"/><rect x="1" y="2" width="48" height="7" fill="#8c8c8c"/><rect x="7" y="15" width="22" height="11" fill="#e8e8e8" stroke="#1a1a1a" stroke-width="3"/><rect x="20" y="32" width="22" height="11" fill="#e8e8e8" stroke="#1a1a1a" stroke-width="3"/></svg>
<svg class="a" style="left:2461px;top:349px;" width="50" height="52" viewBox="0 0 50 52"><path d="M3 2H49V30C49 42 40 49 26 49H2z" fill="#e8d44a" stroke="#a89420" stroke-width="1.5"/><path d="M49 30C44 34 36 32 34 36C33 42 32 47 26 49C40 49 49 42 49 30z" fill="#f8f0a0"/><path d="M10 13H40M10 20H40M10 27H28" stroke="#1a1a1a" stroke-width="3"/></svg>
<svg class="a" style="left:2521px;top:349px;" width="38" height="52" viewBox="0 0 38 52"><rect x="1" y="2" width="36" height="44" fill="#5aa0e0" stroke="#d8d8d8" stroke-width="2"/><circle cx="13" cy="14" r="6" fill="#f0e040"/><path d="M2 45L14 28L22 38L30 24L37 34V45z" fill="#7ac8b8"/><rect x="31" y="38" width="7" height="7" fill="#fff" stroke="#111" stroke-width="2"/></svg>
<div class="a" style="left:1325px;top:408px;width:1277px;height:1385px;background:#2f2f2f;"></div>
<div class="t" style="top:449.0px;font-size:61px;line-height:61px;color:#4b4b4b;left:2300px;letter-spacing:-0.97px;font-weight:bold;">Geometry</div>
<div class="a" style="left:2601px;top:208px;width:17px;height:1587px;background:#4a4a4a;border-left:1px solid #222;border-right:1px solid #222"></div>
<svg class="a" style="left:2605px;top:917px;" width="9" height="14" viewBox="0 0 9 14"><path d="M8 0V14L0 7z" fill="#8a8a8a"/></svg>
<svg class="a" style="left:2605px;top:1069px;" width="9" height="14" viewBox="0 0 9 14"><path d="M0 0V14L8 7z" fill="#8a8a8a"/></svg>
<div class="a" style="left:2608px;top:974px;width:5px;height:50px;background:repeating-linear-gradient(#333 0 1px,transparent 1px 3px)"></div>
<div class="a" style="left:1316px;top:974px;width:5px;height:50px;background:repeating-linear-gradient(#333 0 1px,transparent 1px 3px)"></div>
<svg class="a" style="left:1325px;top:408px;" width="1277" height="1385" viewBox="0 0 1277 1385"><circle cx="377.5" cy="290" r="83" fill="#41659c"/><circle cx="377.5" cy="290" r="53" fill="#9572cf"/><path d="M377.5 329L333 506" stroke="#5b87c4" stroke-width="1.6"/><circle cx="377.5" cy="251" r="7.6" fill="#b6b6b6"/><circle cx="377.5" cy="329" r="7.6" fill="#b6b6b6"/><rect x="294.0" y="265" width="167" height="50" rx="7" fill="#d2d2d2"/><path d="M321.0 266L313.0 314" stroke="#8a8a8a" stroke-width="1"/><path d="M345.0 266L337.0 314" stroke="#8a8a8a" stroke-width="1"/><path d="M419.0 266L411.0 314" stroke="#8a8a8a" stroke-width="1"/><path d="M443.0 266L435.0 314" stroke="#8a8a8a" stroke-width="1"/><path d="M441.5 265H454.5a6.5 6.5 0 0 1 6.5 6.5V308.5a6.5 6.5 0 0 1 -6.5 6.5H435.5z" fill="#00aaf0"/><defs><radialGradient id="nsp" cx="0.42" cy="0.35" r="0.7"><stop offset="0" stop-color="#f4f6f8"/><stop offset="0.55" stop-color="#8e9aa4"/><stop offset="1" stop-color="#3c464e"/></radialGradient></defs><ellipse cx="379.5" cy="308" rx="15" ry="3" fill="#999"/><circle cx="377.5" cy="289" r="19" fill="url(#nsp)" stroke="#3a444c" stroke-width="1"/><path d="M333 585V655" stroke="#5a76a4" stroke-width="1.6"/><path d="M377.5 585V655" stroke="#c062bc" stroke-width="1.8"/><path d="M422 585V655" stroke="#4f78b0" stroke-width="1.4" stroke-dasharray="2 3"/><path d="M333 734V897" stroke="#5a76a4" stroke-width="1.6"/><path d="M377.5 734V897" stroke="#c062bc" stroke-width="1.8"/><path d="M422 734V897" stroke="#4f78b0" stroke-width="1.4" stroke-dasharray="2 3"/><circle cx="333.0" cy="506" r="7.6" fill="#b6b6b6"/><circle cx="377.5" cy="506" r="7.6" fill="#e06ad8"/><circle cx="422.0" cy="506" r="7.6" fill="#b6b6b6"/><circle cx="333.0" cy="585" r="7.6" fill="#b6b6b6"/><circle cx="377.5" cy="585" r="7.6" fill="#e06ad8"/><circle cx="422.0" cy="585" r="7.6" fill="#b6b6b6"/><rect x="294.0" y="520" width="167" height="51" rx="7" fill="#d2d2d2"/><path d="M321.0 521L313.0 570" stroke="#8a8a8a" stroke-width="1"/><path d="M345.0 521L337.0 570" stroke="#8a8a8a" stroke-width="1"/><path d="M419.0 521L411.0 570" stroke="#8a8a8a" stroke-width="1"/><path d="M443.0 521L435.0 570" stroke="#8a8a8a" stroke-width="1"/><g transform="translate(357.5,525)"><path d="M2 38L18 22" stroke="#555" stroke-width="2.5"/><path d="M3 37L9 29" stroke="#999" stroke-width="1.5"/><ellipse cx="20" cy="22" rx="11" ry="7" transform="rotate(-40 20 22)" fill="#1a8a98"/><path d="M14 14L26 6L36 16L28 28z" fill="#2ab4c4"/><ellipse cx="31" cy="9" rx="9" ry="5.5" transform="rotate(40 31 9)" fill="#5ad8e4"/><ellipse cx="31" cy="8.5" rx="5" ry="2.5" transform="rotate(40 31 9)" fill="#a8f0f4"/></g><circle cx="333.0" cy="655" r="7.6" fill="#b6b6b6"/><circle cx="377.5" cy="655" r="7.6" fill="#e06ad8"/><circle cx="422.0" cy="655" r="7.6" fill="#b6b6b6"/><circle cx="333.0" cy="734" r="7.6" fill="#b6b6b6"/><circle cx="377.5" cy="734" r="7.6" fill="#e06ad8"/><circle cx="422.0" cy="734" r="7.6" fill="#b6b6b6"/><rect x="294.0" y="669" width="167" height="51" rx="7" fill="#d2d2d2"/><path d="M321.0 670L313.0 719" stroke="#8a8a8a" stroke-width="1"/><path d="M345.0 670L337.0 719" stroke="#8a8a8a" stroke-width="1"/><path d="M419.0 670L411.0 719" stroke="#8a8a8a" stroke-width="1"/><path d="M443.0 670L435.0 719" stroke="#8a8a8a" stroke-width="1"/><g transform="translate(357.5,674)"><path d="M2 38L18 22" stroke="#555" stroke-width="2.5"/><path d="M3 37L9 29" stroke="#999" stroke-width="1.5"/><ellipse cx="20" cy="22" rx="11" ry="7" transform="rotate(-40 20 22)" fill="#1a8a98"/><path d="M14 14L26 6L36 16L28 28z" fill="#2ab4c4"/><ellipse cx="31" cy="9" rx="9" ry="5.5" transform="rotate(40 31 9)" fill="#5ad8e4"/><ellipse cx="31" cy="8.5" rx="5" ry="2.5" transform="rotate(40 31 9)" fill="#a8f0f4"/></g><rect x="302.5" y="921" width="168" height="50" rx="7" fill="#bfe9a6"/><circle cx="333.0" cy="897" r="7.6" fill="#b6b6b6"/><circle cx="377.5" cy="897" r="7.6" fill="#e06ad8"/><circle cx="422.0" cy="897" r="7.6" fill="#b6b6b6"/><circle cx="333.0" cy="976" r="7.6" fill="#b6b6b6"/><circle cx="377.5" cy="976" r="7.6" fill="#e06ad8"/><circle cx="422.0" cy="976" r="7.6" fill="#b6b6b6"/><rect x="291.5" y="909" width="172" height="55" rx="9" fill="#f0c8c8" stroke="#8a5a5a" stroke-width="1"/><rect x="294.5" y="912" width="166" height="49" rx="6" fill="#b6e68c" stroke="#222" stroke-width="1.6"/><path d="M321.5 913L313.5 960" stroke="#6a8a54" stroke-width="1"/><path d="M345.5 913L337.5 960" stroke="#6a8a54" stroke-width="1"/><path d="M419.5 913L411.5 960" stroke="#6a8a54" stroke-width="1"/><path d="M443.5 913L435.5 960" stroke="#6a8a54" stroke-width="1"/><g transform="translate(356.5,920)"><g transform="scale(.74) translate(2,0)"><ellipse cx="30" cy="44" rx="18" ry="4" fill="#222" opacity=".6"/><path d="M22 38C18 24 28 12 40 12C52 12 56 22 54 30C52 40 44 44 36 44C30 44 24 44 22 38z" fill="#f4a6a6" stroke="#c86a6a" stroke-width="1"/><path d="M28 36c3-6 8-2 10-8M33 41c4-5 9-3 13-9M30 26c4 1 6-4 10-3M38 32c3-2 6 0 9-3M42 18c2 3 6 2 8 5M34 18c2 2 5 1 7 3" stroke="#fbe4e4" stroke-width="1.600" fill="none"/><path d="M1 48C10 30 18 8 38 4C46 4 52 8 54 16C46 10 38 12 32 18C26 24 24 34 18 44L8 49z" fill="#a9dce2" stroke="#6fb2bc" stroke-width="1"/><path d="M6 46C14 32 22 12 38 6" fill="none" stroke="#e4f6f8" stroke-width="2"/></g></g><g transform="translate(486,571)"><path d="M5 12V7a6 6 0 0 1 12 0V12" fill="none" stroke="#66706e" stroke-width="3"/><rect x="1" y="11" width="20" height="14" rx="2" fill="#66706e"/></g><g transform="translate(486,721)"><path d="M5 12V7a6 6 0 0 1 12 0V12" fill="none" stroke="#66706e" stroke-width="3"/><rect x="1" y="11" width="20" height="14" rx="2" fill="#66706e"/></g><g transform="translate(486,963)"><path d="M5 12V7a6 6 0 0 1 12 0V12" fill="none" stroke="#66706e" stroke-width="3"/><rect x="1" y="11" width="20" height="14" rx="2" fill="#66706e"/></g></svg>
<div class="t" style="top:681.0px;font-size:35px;line-height:35px;color:#d0d0d0;left:1803px;letter-spacing:-0.64px;">sphere1</div>
<div class="t" style="top:903.1px;font-size:29px;line-height:29px;color:#6c6c6c;left:1803px;letter-spacing:0.79px;">Vellum Constraints</div>
<div class="t" style="top:936.0px;font-size:35px;line-height:35px;color:#d0d0d0;left:1803px;letter-spacing:0.46px;">vellumcloth1</div>
<div class="t" style="top:1018.4px;font-size:31px;line-height:31px;color:#6a9fdc;left:1803px;letter-spacing:0.30px;">cloth</div>
<div class="t" style="top:1052.1px;font-size:29px;line-height:29px;color:#6c6c6c;left:1803px;letter-spacing:0.79px;">Vellum Constraints</div>
<div class="t" style="top:1085.0px;font-size:35px;line-height:35px;color:#d0d0d0;left:1803px;letter-spacing:-0.05px;">vellumpressure1</div>
<div class="t" style="top:1167.4px;font-size:31px;line-height:31px;color:#6a9fdc;left:1803px;letter-spacing:-0.58px;">pressure</div>
<div class="t" style="top:1326.0px;font-size:35px;line-height:35px;color:#d0d0d0;left:1803px;letter-spacing:0.08px;">vellumsolver1</div>
<div class="a" style="left:2618px;top:208px;width:1222px;height:47px;background:#2e2e2e;"></div>
<div class="a" style="left:2618px;top:255px;width:1222px;height:86px;background:linear-gradient(#4b4b4b,#3e3e3e);"></div>
<div class="a" style="left:2618px;top:208px;width:237px;height:48px;background:linear-gradient(#505050,#4b4b4b);border-left:1px solid #5a5a5a;border-top:1px solid #5a5a5a"></div>
<div class="t" style="top:220.0px;font-size:25.5px;line-height:25.5px;color:#cccccc;left:2634px;letter-spacing:-0.51px;font-style:italic;">vellumsolver1</div>
<svg class="a" style="left:2826px;top:223px;" width="18" height="18" viewBox="0 0 18 18"><path d="M3.500 3.500L14.500 14.500M14.500 3.500L3.500 14.500" stroke="#dededa" stroke-width="4.2" stroke-linecap="round"/></svg>
<div class="a" style="left:2855px;top:208px;width:188px;height:46px;background:#303030;border-left:2px solid #242424;border-right:1px solid #1c1c1c;border-bottom:2px solid #242424"></div>
<div class="t" style="top:220.0px;font-size:25.5px;line-height:25.5px;color:#cccccc;left:2872px;letter-spacing:-0.33px;">Take List</div>
<svg class="a" style="left:3014px;top:223px;" width="18" height="18" viewBox="0 0 18 18"><path d="M3.500 3.500L14.500 14.500M14.500 3.500L3.500 14.500" stroke="#dededa" stroke-width="4.2" stroke-linecap="round"/></svg>
<div class="a" style="left:3043px;top:208px;width:309px;height:46px;background:#303030;border-left:2px solid #242424;border-right:1px solid #1c1c1c;border-bottom:2px solid #242424"></div>
<div class="t" style="top:220.0px;font-size:25.5px;line-height:25.5px;color:#cccccc;left:3060px;letter-spacing:-0.11px;">Performance Monitor</div>
<svg class="a" style="left:3323px;top:223px;" width="18" height="18" viewBox="0 0 18 18"><path d="M3.500 3.500L14.500 14.500M14.500 3.500L3.500 14.500" stroke="#dededa" stroke-width="4.2" stroke-linecap="round"/></svg>
<svg class="a" style="left:3365px;top:218px;" width="26" height="26" viewBox="0 0 26 26"><path d="M13 3v20M3 13h20" stroke="#dededa" stroke-width="5" stroke-linecap="round"/></svg>
<div class="a" style="left:3758px;top:221px;width:28px;height:22px;background:linear-gradient(135deg,#e4e4e0,#cfcfcb);"></div>
<svg class="a" style="left:3806px;top:223px;" width="22" height="16" viewBox="0 0 22 16"><path d="M1 1H21L11 15z" fill="#e0e0e0"/></svg>
<svg class="a" style="left:2626px;top:270px;" width="54" height="60" viewBox="0 0 54 60"><defs><linearGradient id="gbk" x1="0" y1="0" x2="0" y2="1"><stop offset="0" stop-color="#f2f2ee"/><stop offset="1" stop-color="#a9aaa6"/></linearGradient></defs><path d="M3 27L27 4V17H47V38H27V51z" fill="url(#gbk)" stroke="#2e3436" stroke-width="2" stroke-linejoin="round"/><path d="M44 46L54 52L44 59z" fill="#9a9a9a"/></svg>
<svg class="a" style="left:2688px;top:270px;" width="54" height="60" viewBox="0 0 54 60"><path d="M51 27L27 4V17H7V38H27V51z" fill="#5a5a58" stroke="#444" stroke-width="2" stroke-linejoin="round"/><path d="M46 48L52 52L46 57z" fill="#4a4a4a"/></svg>
<div class="a" style="left:2754px;top:268px;width:950px;height:60px;background:#3d3d3d;border:1px solid #111;border-top:2px solid #111"></div>
<div class="a" style="left:3685px;top:270px;width:18px;height:57px;background:#2c2c2c;"></div>
<svg class="a" style="left:3686px;top:290px;" width="16" height="14" viewBox="0 0 16 14"><path d="M1 1H15L8 13z" fill="#6e6e6e"/></svg>
<svg class="a" style="left:2761px;top:270px;" width="52" height="58" viewBox="0 0 52 58"><rect x="3" y="22" width="46" height="34" rx="2" fill="#3d4a4e" stroke="#1a1e20" stroke-width="1.5"/><path d="M2 14L47 3L49 11L5 23z" fill="#2a2e30" stroke="#111" stroke-width="1"/><path d="M9 13.5l7-1.7 3 6-7 1.7zM23 10l7-1.7 3 6-7 1.7zM37 6.6l7-1.7 2.5 6-7 1.7z" fill="#d8dcdc"/><rect x="3" y="22" width="46" height="6" fill="#555e60"/><path d="M9 38H44M9 43H44M9 50H23" stroke="#dfe3e3" stroke-width="1.5"/><path d="M14 34v8M19 35v6M28 36v8M34 37v7M39 36v8" stroke="#dfe3e3" stroke-width="1.2"/></svg>
<div class="t" style="top:282.2px;font-size:30px;line-height:30px;color:#cccccc;left:2818px;letter-spacing:-0.88px;">obj</div>
<svg class="a" style="left:2860px;top:269px;" width="18" height="59" viewBox="0 0 18 59"><path d="M2 1L16 29L2 58" fill="none" stroke="#1c1c1c" stroke-width="1.6"/></svg>
<svg class="a" style="left:2884px;top:272px;" width="56" height="56" viewBox="0 0 56 56"><defs><linearGradient id="gcy" x1="0" y1="0" x2="1" y2="0"><stop offset="0" stop-color="#8fb0d8"/><stop offset="0.5" stop-color="#3d6aa8"/><stop offset="1" stop-color="#24467a"/></linearGradient><radialGradient id="grd" cx="0.4" cy="0.35" r="0.7"><stop offset="0" stop-color="#f07a60"/><stop offset="1" stop-color="#a81810"/></radialGradient><linearGradient id="gco" x1="0" y1="0" x2="1" y2="0"><stop offset="0" stop-color="#fff59a"/><stop offset="0.6" stop-color="#f0d020"/><stop offset="1" stop-color="#b89400"/></linearGradient></defs><path d="M2 8V38A11 5 0 0 0 24 38V8z" fill="url(#gcy)"/><ellipse cx="13" cy="8" rx="11" ry="5" fill="#a8c4e4" stroke="#5a80b4" stroke-width="1"/><circle cx="41" cy="30" r="13" fill="url(#grd)"/><path d="M27 18L13 48A14 6 0 0 0 41 48z" fill="url(#gco)" stroke="#8a7000" stroke-width="0.8"/></svg>
<div class="t" style="top:282.2px;font-size:30px;line-height:30px;color:#cccccc;left:2944px;letter-spacing:-2.18px;">geo1</div>
<svg class="a" style="left:3722px;top:272px;" width="50" height="52" viewBox="0 0 50 52"><ellipse cx="26" cy="46" rx="24" ry="4" fill="#2c2c2c"/><path d="M1 26L22 22V30z" fill="#f4f4f4"/><path d="M21 20h6v12h-6z" fill="#c8c8c8"/><path d="M27 12C31 18 31 34 27 40L36 36V16z" fill="#dcdcdc"/><rect x="34" y="18" width="9" height="16" fill="#b4b4b4"/><rect x="43" y="8" width="6" height="36" rx="1" fill="#e8e8e8" stroke="#777" stroke-width="1"/></svg>
<svg class="a" style="left:3779px;top:271px;" width="54" height="54" viewBox="0 0 54 54"><circle cx="27" cy="27" r="24" fill="none" stroke="#6f93c8" stroke-width="5"/><circle cx="27" cy="27" r="15" fill="none" stroke="#4a6a9c" stroke-width="2.5"/><circle cx="27" cy="28" r="6.5" fill="#3a6cc0"/><circle cx="26" cy="26" r="3" fill="#6a98e0"/></svg>
<div class="a" style="left:2618px;top:341px;width:1222px;height:2px;background:#1c1c1c;"></div>
<svg class="a" style="left:2626px;top:357px;" width="50" height="43" viewBox="0 0 56 50"><ellipse cx="30" cy="44" rx="18" ry="4" fill="#222" opacity=".6"/><path d="M22 38C18 24 28 12 40 12C52 12 56 22 54 30C52 40 44 44 36 44C30 44 24 44 22 38z" fill="#f4a6a6" stroke="#c86a6a" stroke-width="1"/><path d="M28 36c3-6 8-2 10-8M33 41c4-5 9-3 13-9M30 26c4 1 6-4 10-3M38 32c3-2 6 0 9-3M42 18c2 3 6 2 8 5M34 18c2 2 5 1 7 3" stroke="#fbe4e4" stroke-width="1.600" fill="none"/><path d="M1 48C10 30 18 8 38 4C46 4 52 8 54 16C46 10 38 12 32 18C26 24 24 34 18 44L8 49z" fill="#a9dce2" stroke="#6fb2bc" stroke-width="1"/><path d="M6 46C14 32 22 12 38 6" fill="none" stroke="#e4f6f8" stroke-width="2"/></svg>
<svg class="a" style="left:2664px;top:395px;" width="18" height="10" viewBox="0 0 18 10"><path d="M0 0H18L9 10z" fill="#8a8a8a"/></svg>
<div class="t" style="top:362.5px;font-size:28.5px;line-height:28.5px;color:#d4d4d4;left:2683px;letter-spacing:-0.56px;font-weight:bold;">Vellum Solver</div>
<div class="a" style="left:2875px;top:354px;width:661px;height:44px;background:#101010;border:2px solid #2c2c2c;border-bottom-color:#444;border-right-color:#444"></div>
<div class="t m" style="top:362.1px;font-size:29px;line-height:29px;color:#e0e0e0;left:2881px;letter-spacing:0px">vellumsolver1</div>
<svg class="a" style="left:3540px;top:350px;" width="52" height="56" viewBox="0 0 52 56"><g transform="translate(25,26) rotate(22.5)"><g fill="#dcdcd8" stroke="#2a2a2a" stroke-width="1"><rect x="-5" y="-25" width="10" height="16" rx="5" transform="rotate(0)"/><rect x="-5" y="-25" width="10" height="16" rx="5" transform="rotate(45)"/><rect x="-5" y="-25" width="10" height="16" rx="5" transform="rotate(90)"/><rect x="-5" y="-25" width="10" height="16" rx="5" transform="rotate(135)"/><rect x="-5" y="-25" width="10" height="16" rx="5" transform="rotate(180)"/><rect x="-5" y="-25" width="10" height="16" rx="5" transform="rotate(225)"/><rect x="-5" y="-25" width="10" height="16" rx="5" transform="rotate(270)"/><rect x="-5" y="-25" width="10" height="16" rx="5" transform="rotate(315)"/></g><circle r="15" fill="#dcdcd8"/><circle r="7" fill="#3a3a3a"/></g><path d="M34 46H52L43 56z" fill="#8a8a8a"/></svg>
<svg class="a" style="left:3599px;top:350px;" width="56" height="56" viewBox="0 0 56 56"><text x="3" y="47" font-family="Liberation Sans, sans-serif" font-weight="bold" font-style="italic" font-size="57" fill="#0a1c40" stroke="#f0f0f0" stroke-width="6.500" stroke-linejoin="miter" paint-order="stroke">H</text><path d="M38 46H56L47 56z" fill="#8a8a8a"/></svg>
<svg class="a" style="left:3660px;top:350px;" width="54" height="54" viewBox="0 0 54 54"><defs><radialGradient id="mgl" cx="0.45" cy="0.4" r="0.6"><stop offset="0" stop-color="#70808a"/><stop offset="1" stop-color="#48545c"/></radialGradient></defs><circle cx="21" cy="21" r="16" fill="url(#mgl)" stroke="#2c3438" stroke-width="7"/><circle cx="21" cy="21" r="16" fill="none" stroke="#deded8" stroke-width="5"/><path d="M33 33L47 48" stroke="#deded8" stroke-width="6.500" stroke-linecap="round"/></svg>
<svg class="a" style="left:3722px;top:349px;" width="48" height="48" viewBox="0 0 48 48"><circle cx="24" cy="24" r="21" fill="#2f373b" stroke="#deded8" stroke-width="4"/><text x="24" y="37" font-family="Liberation Serif, serif" font-style="italic" font-size="40" fill="#deded8" text-anchor="middle">i</text></svg>
<svg class="a" style="left:3781px;top:349px;" width="48" height="48" viewBox="0 0 48 48"><circle cx="24" cy="24" r="21" fill="#2a3236" stroke="#deded8" stroke-width="4"/><text x="24" y="36" font-family="Liberation Sans, sans-serif" font-weight="bold" font-size="34" fill="#e4e4e0" text-anchor="middle">?</text></svg>
<div class="a" style="left:2622px;top:406px;width:1214px;height:3px;background:#111;border-bottom:1px solid #4a4a4a"></div>
<div class="a" style="left:2964px;top:417px;width:298px;height:57px;background:linear-gradient(#595959,#474747);border:1px solid #222;border-top:1px solid #6c6c6c;border-left:1px solid #666;box-shadow:1px 1px 0 #222"></div>
<div class="t" style="top:431.9px;font-size:28px;line-height:28px;color:#cccccc;left:2963.901390625px;width:298px;text-align:center;letter-spacing:-0.20px;">Reset Simulation</div>
<div class="t" style="top:492.9px;font-size:28px;line-height:28px;color:#cccccc;left:2335.6538522727274px;width:600px;text-align:right;letter-spacing:-0.35px;">Start Frame</div>
<div class="a" style="left:2963px;top:481px;width:194px;height:54px;background:#131313;border:2px solid #2b2b2b;border-bottom-color:#484848;border-right-color:#484848"></div>
<div class="t m" style="top:494.1px;font-size:29px;line-height:29px;color:#e4e4e4;left:2970px;">1</div>
<div class="a" style="left:3166px;top:505px;width:668px;height:4px;background:#0c0c0c;border-bottom:1px solid #555"></div>
<div class="a" style="left:3166px;top:512px;width:668px;height:4px;background:repeating-linear-gradient(90deg,#7a7a7a 0 1px,transparent 1px 14.500px)"></div>
<div class="a" style="left:3160px;top:480.0px;width:6px;height:54px;background:linear-gradient(90deg,#b4b4b4,#7c7c7c);border:1px solid #333"></div>
<div class="a" style="left:2623px;top:540px;width:117px;height:53px;background:linear-gradient(#4a4a4a,#3a3a3a);border-left:1px solid #5a5a5a;border-top:1px solid #5a5a5a"></div>
<div class="t" style="top:551.9px;font-size:28px;line-height:28px;color:#cccccc;left:2640.5px;letter-spacing:-0.46px;">Solver</div>
<div class="a" style="left:2740px;top:540px;width:120px;height:52px;background:linear-gradient(#525252,#3e3e3e);border:1px solid #1c1c1c;border-top:1px solid #666"></div>
<div class="t" style="top:551.9px;font-size:28px;line-height:28px;color:#cccccc;left:2757.5px;letter-spacing:-0.78px;">Forces</div>
<div class="a" style="left:2860px;top:540px;width:175px;height:52px;background:linear-gradient(#525252,#3e3e3e);border:1px solid #1c1c1c;border-top:1px solid #666"></div>
<div class="t" style="top:551.9px;font-size:28px;line-height:28px;color:#cccccc;left:2877.5px;letter-spacing:0.36px;">Simulation</div>
<div class="a" style="left:3035px;top:540px;width:163px;height:52px;background:linear-gradient(#525252,#3e3e3e);border:1px solid #1c1c1c;border-top:1px solid #666"></div>
<div class="t" style="top:551.9px;font-size:28px;line-height:28px;color:#cccccc;left:3052.5px;letter-spacing:-0.40px;">Advanced</div>
<div class="a" style="left:3198px;top:540px;width:148px;height:52px;background:linear-gradient(#525252,#3e3e3e);border:1px solid #1c1c1c;border-top:1px solid #666"></div>
<div class="t" style="top:551.9px;font-size:28px;line-height:28px;color:#cccccc;left:3215.5px;letter-spacing:-0.42px;">Visualize</div>
<div class="a" style="left:2623px;top:592px;width:1213px;height:1074px;border:1px solid #111;border-top:1px solid #555;border-left:1px solid #4c4c4c"></div>
<div class="a" style="left:2623px;top:592px;width:117px;height:2px;background:#3a3a3a;"></div>
<div class="t" style="top:616.9px;font-size:28px;line-height:28px;color:#cccccc;left:2348.43970625px;width:600px;text-align:right;letter-spacing:-0.56px;">Time Scale</div>
<div class="a" style="left:2977px;top:606px;width:190px;height:53px;background:#131313;border:2px solid #2b2b2b;border-bottom-color:#484848;border-right-color:#484848"></div>
<div class="t m" style="top:618.6px;font-size:29px;line-height:29px;color:#e4e4e4;left:2984px;">1</div>
<div class="a" style="left:3175px;top:630px;width:647px;height:4px;background:#0c0c0c;border-bottom:1px solid #555"></div>
<div class="a" style="left:3175px;top:630px;width:323px;height:4px;background:#2a5cb8;border-top:1px solid #142c60;border-bottom:1px solid #142c60"></div>
<div class="a" style="left:3495px;top:605.5px;width:6px;height:53px;background:linear-gradient(90deg,#b4b4b4,#7c7c7c);border:1px solid #333"></div>
<div class="t" style="top:676.9px;font-size:28px;line-height:28px;color:#cccccc;left:2348.3694140625px;width:600px;text-align:right;letter-spacing:-0.63px;">Substeps</div>
<div class="a" style="left:2977px;top:666px;width:190px;height:53px;background:#131313;border:2px solid #2b2b2b;border-bottom-color:#484848;border-right-color:#484848"></div>
<div class="t m" style="top:678.6px;font-size:29px;line-height:29px;color:#e4e4e4;left:2984px;">1</div>
<div class="a" style="left:3175px;top:690px;width:647px;height:4px;background:#0c0c0c;border-bottom:1px solid #555"></div>
<div class="a" style="left:3175px;top:697px;width:647px;height:4px;background:repeating-linear-gradient(90deg,#7a7a7a 0 1px,transparent 1px 71.778px)"></div>
<div class="a" style="left:3171px;top:665.5px;width:6px;height:53px;background:linear-gradient(90deg,#b4b4b4,#7c7c7c);border:1px solid #333"></div>
<div class="t" style="top:736.9px;font-size:28px;line-height:28px;color:#cccccc;left:2349.173074404762px;width:600px;text-align:right;letter-spacing:0.17px;">Constraint Iterations</div>
<div class="a" style="left:2977px;top:726px;width:190px;height:53px;background:#131313;border:2px solid #2b2b2b;border-bottom-color:#484848;border-right-color:#484848"></div>
<div class="t m" style="top:738.6px;font-size:29px;line-height:29px;color:#e4e4e4;left:2984px;">100</div>
<div class="a" style="left:3175px;top:750px;width:647px;height:4px;background:#0c0c0c;border-bottom:1px solid #555"></div>
<div class="a" style="left:3175px;top:750px;width:323px;height:4px;background:#2a5cb8;border-top:1px solid #142c60;border-bottom:1px solid #142c60"></div>
<div class="a" style="left:3175px;top:757px;width:647px;height:4px;background:repeating-linear-gradient(90deg,#7a7a7a 0 1px,transparent 1px 16.150px)"></div>
<div class="a" style="left:3495px;top:725.5px;width:6px;height:53px;background:linear-gradient(90deg,#b4b4b4,#7c7c7c);border:1px solid #333"></div>
<div class="t" style="top:796.9px;font-size:28px;line-height:28px;color:#cccccc;left:2349.134309375px;width:600px;text-align:right;letter-spacing:0.13px;">Smoothing Iterations</div>
<div class="a" style="left:2977px;top:786px;width:190px;height:53px;background:#131313;border:2px solid #2b2b2b;border-bottom-color:#484848;border-right-color:#484848"></div>
<div class="t m" style="top:798.6px;font-size:29px;line-height:29px;color:#e4e4e4;left:2984px;">10</div>
<div class="a" style="left:3175px;top:810px;width:647px;height:4px;background:#0c0c0c;border-bottom:1px solid #555"></div>
<div class="a" style="left:3175px;top:810px;width:129px;height:4px;background:#2a5cb8;border-top:1px solid #142c60;border-bottom:1px solid #142c60"></div>
<div class="a" style="left:3175px;top:817px;width:647px;height:4px;background:repeating-linear-gradient(90deg,#7a7a7a 0 1px,transparent 1px 12.920px)"></div>
<div class="a" style="left:3301px;top:785.5px;width:6px;height:53px;background:linear-gradient(90deg,#b4b4b4,#7c7c7c);border:1px solid #333"></div>
<div class="a" style="left:2635px;top:844px;width:159px;height:53px;background:linear-gradient(#4a4a4a,#3a3a3a);border-left:1px solid #5a5a5a;border-top:1px solid #5a5a5a;border-right:1px solid #1c1c1c"></div>
<div class="t" style="top:858.9px;font-size:28px;line-height:28px;color:#cccccc;left:2652px;letter-spacing:-0.08px;">Collisions</div>
<div class="a" style="left:2635px;top:896px;width:1190px;height:407px;border:1px solid #111;border-top:1px solid #555;border-left:1px solid #4c4c4c"></div>
<div class="a" style="left:2636px;top:896px;width:157px;height:2px;background:#3a3a3a;"></div>
<div class="a" style="left:2981px;top:910px;width:33px;height:33px;background:#131313;border:1px solid #2a2a2a;border-bottom-color:#4a4a4a;border-right-color:#4a4a4a"></div>
<svg class="a" style="left:2982px;top:907px;" width="34" height="34" viewBox="0 0 34 34"><path d="M3 19L9 15C11 19 12 22 14 27C18 16 24 7 32 1C28 9 22 20 17 32H11C9 27 6 22 3 19z" fill="#e2e2e2"/></svg>
<div class="t" style="top:912.9px;font-size:28px;line-height:28px;color:#cccccc;left:3035px;letter-spacing:-0.34px;">Enable Collisions</div>
<div class="a" style="left:2981px;top:962px;width:33px;height:33px;background:#131313;border:1px solid #2a2a2a;border-bottom-color:#4a4a4a;border-right-color:#4a4a4a"></div>
<svg class="a" style="left:2982px;top:959px;" width="34" height="34" viewBox="0 0 34 34"><path d="M3 19L9 15C11 19 12 22 14 27C18 16 24 7 32 1C28 9 22 20 17 32H11C9 27 6 22 3 19z" fill="#e2e2e2"/></svg>
<div class="t" style="top:964.9px;font-size:28px;line-height:28px;color:#cccccc;left:3035px;letter-spacing:-0.36px;">Self Collisions</div>
<div class="a" style="left:2644px;top:1013px;width:33px;height:33px;background:#131313;border:1px solid #2a2a2a;border-bottom-color:#4a4a4a;border-right-color:#4a4a4a"></div>
<div class="t" style="top:1014.9px;font-size:28px;line-height:28px;color:#6c6c6c;left:2349.8409166666665px;width:600px;text-align:right;letter-spacing:-0.16px;">Ground Position</div>
<div class="a" style="left:2979px;top:1008px;width:277px;height:44px;background:#2d2d2d;border:1px solid #333"></div>
<div class="t m" style="top:1016.9px;font-size:28px;line-height:28px;color:#5a5a5a;left:2985px;">0</div>
<div class="a" style="left:3260px;top:1008px;width:277px;height:44px;background:#2d2d2d;border:1px solid #333"></div>
<div class="t m" style="top:1016.9px;font-size:28px;line-height:28px;color:#5a5a5a;left:3266px;">0</div>
<div class="a" style="left:3541px;top:1008px;width:277px;height:44px;background:#2d2d2d;border:1px solid #333"></div>
<div class="t m" style="top:1016.9px;font-size:28px;line-height:28px;color:#5a5a5a;left:3547px;">0</div>
<div class="t" style="top:1069.9px;font-size:28px;line-height:28px;color:#cccccc;left:2355.4111796875px;width:600px;text-align:right;letter-spacing:-0.59px;">Collision Passes</div>
<div class="a" style="left:2984px;top:1059px;width:189px;height:53px;background:#131313;border:2px solid #2b2b2b;border-bottom-color:#484848;border-right-color:#484848"></div>
<div class="t m" style="top:1071.6px;font-size:29px;line-height:29px;color:#e4e4e4;left:2991px;">10</div>
<div class="a" style="left:3180px;top:1083px;width:637px;height:4px;background:#0c0c0c;border-bottom:1px solid #555"></div>
<div class="a" style="left:3180px;top:1083px;width:634px;height:4px;background:#2a5cb8;border-top:1px solid #142c60;border-bottom:1px solid #142c60"></div>
<div class="a" style="left:3180px;top:1090px;width:637px;height:4px;background:repeating-linear-gradient(90deg,#7a7a7a 0 1px,transparent 1px 63.600px)"></div>
<div class="a" style="left:3811px;top:1058.5px;width:6px;height:53px;background:linear-gradient(90deg,#b4b4b4,#7c7c7c);border:1px solid #333"></div>
<div class="t" style="top:1129.9px;font-size:28px;line-height:28px;color:#cccccc;left:2355.398672619048px;width:600px;text-align:right;letter-spacing:-0.60px;">Post Collision Passes</div>
<div class="a" style="left:2984px;top:1119px;width:189px;height:53px;background:#131313;border:2px solid #2b2b2b;border-bottom-color:#484848;border-right-color:#484848"></div>
<div class="t m" style="top:1131.6px;font-size:29px;line-height:29px;color:#e4e4e4;left:2991px;">3</div>
<div class="a" style="left:3180px;top:1143px;width:637px;height:4px;background:#0c0c0c;border-bottom:1px solid #555"></div>
<div class="a" style="left:3180px;top:1143px;width:190px;height:4px;background:#2a5cb8;border-top:1px solid #142c60;border-bottom:1px solid #142c60"></div>
<div class="a" style="left:3180px;top:1150px;width:637px;height:4px;background:repeating-linear-gradient(90deg,#7a7a7a 0 1px,transparent 1px 63.600px)"></div>
<div class="a" style="left:3367px;top:1118.5px;width:6px;height:53px;background:linear-gradient(90deg,#b4b4b4,#7c7c7c);border:1px solid #333"></div>
<div class="t" style="top:1189.9px;font-size:28px;line-height:28px;color:#cccccc;left:2351.1028990384616px;width:600px;text-align:right;letter-spacing:-0.90px;">Polish Passes</div>
<div class="a" style="left:2980px;top:1179px;width:189px;height:53px;background:#131313;border:2px solid #2b2b2b;border-bottom-color:#484848;border-right-color:#484848"></div>
<div class="t m" style="top:1191.6px;font-size:29px;line-height:29px;color:#e4e4e4;left:2987px;">10</div>
<div class="a" style="left:3175px;top:1203px;width:642px;height:4px;background:#0c0c0c;border-bottom:1px solid #555"></div>
<div class="a" style="left:3175px;top:1203px;width:639px;height:4px;background:#2a5cb8;border-top:1px solid #142c60;border-bottom:1px solid #142c60"></div>
<div class="a" style="left:3175px;top:1210px;width:642px;height:4px;background:repeating-linear-gradient(90deg,#7a7a7a 0 1px,transparent 1px 64.100px)"></div>
<div class="a" style="left:3811px;top:1178.5px;width:6px;height:53px;background:linear-gradient(90deg,#b4b4b4,#7c7c7c);border:1px solid #333"></div>
<div class="a" style="left:2644px;top:1189px;width:33px;height:33px;background:#131313;border:1px solid #2a2a2a;border-bottom-color:#4a4a4a;border-right-color:#4a4a4a"></div>
<svg class="a" style="left:2645px;top:1186px;" width="34" height="34" viewBox="0 0 34 34"><path d="M3 19L9 15C11 19 12 22 14 27C18 16 24 7 32 1C28 9 22 20 17 32H11C9 27 6 22 3 19z" fill="#e2e2e2"/></svg>
<div class="t" style="top:1249.9px;font-size:28px;line-height:28px;color:#cccccc;left:2355.332590909091px;width:600px;text-align:right;letter-spacing:-0.67px;">Layer Shock</div>
<div class="a" style="left:2984px;top:1239px;width:189px;height:53px;background:#131313;border:2px solid #2b2b2b;border-bottom-color:#484848;border-right-color:#484848"></div>
<div class="t m" style="top:1251.6px;font-size:29px;line-height:29px;color:#e4e4e4;left:2991px;">4</div>
<div class="a" style="left:3180px;top:1263px;width:637px;height:4px;background:#0c0c0c;border-bottom:1px solid #555"></div>
<div class="a" style="left:3180px;top:1263px;width:211px;height:4px;background:#2a5cb8;border-top:1px solid #142c60;border-bottom:1px solid #142c60"></div>
<div class="a" style="left:3388px;top:1238.5px;width:6px;height:53px;background:linear-gradient(90deg,#b4b4b4,#7c7c7c);border:1px solid #333"></div>
<div class="a" style="left:0px;top:1792px;width:3840px;height:3px;background:#4a4a4a;border-top:1px solid #222;border-bottom:1px solid #1c1c1c"></div>
<div class="a" style="left:0px;top:1795px;width:3840px;height:177px;background:#2e2e2e;"></div>
<div class="a" style="left:0px;top:1795px;width:26px;height:177px;background:linear-gradient(90deg,#3e3e3e,#4b4b4b);border-right:2px solid #1c1c1c;border-left:2px solid #111"></div>
<svg class="a" style="left:6px;top:1952px;" width="16" height="14" viewBox="0 0 16 14"><path d="M1 1H15L8 13z" fill="#000"/></svg>
<div class="a" style="left:34px;top:1819px;width:68px;height:69px;background:linear-gradient(#535353,#414141);border:1px solid #1c1c1c;border-top:1px solid #686868;border-left:1px solid #5c5c5c"></div>
<div class="a" style="left:102px;top:1819px;width:68px;height:69px;background:linear-gradient(#535353,#414141);border:1px solid #1c1c1c;border-top:1px solid #686868;border-left:1px solid #5c5c5c"></div>
<div class="a" style="left:170px;top:1819px;width:68px;height:69px;background:linear-gradient(#55666f,#9aa8ae);border:1px solid #1c1c1c"></div>
<div class="a" style="left:238px;top:1819px;width:68px;height:69px;background:linear-gradient(#535353,#414141);border:1px solid #1c1c1c;border-top:1px solid #686868;border-left:1px solid #5c5c5c"></div>
<div class="a" style="left:306px;top:1819px;width:68px;height:69px;background:linear-gradient(#535353,#414141);border:1px solid #1c1c1c;border-top:1px solid #686868;border-left:1px solid #5c5c5c"></div>
<svg class="a" style="left:34px;top:1819px;" width="68" height="69" viewBox="0 0 68 69"><rect x="7" y="19" width="7" height="31" fill="#e4e4e2" stroke="#8c8c8c" stroke-width="1.2"/><path d="M18 35L38 21V49z" fill="#e4e4e2" stroke="#8c8c8c" stroke-width="1.2"/><path d="M42 35L62 21V49z" fill="#e4e4e2" stroke="#8c8c8c" stroke-width="1.2"/></svg>
<svg class="a" style="left:102px;top:1819px;" width="68" height="69" viewBox="0 0 68 69"><path d="M18 35L50 14V56z" fill="#e4e4e2" stroke="#8c8c8c" stroke-width="1.2"/></svg>
<svg class="a" style="left:170px;top:1819px;" width="68" height="69" viewBox="0 0 68 69"><rect x="16" y="15" width="38" height="38" fill="#e4e4e2" stroke="#5a5a5a" stroke-width="2.5"/></svg>
<svg class="a" style="left:238px;top:1819px;" width="68" height="69" viewBox="0 0 68 69"><path d="M50 35L18 14V56z" fill="#e4e4e2" stroke="#8c8c8c" stroke-width="1.2"/></svg>
<svg class="a" style="left:306px;top:1819px;" width="68" height="69" viewBox="0 0 68 69"><path d="M6 21L26 35L6 49z" fill="#e4e4e2" stroke="#8c8c8c" stroke-width="1.2"/><path d="M30 21L50 35L30 49z" fill="#e4e4e2" stroke="#8c8c8c" stroke-width="1.2"/><rect x="54" y="19" width="7" height="31" fill="#e4e4e2" stroke="#8c8c8c" stroke-width="1.2"/></svg>
<div class="a" style="left:377px;top:1817px;width:118px;height:71px;background:#111;border:1px solid #252525;border-bottom-color:#3c3c3c"></div>
<div class="t" style="top:1837.2px;font-size:30px;line-height:30px;color:#e8e8e8;left:382px;">2</div>
<div class="a" style="left:497px;top:1821px;width:34px;height:68px;background:linear-gradient(#535353,#414141);border:1px solid #1c1c1c;border-top:1px solid #686868;border-left:1px solid #5c5c5c"></div>
<div class="a" style="left:531px;top:1821px;width:34px;height:68px;background:linear-gradient(#535353,#414141);border:1px solid #1c1c1c;border-top:1px solid #686868;border-left:1px solid #5c5c5c"></div>
<svg class="a" style="left:497px;top:1821px;" width="34" height="68" viewBox="0 0 34 68"><path d="M7 34L17 27V41z" fill="#e0e0e0"/><rect x="19" y="26" width="6" height="17" fill="#e0e0e0" stroke="#888" stroke-width="1"/></svg>
<svg class="a" style="left:531px;top:1821px;" width="34" height="68" viewBox="0 0 34 68"><rect x="8" y="26" width="6" height="17" fill="#e0e0e0" stroke="#888" stroke-width="1"/><path d="M27 34L17 27V41z" fill="#e0e0e0"/></svg>
<div class="a" style="left:34px;top:1907px;width:68px;height:59px;background:linear-gradient(#535353,#414141);border:1px solid #1c1c1c;border-top:1px solid #686868;border-left:1px solid #5c5c5c"></div>
<div class="a" style="left:102px;top:1907px;width:68px;height:59px;background:linear-gradient(#535353,#414141);border:1px solid #1c1c1c;border-top:1px solid #686868;border-left:1px solid #5c5c5c"></div>
<div class="a" style="left:170px;top:1907px;width:68px;height:59px;background:linear-gradient(#535353,#414141);border:1px solid #1c1c1c;border-top:1px solid #686868;border-left:1px solid #5c5c5c"></div>
<div class="a" style="left:238px;top:1907px;width:68px;height:59px;background:linear-gradient(#55666f,#9aa8ae);border:1px solid #1c1c1c"></div>
<svg class="a" style="left:34px;top:1907px;" width="68" height="59" viewBox="0 0 68 59"><rect x="20" y="9" width="32" height="5" fill="#8c8c8c"/><rect x="20" y="17" width="32" height="24" fill="#e8e8e8" stroke="#555" stroke-width="1"/><path d="M38 26V50L44 45L48 54L52 52L48 43L56 42z" fill="#111" stroke="#f0f0f0" stroke-width="2" stroke-linejoin="round"/></svg>
<svg class="a" style="left:102px;top:1907px;" width="68" height="59" viewBox="0 0 68 59"><path d="M14 24H22L30 14V46L22 36H14z" fill="#3a3a3a" stroke="#222"/><ellipse cx="36" cy="30" rx="15" ry="24" fill="#5c666c" stroke="#e0e0e0" stroke-width="3"/><ellipse cx="34" cy="31" rx="5" ry="12" fill="#1c2830"/></svg>
<svg class="a" style="left:170px;top:1907px;" width="68" height="59" viewBox="0 0 68 59"><path d="M14 40H54C56 26 44 16 30 20V13L13 25L30 36V29C38 27 44 32 44 40" fill="#e8e8e8" stroke="#000" stroke-width="2.5" stroke-linejoin="round"/><path d="M50 46H66L58 55z" fill="#8a8a8a"/></svg>
<svg class="a" style="left:238px;top:1907px;" width="68" height="59" viewBox="0 0 68 59"><circle cx="34" cy="29" r="19" fill="none" stroke="#ececec" stroke-width="4"/><path d="M34 20V38M25 29H43" stroke="#1c1c1c" stroke-width="3.5"/></svg>
<div class="a" style="left:310px;top:1907px;width:58px;height:59px;background:#2c2c2c;border:1px solid #222;border-top:1px solid #3a3a3a"></div>
<div class="a" style="left:368px;top:1907px;width:58px;height:59px;background:#2c2c2c;border:1px solid #222;border-top:1px solid #3a3a3a"></div>
<svg class="a" style="left:310px;top:1907px;" width="58" height="59" viewBox="0 0 58 59"><rect x="15" y="17" width="6" height="24" fill="#3c4a34" stroke="#2a3424"/><path d="M25 29L42 18V40z" fill="#444"/></svg>
<svg class="a" style="left:368px;top:1907px;" width="58" height="59" viewBox="0 0 58 59"><path d="M33 29L16 18V40z" fill="#444"/><rect x="37" y="17" width="6" height="24" fill="#3c4a34" stroke="#2a3424"/></svg>
<div class="a" style="left:574px;top:1851.5px;width:2651px;height:1.6px;background:#a8a8a8;"></div>
<div class="a" style="left:575px;top:1840px;width:2px;height:24px;background:#868686;"></div>
<div class="t" style="top:1799.7px;font-size:23.5px;line-height:23.5px;color:#858585;left:574px;letter-spacing:-0.3px">1</div>
<div class="a" style="left:707px;top:1840px;width:2px;height:24px;background:#868686;"></div>
<div class="t" style="top:1799.7px;font-size:23.5px;line-height:23.5px;color:#858585;left:706px;letter-spacing:-0.3px">2</div>
<div class="a" style="left:840px;top:1840px;width:2px;height:24px;background:#868686;"></div>
<div class="t" style="top:1799.7px;font-size:23.5px;line-height:23.5px;color:#858585;left:839px;letter-spacing:-0.3px">3</div>
<div class="a" style="left:972px;top:1840px;width:2px;height:24px;background:#868686;"></div>
<div class="t" style="top:1799.7px;font-size:23.5px;line-height:23.5px;color:#858585;left:971px;letter-spacing:-0.3px">4</div>
<div class="a" style="left:1105px;top:1840px;width:2px;height:24px;background:#868686;"></div>
<div class="t" style="top:1799.7px;font-size:23.5px;line-height:23.5px;color:#858585;left:1104px;letter-spacing:-0.3px">5</div>
<div class="a" style="left:1237px;top:1834px;width:2px;height:37px;background:#d0d0d0;"></div>
<div class="t" style="top:1799.7px;font-size:23.5px;line-height:23.5px;color:#c8c8c8;left:1236px;letter-spacing:-0.3px">6</div>
<div class="a" style="left:1370px;top:1840px;width:2px;height:24px;background:#868686;"></div>
<div class="t" style="top:1799.7px;font-size:23.5px;line-height:23.5px;color:#858585;left:1369px;letter-spacing:-0.3px">7</div>
<div class="a" style="left:1502px;top:1840px;width:2px;height:24px;background:#868686;"></div>
<div class="t" style="top:1799.7px;font-size:23.5px;line-height:23.5px;color:#858585;left:1501px;letter-spacing:-0.3px">8</div>
<div class="a" style="left:1635px;top:1840px;width:2px;height:24px;background:#868686;"></div>
<div class="t" style="top:1799.7px;font-size:23.5px;line-height:23.5px;color:#858585;left:1634px;letter-spacing:-0.3px">9</div>
<div class="a" style="left:1767px;top:1840px;width:2px;height:24px;background:#868686;"></div>
<div class="t" style="top:1799.7px;font-size:23.5px;line-height:23.5px;color:#858585;left:1766px;letter-spacing:-0.3px">10</div>
<div class="a" style="left:1900px;top:1840px;width:2px;height:24px;background:#868686;"></div>
<div class="t" style="top:1799.7px;font-size:23.5px;line-height:23.5px;color:#858585;left:1899px;letter-spacing:-0.3px">11</div>
<div class="a" style="left:2032px;top:1834px;width:2px;height:37px;background:#d0d0d0;"></div>
<div class="t" style="top:1799.7px;font-size:23.5px;line-height:23.5px;color:#c8c8c8;left:2031px;letter-spacing:-0.3px">12</div>
<div class="a" style="left:2165px;top:1840px;width:2px;height:24px;background:#868686;"></div>
<div class="t" style="top:1799.7px;font-size:23.5px;line-height:23.5px;color:#858585;left:2164px;letter-spacing:-0.3px">13</div>
<div class="a" style="left:2297px;top:1840px;width:2px;height:24px;background:#868686;"></div>
<div class="t" style="top:1799.7px;font-size:23.5px;line-height:23.5px;color:#858585;left:2296px;letter-spacing:-0.3px">14</div>
<div class="a" style="left:2430px;top:1840px;width:2px;height:24px;background:#868686;"></div>
<div class="t" style="top:1799.7px;font-size:23.5px;line-height:23.5px;color:#858585;left:2429px;letter-spacing:-0.3px">15</div>
<div class="a" style="left:2562px;top:1840px;width:2px;height:24px;background:#868686;"></div>
<div class="t" style="top:1799.7px;font-size:23.5px;line-height:23.5px;color:#858585;left:2561px;letter-spacing:-0.3px">16</div>
<div class="a" style="left:2695px;top:1840px;width:2px;height:24px;background:#868686;"></div>
<div class="t" style="top:1799.7px;font-size:23.5px;line-height:23.5px;color:#858585;left:2694px;letter-spacing:-0.3px">17</div>
<div class="a" style="left:2827px;top:1834px;width:2px;height:37px;background:#d0d0d0;"></div>
<div class="t" style="top:1799.7px;font-size:23.5px;line-height:23.5px;color:#c8c8c8;left:2826px;letter-spacing:-0.3px">18</div>
<div class="a" style="left:2960px;top:1840px;width:2px;height:24px;background:#868686;"></div>
<div class="t" style="top:1799.7px;font-size:23.5px;line-height:23.5px;color:#858585;left:2959px;letter-spacing:-0.3px">19</div>
<div class="a" style="left:3092px;top:1840px;width:2px;height:24px;background:#868686;"></div>
<div class="t" style="top:1799.7px;font-size:23.5px;line-height:23.5px;color:#858585;left:3091px;letter-spacing:-0.3px">20</div>
<svg class="a" style="left:676px;top:1800px;" width="62" height="50" viewBox="0 0 62 50"><path d="M2 2H59V34H39L30.5 46L22 34H2z" fill="#000" stroke="#e8e8e8" stroke-width="1.5"/></svg>
<div class="t" style="top:1806.1px;font-size:29px;line-height:29px;color:#ffffff;left:677.0px;width:60px;text-align:center;">2</div>
<div class="a" style="left:574px;top:1905px;width:106px;height:53px;background:#222;border:1px solid #1a1a1a"></div>
<div class="t" style="top:1919.2px;font-size:27px;line-height:27px;color:#f0f0f0;left:580px;">1</div>
<div class="a" style="left:685px;top:1905px;width:106px;height:53px;background:#111;border:1px solid #1a1a1a;border-bottom-color:#3a3a3a"></div>
<div class="t" style="top:1919.2px;font-size:27px;line-height:27px;color:#f0f0f0;left:691px;">1</div>
<div class="a" style="left:803px;top:1929px;width:1810px;height:12px;background:#808080;"></div>
<svg class="a" style="left:794px;top:1920px;" width="16" height="30" viewBox="0 0 16 30"><path d="M1 1L15 15L1 29z" fill="#8c8c8c"/></svg>
<svg class="a" style="left:2602px;top:1920px;" width="20" height="30" viewBox="0 0 20 30"><path d="M19 1L5 15L19 29z" fill="#9a9a9a"/><rect x="0" y="9" width="8" height="12" fill="#808080"/></svg>
<div class="a" style="left:2620px;top:1931px;width:385px;height:9px;background:#181818;"></div>
<div class="a" style="left:3008px;top:1906px;width:105px;height:53px;background:#111;border:1px solid #1a1a1a;border-bottom-color:#3a3a3a"></div>
<div class="t m" style="top:1919.1px;font-size:29px;line-height:29px;color:#e8e8e8;left:3012px;">20</div>
<div class="a" style="left:3119px;top:1906px;width:106px;height:53px;background:#222;border:1px solid #1a1a1a"></div>
<div class="t m" style="top:1919.1px;font-size:29px;line-height:29px;color:#e8e8e8;left:3123px;">24</div>
<div class="a" style="left:3322px;top:1854px;width:49px;height:54px;background:linear-gradient(#464646,#343434);border:1px solid #222;border-top:1px solid #555"></div>
<svg class="a" style="left:3338px;top:1873px;" width="16" height="14" viewBox="0 0 16 14"><path d="M1 1H15L8 13z" fill="#8a8a8a"/></svg>
<svg class="a" style="left:3231px;top:1831px;" width="100" height="100" viewBox="0 0 100 100"><circle cx="50" cy="50" r="49" fill="#323232" stroke="#3e3e3e" stroke-width="1.5"/><g transform="rotate(-40 50 50)" fill="none" stroke="#6a6a6a"><circle cx="66" cy="50" r="9" stroke-width="6"/><path d="M57 50H26M34 50V60M42 50V58" stroke-width="6"/></g></svg>
<div class="a" style="left:3381px;top:1821px;width:59px;height:58px;background:#454545;border:1px solid #1c1c1c;border-top:1px solid #666"></div>
<svg class="a" style="left:3383px;top:1823px;" width="56" height="56" viewBox="0 0 56 56"><rect x="3" y="4" width="38" height="48" fill="#a2a2a2" stroke="#3a3a3a" stroke-width="3"/><g><rect x="5" y="18" width="7" height="6.500" fill="#c81018"/><rect x="5" y="24.500" width="7" height="6.500" fill="#70c020"/><rect x="5" y="31" width="7" height="6.500" fill="#3c8ce0"/><rect x="5" y="37.500" width="7" height="6.500" fill="#c81018"/><rect x="5" y="44" width="7" height="6.500" fill="#70c020"/><rect x="12" y="18" width="8" height="32.500" fill="#8a8a8a"/></g><g stroke="#0a0a0a" stroke-width="2.200" fill="#e8e8e8" stroke-linejoin="round"><path d="M20 27A15 14 0 0 1 45 17L49 11L51 27L35 27L40 22A9 8.500 0 0 0 27 28z"/><path d="M50 31A15 14 0 0 1 25 41L21 47L19 31L35 31L30 36A9 8.500 0 0 0 43 30z"/></g><path d="M46 42L56 49L46 56z" fill="#9a9a9a"/></svg>
<div class="a" style="left:3381px;top:1886px;width:59px;height:57px;background:#454545;border:1px solid #1c1c1c;border-top:1px solid #666"></div>
<svg class="a" style="left:3387px;top:1890px;" width="48" height="48" viewBox="0 0 48 48"><rect x="0" y="0" width="48" height="48" fill="#000"/><path d="M1 25H47" stroke="#e4e4e4" stroke-width="2.400"/><path d="M2 26C8 30 10 46 15 44C22 40 24 6 32 5C39 5 42 22 46 27" fill="none" stroke="#6a9cd4" stroke-width="2.800"/><path d="M2 26C6 18 10 15 14 16C20 18 24 30 31 31C37 31 41 25 46 25" fill="none" stroke="#f0a430" stroke-width="2.800"/></svg>
<div class="a" style="left:3447px;top:1821px;width:383px;height:58px;background:linear-gradient(#575757,#444);border:1px solid #1c1c1c;border-top:1px solid #6a6a6a;border-left:1px solid #606060"></div>
<div class="t" style="top:1836.5px;font-size:28.5px;line-height:28.5px;color:#cccccc;left:3492px;letter-spacing:-0.72px;">0 keys, 0/0 channels</div>
<svg class="a" style="left:3796px;top:1841px;" width="18" height="16" viewBox="0 0 18 16"><path d="M9 1L17 15H1z" fill="#9a9a9a"/></svg>
<div class="a" style="left:3447px;top:1886px;width:383px;height:57px;background:linear-gradient(#575757,#444);border:1px solid #1c1c1c;border-top:1px solid #6a6a6a;border-left:1px solid #606060"></div>
<div class="a" style="left:3810px;top:1887px;width:20px;height:55px;background:#303030;"></div>
<svg class="a" style="left:3813px;top:1899px;" width="14" height="30" viewBox="0 0 14 30"><path d="M7 1L13 13H1z M7 29L13 17H1z" fill="#8a8a8a"/></svg>
<div class="t" style="top:1901.5px;font-size:28.5px;line-height:28.5px;color:#cccccc;left:3480px;letter-spacing:-0.84px;">Key All Channels</div>
<div class="a" style="left:0px;top:1971px;width:3840px;height:2px;background:#0c0c0c;"></div>
<div class="a" style="left:0px;top:1973px;width:3840px;height:58px;background:#191919;"></div>
<div class="a" style="left:0px;top:2033px;width:3840px;height:2px;background:#2a2a2a;"></div>
<div class="a" style="left:3144px;top:1973px;width:64px;height:58px;background:#3a3a3a;"></div>
<svg class="a" style="left:3148px;top:1975px;" width="58" height="56" viewBox="0 0 58 56"><path d="M6 30C2 18 12 6 28 5C44 4 54 14 52 26C51 34 46 36 44 42C38 44 34 40 30 44C24 48 20 42 14 42C8 40 8 36 6 30z" fill="#c6c6c2" stroke="#7a7a76" stroke-width="1"/><path d="M14 14c6-2 8 4 14 2s8-6 14-2M10 24c6 2 10-4 16-2s10 4 18 0M14 34c4 2 8-2 12 0s8 2 12-2M28 6c-2 6 4 8 2 14M38 10c-2 6 4 8 2 16M20 10c-2 6 2 10 0 14" stroke="#6e6e6a" stroke-width="1.3" fill="none"/><path d="M46 42L56 48L46 55z" fill="#9a9a9a"/></svg>
<div class="a" style="left:3208px;top:1973px;width:319px;height:58px;background:linear-gradient(#505050,#404040);border-left:1px solid #1c1c1c;border-top:1px solid #5c5c5c"></div>
<div class="a" style="left:3503px;top:1974px;width:24px;height:57px;background:#303030;"></div>
<svg class="a" style="left:3508px;top:1987px;" width="14" height="30" viewBox="0 0 14 30"><path d="M7 1L13 13H1z M7 29L13 17H1z" fill="#8a8a8a"/></svg>
<div class="t" style="top:1987.5px;font-size:28.5px;line-height:28.5px;color:#cccccc;left:3243px;letter-spacing:0.15px;">/obj/geo1/vellums…</div>
<div class="a" style="left:3528px;top:1973px;width:68px;height:58px;background:#3c3c3c;"></div>
<svg class="a" style="left:3536px;top:1977px;" width="52" height="50" viewBox="0 0 52 50"><path d="M8 22A18 16 0 0 1 40 12L46 6V24H28L34 18A11 10 0 0 0 17 24zM44 28A18 16 0 0 1 12 38L6 44V26H24L18 32A11 10 0 0 0 35 26z" fill="#4c4c4c"/></svg>
<div class="a" style="left:3596px;top:1973px;width:244px;height:58px;background:linear-gradient(#505050,#404040);border-left:1px solid #1c1c1c;border-top:1px solid #5c5c5c"></div>
<div class="a" style="left:3816px;top:1974px;width:24px;height:57px;background:#303030;"></div>
<svg class="a" style="left:3821px;top:1987px;" width="14" height="30" viewBox="0 0 14 30"><path d="M7 1L13 13H1z M7 29L13 17H1z" fill="#8a8a8a"/></svg>
<div class="t" style="top:1987.5px;font-size:28.5px;line-height:28.5px;color:#cccccc;left:3630px;letter-spacing:-0.31px;">Auto Update</div>
</body></html>
